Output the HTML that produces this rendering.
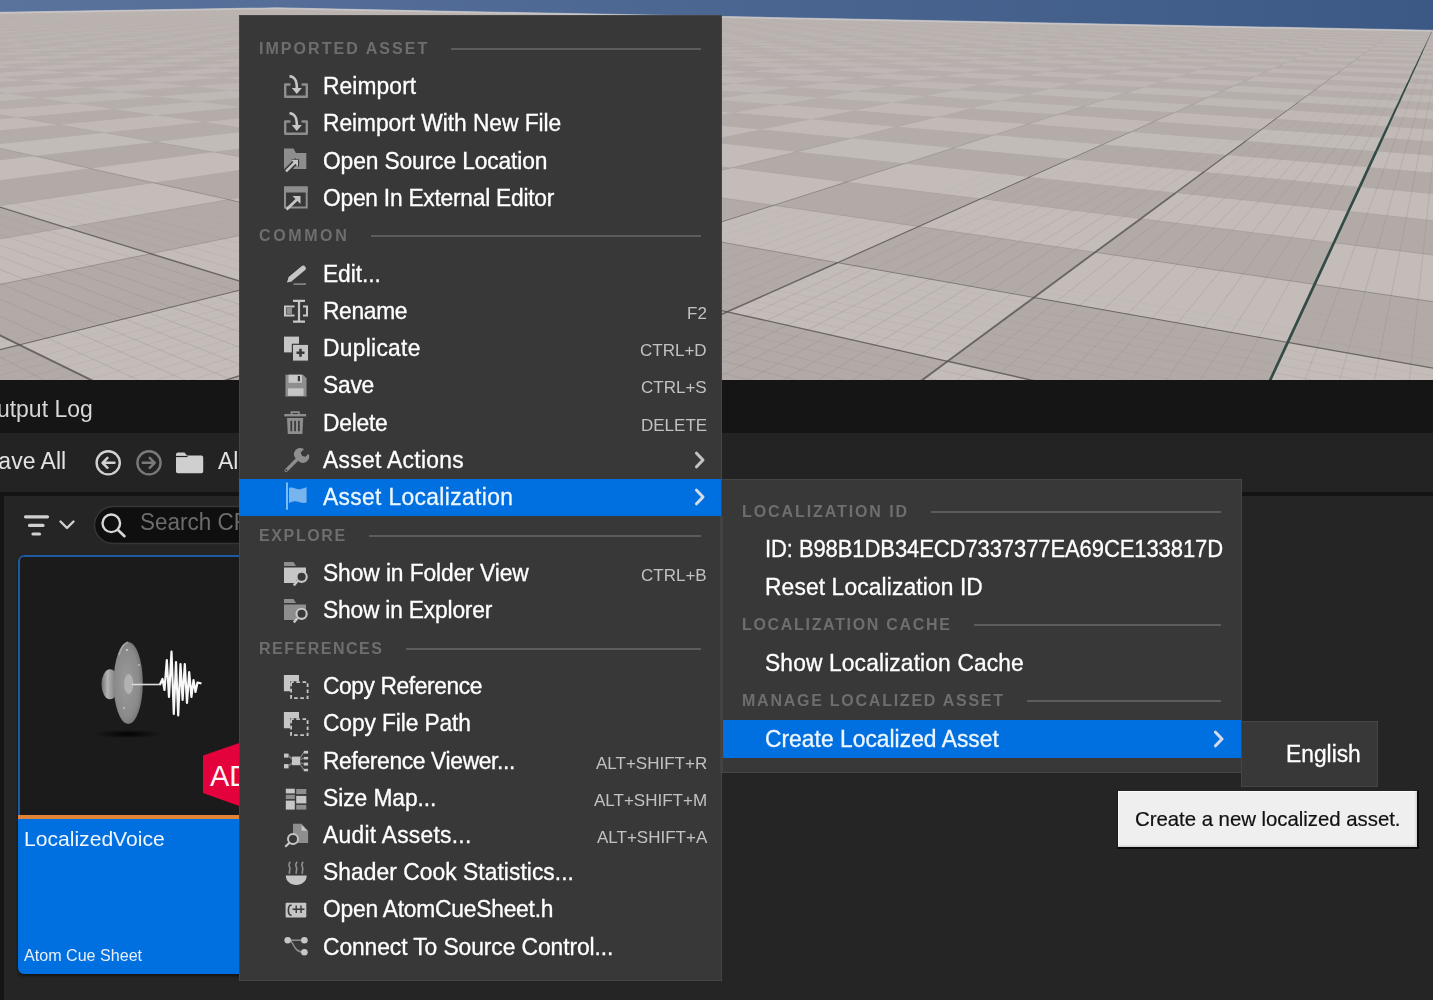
<!DOCTYPE html>
<html><head><meta charset="utf-8">
<style>
*{margin:0;padding:0;box-sizing:border-box}
html,body{width:1433px;height:1000px;overflow:hidden;background:#242424;font-family:"Liberation Sans",sans-serif}
.a{position:absolute}
.t{position:absolute;white-space:nowrap;line-height:1;will-change:transform}
.it{-webkit-text-stroke:0.3px currentColor}
.a svg{display:block}
</style></head><body>
<svg width="1433" height="380" viewBox="0 0 1433 380" style="position:absolute;left:0;top:0;filter:blur(0.45px)"><defs><linearGradient id="sky" x1="0" y1="0" x2="1" y2="0"><stop offset="0" stop-color="#5a739d"/><stop offset="1" stop-color="#3c5985"/></linearGradient><clipPath id="fl"><polygon points="0.0,12.3 276.7,7.8 1433.0,30.3 1433,380 0,380"/></clipPath><linearGradient id="fog" x1="0" y1="0" x2="0" y2="1"><stop offset="0" stop-color="#bab3b0" stop-opacity="0.9"/><stop offset="0.06" stop-color="#bab3b0" stop-opacity="0.3"/><stop offset="0.15" stop-color="#bab3b0" stop-opacity="0"/></linearGradient></defs><rect width="1433" height="380" fill="url(#sky)"/><g clip-path="url(#fl)"><rect width="1433" height="380" fill="#bab3b0"/><g fill="#c3bcb9" fill-opacity="0.3"><polygon points="-12.0,15.5 -4.3,15.8 -26.5,16.2 -34.1,15.9"/><polygon points="17.3,15.4 25.3,15.7 3.7,16.1 -4.3,15.8"/><polygon points="3.7,16.1 11.8,16.5 -10.7,16.9 -18.7,16.6"/><polygon points="33.6,16.0 42.0,16.4 20.1,16.8 11.8,16.5"/><polygon points="-10.7,16.9 -2.5,17.2 -25.9,17.7 -33.9,17.3"/><polygon points="63.3,15.9 72.0,16.2 50.6,16.7 42.0,16.4"/><polygon points="20.1,16.8 28.6,17.1 5.8,17.6 -2.5,17.2"/><polygon points="92.7,15.8 101.7,16.1 80.9,16.6 72.0,16.2"/><polygon points="50.6,16.7 59.4,17.0 37.3,17.4 28.6,17.1"/><polygon points="5.8,17.6 14.4,17.9 -9.2,18.4 -17.7,18.0"/><polygon points="121.9,15.7 131.3,16.0 111.0,16.5 101.7,16.1"/><polygon points="80.9,16.6 90.1,16.9 68.5,17.3 59.4,17.0"/><polygon points="37.3,17.4 46.2,17.8 23.2,18.3 14.4,17.9"/><polygon points="-9.2,18.4 -0.6,18.7 -25.2,19.2 -33.6,18.9"/><polygon points="150.9,15.6 160.5,15.9 140.8,16.3 131.3,16.0"/><polygon points="111.0,16.5 120.4,16.8 99.4,17.2 90.1,16.9"/><polygon points="68.5,17.3 77.7,17.7 55.3,18.1 46.2,17.8"/><polygon points="23.2,18.3 32.2,18.6 8.2,19.1 -0.6,18.7"/><polygon points="179.7,15.5 189.6,15.8 170.4,16.2 160.5,15.9"/><polygon points="140.8,16.3 150.5,16.7 130.1,17.1 120.4,16.8"/><polygon points="99.4,17.2 109.0,17.6 87.2,18.0 77.7,17.7"/><polygon points="55.3,18.1 64.7,18.5 41.4,19.0 32.2,18.6"/><polygon points="8.2,19.1 17.3,19.5 -7.6,20.0 -16.5,19.6"/><polygon points="208.3,15.4 218.4,15.7 199.7,16.1 189.6,15.8"/><polygon points="170.4,16.2 180.4,16.6 160.5,17.0 150.5,16.7"/><polygon points="130.1,17.1 140.0,17.4 118.8,17.9 109.0,17.6"/><polygon points="87.2,18.0 96.9,18.4 74.2,18.9 64.7,18.5"/><polygon points="41.4,19.0 50.8,19.4 26.6,19.9 17.3,19.5"/><polygon points="-7.6,20.0 1.6,20.4 -24.4,21.0 -33.4,20.6"/><polygon points="199.7,16.1 210.0,16.5 190.7,16.9 180.4,16.6"/><polygon points="160.5,17.0 170.7,17.3 150.1,17.8 140.0,17.4"/><polygon points="118.8,17.9 128.8,18.2 106.8,18.7 96.9,18.4"/><polygon points="74.2,18.9 84.0,19.2 60.5,19.8 50.8,19.4"/><polygon points="26.6,19.9 36.2,20.3 10.9,20.9 1.6,20.4"/><polygon points="228.8,16.0 239.5,16.3 220.6,16.8 210.0,16.5"/><polygon points="190.7,16.9 201.2,17.2 181.2,17.7 170.7,17.3"/><polygon points="150.1,17.8 160.5,18.1 139.1,18.6 128.8,18.2"/><polygon points="106.8,18.7 117.0,19.1 94.1,19.6 84.0,19.2"/><polygon points="60.5,19.8 70.4,20.2 45.9,20.7 36.2,20.3"/><polygon points="10.9,20.9 20.6,21.3 -5.8,21.9 -15.2,21.4"/><polygon points="257.7,15.9 268.6,16.2 250.3,16.7 239.5,16.3"/><polygon points="220.6,16.8 231.4,17.1 212.0,17.5 201.2,17.2"/><polygon points="181.2,17.7 191.9,18.0 171.1,18.5 160.5,18.1"/><polygon points="139.1,18.6 149.6,19.0 127.4,19.5 117.0,19.1"/><polygon points="94.1,19.6 104.4,20.0 80.6,20.6 70.4,20.2"/><polygon points="45.9,20.7 56.0,21.1 30.5,21.7 20.6,21.3"/><polygon points="-5.8,21.9 4.0,22.3 -23.5,23.0 -33.1,22.5"/><polygon points="286.4,15.8 297.6,16.1 279.8,16.6 268.6,16.2"/><polygon points="250.3,16.7 261.4,17.0 242.5,17.4 231.4,17.1"/><polygon points="212.0,17.5 223.0,17.9 202.8,18.4 191.9,18.0"/><polygon points="171.1,18.5 182.0,18.9 160.4,19.4 149.6,19.0"/><polygon points="127.4,19.5 138.1,19.9 115.0,20.4 104.4,20.0"/><polygon points="80.6,20.6 91.1,21.0 66.3,21.6 56.0,21.1"/><polygon points="30.5,21.7 40.6,22.2 13.9,22.8 4.0,22.3"/><polygon points="314.8,15.7 326.3,16.0 309.0,16.5 297.6,16.1"/><polygon points="279.8,16.6 291.2,16.9 272.8,17.3 261.4,17.0"/><polygon points="242.5,17.4 253.9,17.8 234.3,18.2 223.0,17.9"/><polygon points="202.8,18.4 214.0,18.7 193.1,19.2 182.0,18.9"/><polygon points="160.4,19.4 171.5,19.8 149.1,20.3 138.1,19.9"/><polygon points="115.0,20.4 125.9,20.9 101.9,21.4 91.1,21.0"/><polygon points="66.3,21.6 76.9,22.0 51.1,22.6 40.6,22.2"/><polygon points="13.9,22.8 24.2,23.3 -3.7,24.0 -13.8,23.5"/><polygon points="343.0,15.6 354.8,15.9 338.0,16.3 326.3,16.0"/><polygon points="309.0,16.5 320.7,16.8 302.9,17.2 291.2,16.9"/><polygon points="272.8,17.3 284.5,17.7 265.5,18.1 253.9,17.8"/><polygon points="234.3,18.2 245.8,18.6 225.5,19.1 214.0,18.7"/><polygon points="193.1,19.2 204.6,19.6 182.8,20.2 171.5,19.8"/><polygon points="149.1,20.3 160.4,20.7 137.0,21.3 125.9,20.9"/><polygon points="101.9,21.4 112.9,21.9 87.8,22.5 76.9,22.0"/><polygon points="51.1,22.6 61.8,23.1 34.8,23.8 24.2,23.3"/><polygon points="-3.7,24.0 6.7,24.5 -22.6,25.2 -32.7,24.7"/><polygon points="371.0,15.5 383.0,15.8 366.8,16.2 354.8,15.9"/><polygon points="338.0,16.3 350.0,16.7 332.7,17.1 320.7,16.8"/><polygon points="302.9,17.2 314.8,17.5 296.4,18.0 284.5,17.7"/><polygon points="265.5,18.1 277.4,18.5 257.7,19.0 245.8,18.6"/><polygon points="225.5,19.1 237.3,19.5 216.3,20.0 204.6,19.6"/><polygon points="182.8,20.2 194.5,20.6 171.9,21.1 160.4,20.7"/><polygon points="137.0,21.3 148.5,21.7 124.2,22.3 112.9,21.9"/><polygon points="87.8,22.5 99.0,23.0 72.9,23.6 61.8,23.1"/><polygon points="34.8,23.8 45.7,24.3 17.3,25.0 6.7,24.5"/><polygon points="398.8,15.4 411.1,15.7 395.3,16.1 383.0,15.8"/><polygon points="366.8,16.2 379.0,16.6 362.3,17.0 350.0,16.7"/><polygon points="332.7,17.1 345.0,17.4 327.1,17.9 314.8,17.5"/><polygon points="296.4,18.0 308.6,18.4 289.6,18.9 277.4,18.5"/><polygon points="257.7,19.0 269.8,19.4 249.4,19.9 237.3,19.5"/><polygon points="216.3,20.0 228.3,20.4 206.5,21.0 194.5,20.6"/><polygon points="171.9,21.1 183.8,21.6 160.3,22.2 148.5,21.7"/><polygon points="124.2,22.3 135.9,22.8 110.6,23.5 99.0,23.0"/><polygon points="72.9,23.6 84.2,24.1 56.8,24.8 45.7,24.3"/><polygon points="17.3,25.0 28.3,25.6 -1.3,26.3 -12.1,25.8"/><polygon points="395.3,16.1 407.9,16.4 391.6,16.9 379.0,16.6"/><polygon points="362.3,17.0 374.8,17.3 357.5,17.8 345.0,17.4"/><polygon points="327.1,17.9 339.6,18.2 321.2,18.7 308.6,18.4"/><polygon points="289.6,18.9 302.1,19.2 282.3,19.7 269.8,19.4"/><polygon points="249.4,19.9 261.9,20.3 240.7,20.8 228.3,20.4"/><polygon points="206.5,21.0 218.8,21.4 196.0,22.0 183.8,21.6"/><polygon points="160.3,22.2 172.4,22.6 147.9,23.3 135.9,22.8"/><polygon points="110.6,23.5 122.4,24.0 95.9,24.7 84.2,24.1"/><polygon points="56.8,24.8 68.4,25.4 39.7,26.1 28.3,25.6"/><polygon points="-1.3,26.3 9.8,26.9 -21.5,27.7 -32.3,27.1"/><polygon points="423.6,16.0 436.4,16.3 420.7,16.8 407.9,16.4"/><polygon points="391.6,16.9 404.4,17.2 387.7,17.7 374.8,17.3"/><polygon points="357.5,17.8 370.4,18.1 352.5,18.6 339.6,18.2"/><polygon points="321.2,18.7 334.0,19.1 314.9,19.6 302.1,19.2"/><polygon points="282.3,19.7 295.1,20.1 274.6,20.7 261.9,20.3"/><polygon points="240.7,20.8 253.4,21.3 231.4,21.9 218.8,21.4"/><polygon points="196.0,22.0 208.5,22.5 184.8,23.1 172.4,22.6"/><polygon points="147.9,23.3 160.2,23.8 134.6,24.5 122.4,24.0"/><polygon points="95.9,24.7 108.0,25.2 80.3,25.9 68.4,25.4"/><polygon points="39.7,26.1 51.4,26.7 21.2,27.5 9.8,26.9"/><polygon points="451.7,15.9 464.8,16.2 449.5,16.7 436.4,16.3"/><polygon points="420.7,16.8 433.8,17.1 417.6,17.5 404.4,17.2"/><polygon points="387.7,17.7 400.8,18.0 383.5,18.5 370.4,18.1"/><polygon points="352.5,18.6 365.6,19.0 347.1,19.5 334.0,19.1"/><polygon points="314.9,19.6 328.0,20.0 308.2,20.6 295.1,20.1"/><polygon points="274.6,20.7 287.7,21.1 266.4,21.7 253.4,21.3"/><polygon points="231.4,21.9 244.3,22.3 221.4,23.0 208.5,22.5"/><polygon points="184.8,23.1 197.6,23.6 172.9,24.3 160.2,23.8"/><polygon points="134.6,24.5 147.2,25.0 120.4,25.7 108.0,25.2"/><polygon points="80.3,25.9 92.5,26.5 63.4,27.3 51.4,26.7"/><polygon points="21.2,27.5 33.1,28.2 1.3,29.0 -10.2,28.4"/><polygon points="479.6,15.8 492.9,16.1 478.2,16.6 464.8,16.2"/><polygon points="449.5,16.7 463.0,17.0 447.3,17.4 433.8,17.1"/><polygon points="417.6,17.5 431.1,17.9 414.3,18.4 400.8,18.0"/><polygon points="383.5,18.5 397.0,18.8 379.1,19.4 365.6,19.0"/><polygon points="347.1,19.5 360.6,19.9 341.5,20.4 328.0,20.0"/><polygon points="308.2,20.6 321.7,21.0 301.1,21.6 287.7,21.1"/><polygon points="266.4,21.7 279.8,22.2 257.7,22.8 244.3,22.3"/><polygon points="221.4,23.0 234.7,23.4 210.8,24.1 197.6,23.6"/><polygon points="172.9,24.3 186.0,24.8 160.2,25.6 147.2,25.0"/><polygon points="120.4,25.7 133.2,26.3 105.2,27.1 92.5,26.5"/><polygon points="63.4,27.3 75.9,27.9 45.3,28.8 33.1,28.2"/><polygon points="1.3,29.0 13.3,29.7 -20.2,30.7 -31.8,29.9"/><polygon points="507.2,15.7 520.8,16.0 506.6,16.4 492.9,16.1"/><polygon points="478.2,16.6 491.9,16.9 476.7,17.3 463.0,17.0"/><polygon points="447.3,17.4 461.0,17.8 444.8,18.2 431.1,17.9"/><polygon points="414.3,18.4 428.1,18.7 410.9,19.2 397.0,18.8"/><polygon points="379.1,19.4 393.0,19.7 374.5,20.3 360.6,19.9"/><polygon points="341.5,20.4 355.3,20.8 335.5,21.4 321.7,21.0"/><polygon points="301.1,21.6 314.9,22.0 293.6,22.6 279.8,22.2"/><polygon points="257.7,22.8 271.4,23.3 248.3,23.9 234.7,23.4"/><polygon points="210.8,24.1 224.4,24.6 199.5,25.4 186.0,24.8"/><polygon points="160.2,25.6 173.5,26.1 146.4,26.9 133.2,26.3"/><polygon points="105.2,27.1 118.2,27.7 88.7,28.6 75.9,27.9"/><polygon points="45.3,28.8 57.9,29.5 25.7,30.4 13.3,29.7"/><polygon points="534.7,15.6 548.5,15.9 534.8,16.3 520.8,16.0"/><polygon points="506.6,16.4 520.5,16.8 505.9,17.2 491.9,16.9"/><polygon points="476.7,17.3 490.7,17.7 475.1,18.1 461.0,17.8"/><polygon points="444.8,18.2 459.0,18.6 442.3,19.1 428.1,18.7"/><polygon points="410.9,19.2 425.0,19.6 407.2,20.1 393.0,19.7"/><polygon points="374.5,20.3 388.7,20.7 369.5,21.3 355.3,20.8"/><polygon points="335.5,21.4 349.7,21.9 329.1,22.5 314.9,22.0"/><polygon points="293.6,22.6 307.7,23.1 285.5,23.8 271.4,23.3"/><polygon points="248.3,23.9 262.4,24.5 238.4,25.2 224.4,24.6"/><polygon points="199.5,25.4 213.3,25.9 187.3,26.7 173.5,26.1"/><polygon points="146.4,26.9 160.1,27.5 131.7,28.4 118.2,27.7"/><polygon points="88.7,28.6 102.0,29.2 71.0,30.2 57.9,29.5"/><polygon points="25.7,30.4 38.5,31.1 4.4,32.2 -8.1,31.4"/><polygon points="561.9,15.5 576.0,15.8 562.7,16.2 548.5,15.9"/><polygon points="534.8,16.3 549.0,16.7 534.8,17.1 520.5,16.8"/><polygon points="505.9,17.2 520.2,17.5 505.1,18.0 490.7,17.7"/><polygon points="475.1,18.1 489.6,18.5 473.5,19.0 459.0,18.6"/><polygon points="442.3,19.1 456.8,19.5 439.6,20.0 425.0,19.6"/><polygon points="407.2,20.1 421.8,20.6 403.3,21.1 388.7,20.7"/><polygon points="369.5,21.3 384.1,21.7 364.3,22.3 349.7,21.9"/><polygon points="329.1,22.5 343.7,22.9 322.3,23.6 307.7,23.1"/><polygon points="285.5,23.8 300.0,24.3 276.9,25.0 262.4,24.5"/><polygon points="238.4,25.2 252.8,25.7 227.7,26.5 213.3,25.9"/><polygon points="187.3,26.7 201.5,27.3 174.1,28.1 160.1,27.5"/><polygon points="131.7,28.4 145.6,29.0 115.7,29.9 102.0,29.2"/><polygon points="71.0,30.2 84.5,30.9 51.8,31.9 38.5,31.1"/><polygon points="4.4,32.2 17.4,32.9 -18.7,34.1 -31.3,33.2"/><polygon points="589.0,15.4 603.3,15.7 590.4,16.1 576.0,15.8"/><polygon points="562.7,16.2 577.2,16.5 563.5,17.0 549.0,16.7"/><polygon points="534.8,17.1 549.4,17.4 534.9,17.9 520.2,17.5"/><polygon points="505.1,18.0 519.9,18.4 504.4,18.8 489.6,18.5"/><polygon points="473.5,19.0 488.3,19.3 471.7,19.9 456.8,19.5"/><polygon points="439.6,20.0 454.5,20.4 436.7,21.0 421.8,20.6"/><polygon points="403.3,21.1 418.3,21.6 399.1,22.2 384.1,21.7"/><polygon points="364.3,22.3 379.3,22.8 358.7,23.4 343.7,22.9"/><polygon points="322.3,23.6 337.2,24.1 314.9,24.8 300.0,24.3"/><polygon points="276.9,25.0 291.8,25.5 267.6,26.3 252.8,25.7"/><polygon points="227.7,26.5 242.4,27.1 216.1,27.9 201.5,27.3"/><polygon points="174.1,28.1 188.7,28.8 160.0,29.7 145.6,29.0"/><polygon points="115.7,29.9 130.0,30.6 98.5,31.6 84.5,30.9"/><polygon points="51.8,31.9 65.5,32.7 30.8,33.8 17.4,32.9"/><polygon points="590.4,16.1 605.2,16.4 592.0,16.9 577.2,16.5"/><polygon points="563.5,17.0 578.4,17.3 564.4,17.8 549.4,17.4"/><polygon points="534.9,17.9 549.9,18.2 535.0,18.7 519.9,18.4"/><polygon points="504.4,18.8 519.5,19.2 503.5,19.7 488.3,19.3"/><polygon points="471.7,19.9 487.0,20.3 469.8,20.8 454.5,20.4"/><polygon points="436.7,21.0 452.1,21.4 433.6,22.0 418.3,21.6"/><polygon points="399.1,22.2 414.5,22.6 394.7,23.3 379.3,22.8"/><polygon points="358.7,23.4 374.1,23.9 352.6,24.6 337.2,24.1"/><polygon points="314.9,24.8 330.3,25.4 307.1,26.1 291.8,25.5"/><polygon points="267.6,26.3 282.9,26.9 257.6,27.7 242.4,27.1"/><polygon points="216.1,27.9 231.3,28.6 203.7,29.5 188.7,28.8"/><polygon points="160.0,29.7 174.9,30.4 144.7,31.4 130.0,30.6"/><polygon points="98.5,31.6 113.0,32.4 79.7,33.5 65.5,32.7"/><polygon points="618.0,16.0 633.0,16.3 620.3,16.8 605.2,16.4"/><polygon points="592.0,16.9 607.2,17.2 593.7,17.6 578.4,17.3"/><polygon points="564.4,17.8 579.7,18.1 565.3,18.6 549.9,18.2"/><polygon points="535.0,18.7 550.5,19.1 535.1,19.6 519.5,19.2"/><polygon points="503.5,19.7 519.1,20.1 502.6,20.7 487.0,20.3"/><polygon points="469.8,20.8 485.5,21.3 467.8,21.9 452.1,21.4"/><polygon points="433.6,22.0 449.5,22.5 430.4,23.1 414.5,22.6"/><polygon points="394.7,23.3 410.6,23.8 390.0,24.5 374.1,23.9"/><polygon points="352.6,24.6 368.5,25.2 346.2,25.9 330.3,25.4"/><polygon points="307.1,26.1 322.9,26.7 298.7,27.5 282.9,26.9"/><polygon points="257.6,27.7 273.4,28.3 246.9,29.2 231.3,28.6"/><polygon points="203.7,29.5 219.2,30.2 190.3,31.1 174.9,30.4"/><polygon points="144.7,31.4 159.9,32.1 128.0,33.2 113.0,32.4"/><polygon points="645.3,15.9 660.5,16.2 648.3,16.7 633.0,16.3"/><polygon points="620.3,16.8 635.7,17.1 622.7,17.5 607.2,17.2"/><polygon points="593.7,17.6 609.3,18.0 595.5,18.5 579.7,18.1"/><polygon points="565.3,18.6 581.1,19.0 566.3,19.5 550.5,19.1"/><polygon points="535.1,19.6 551.0,20.0 535.2,20.5 519.1,20.1"/><polygon points="502.6,20.7 518.7,21.1 501.7,21.7 485.5,21.3"/><polygon points="467.8,21.9 484.0,22.3 465.7,22.9 449.5,22.5"/><polygon points="430.4,23.1 446.7,23.6 426.9,24.3 410.6,23.8"/><polygon points="390.0,24.5 406.3,25.0 384.9,25.7 368.5,25.2"/><polygon points="346.2,25.9 362.6,26.5 339.3,27.3 322.9,26.7"/><polygon points="298.7,27.5 315.0,28.1 289.6,29.0 273.4,28.3"/><polygon points="246.9,29.2 263.1,29.9 235.3,30.9 219.2,30.2"/><polygon points="190.3,31.1 206.2,31.9 175.7,32.9 159.9,32.1"/><polygon points="128.0,33.2 143.6,34.0 109.9,35.2 94.5,34.3"/><polygon points="672.4,15.8 687.8,16.1 676.1,16.5 660.5,16.2"/><polygon points="648.3,16.7 664.0,17.0 651.5,17.4 635.7,17.1"/><polygon points="622.7,17.5 638.6,17.9 625.3,18.4 609.3,18.0"/><polygon points="595.5,18.5 611.5,18.8 597.3,19.3 581.1,19.0"/><polygon points="566.3,19.5 582.6,19.9 567.4,20.4 551.0,20.0"/><polygon points="535.2,20.5 551.6,21.0 535.2,21.6 518.7,21.1"/><polygon points="501.7,21.7 518.3,22.2 500.7,22.8 484.0,22.3"/><polygon points="465.7,22.9 482.4,23.4 463.4,24.1 446.7,23.6"/><polygon points="426.9,24.3 443.7,24.8 423.2,25.5 406.3,25.0"/><polygon points="384.9,25.7 401.7,26.3 379.4,27.1 362.6,26.5"/><polygon points="339.3,27.3 356.1,27.9 331.8,28.8 315.0,28.1"/><polygon points="289.6,29.0 306.4,29.7 279.8,30.6 263.1,29.9"/><polygon points="235.3,30.9 251.9,31.6 222.7,32.7 206.2,31.9"/><polygon points="175.7,32.9 192.0,33.7 159.8,34.9 143.6,34.0"/><polygon points="699.2,15.7 715.0,16.0 703.7,16.4 687.8,16.1"/><polygon points="676.1,16.5 692.1,16.9 680.1,17.3 664.0,17.0"/><polygon points="651.5,17.4 667.7,17.8 654.9,18.2 638.6,17.9"/><polygon points="625.3,18.4 641.7,18.7 628.0,19.2 611.5,18.8"/><polygon points="597.3,19.3 613.9,19.7 599.3,20.3 582.6,19.9"/><polygon points="567.4,20.4 584.2,20.8 568.5,21.4 551.6,21.0"/><polygon points="535.2,21.6 552.2,22.0 535.3,22.6 518.3,22.2"/><polygon points="500.7,22.8 517.8,23.3 499.6,23.9 482.4,23.4"/><polygon points="463.4,24.1 480.7,24.6 461.0,25.3 443.7,24.8"/><polygon points="423.2,25.5 440.5,26.1 419.1,26.9 401.7,26.3"/><polygon points="379.4,27.1 396.8,27.7 373.6,28.6 356.1,27.9"/><polygon points="331.8,28.8 349.2,29.4 323.8,30.4 306.4,29.7"/><polygon points="279.8,30.6 297.1,31.4 269.2,32.4 251.9,31.6"/><polygon points="222.7,32.7 239.8,33.5 209.0,34.6 192.0,33.7"/><polygon points="725.9,15.6 741.9,15.9 731.1,16.3 715.0,16.0"/><polygon points="703.7,16.4 719.9,16.8 708.4,17.2 692.1,16.9"/><polygon points="680.1,17.3 696.5,17.6 684.2,18.1 667.7,17.8"/><polygon points="654.9,18.2 671.6,18.6 658.5,19.1 641.7,18.7"/><polygon points="628.0,19.2 644.9,19.6 630.9,20.1 613.9,19.7"/><polygon points="599.3,20.3 616.4,20.7 601.4,21.3 584.2,20.8"/><polygon points="568.5,21.4 585.8,21.8 569.7,22.5 552.2,22.0"/><polygon points="535.3,22.6 552.9,23.1 535.4,23.8 517.8,23.3"/><polygon points="499.6,23.9 517.3,24.4 498.5,25.2 480.7,24.6"/><polygon points="461.0,25.3 478.9,25.9 458.4,26.7 440.5,26.1"/><polygon points="419.1,26.9 437.1,27.5 414.8,28.3 396.8,27.7"/><polygon points="373.6,28.6 391.6,29.2 367.2,30.1 349.2,29.4"/><polygon points="323.8,30.4 341.8,31.1 315.1,32.1 297.1,31.4"/><polygon points="269.2,32.4 287.0,33.2 257.6,34.3 239.8,33.5"/><polygon points="752.4,15.5 768.6,15.8 758.2,16.2 741.9,15.9"/><polygon points="731.1,16.3 747.5,16.6 736.5,17.1 719.9,16.8"/><polygon points="708.4,17.2 725.1,17.5 713.3,18.0 696.5,17.6"/><polygon points="684.2,18.1 701.2,18.5 688.7,19.0 671.6,18.6"/><polygon points="658.5,19.1 675.7,19.5 662.3,20.0 644.9,19.6"/><polygon points="630.9,20.1 648.4,20.5 634.0,21.1 616.4,20.7"/><polygon points="601.4,21.3 619.1,21.7 603.6,22.3 585.8,21.8"/><polygon points="569.7,22.5 587.6,22.9 570.9,23.6 552.9,23.1"/><polygon points="535.4,23.8 553.6,24.3 535.6,25.0 517.3,24.4"/><polygon points="498.5,25.2 516.8,25.7 497.3,26.5 478.9,25.9"/><polygon points="458.4,26.7 476.9,27.3 455.6,28.1 437.1,27.5"/><polygon points="414.8,28.3 433.4,29.0 410.2,29.9 391.6,29.2"/><polygon points="367.2,30.1 385.8,30.9 360.4,31.9 341.8,31.1"/><polygon points="315.1,32.1 333.6,32.9 305.6,34.0 287.0,33.2"/><polygon points="758.2,16.2 774.9,16.5 764.3,17.0 747.5,16.6"/><polygon points="736.5,17.1 753.4,17.4 742.2,17.9 725.1,17.5"/><polygon points="713.3,18.0 730.6,18.3 718.6,18.8 701.2,18.5"/><polygon points="688.7,19.0 706.2,19.3 693.4,19.9 675.7,19.5"/><polygon points="662.3,20.0 680.1,20.4 666.3,21.0 648.4,20.5"/><polygon points="634.0,21.1 652.1,21.5 637.3,22.1 619.1,21.7"/><polygon points="603.6,22.3 621.9,22.8 606.0,23.4 587.6,22.9"/><polygon points="570.9,23.6 589.5,24.1 572.3,24.8 553.6,24.3"/><polygon points="535.6,25.0 554.3,25.5 535.7,26.3 516.8,25.7"/><polygon points="497.3,26.5 516.2,27.1 495.9,27.9 476.9,27.3"/><polygon points="455.6,28.1 474.7,28.8 452.6,29.7 433.4,29.0"/><polygon points="410.2,29.9 429.4,30.6 405.1,31.6 385.8,30.9"/><polygon points="360.4,31.9 379.6,32.6 352.9,33.7 333.6,32.9"/><polygon points="785.1,16.1 802.1,16.4 792.0,16.9 774.9,16.5"/><polygon points="764.3,17.0 781.6,17.3 770.8,17.8 753.4,17.4"/><polygon points="742.2,17.9 759.7,18.2 748.3,18.7 730.6,18.3"/><polygon points="718.6,18.8 736.4,19.2 724.2,19.7 706.2,19.3"/><polygon points="693.4,19.9 711.5,20.3 698.3,20.8 680.1,20.4"/><polygon points="666.3,21.0 684.7,21.4 670.6,22.0 652.1,21.5"/><polygon points="637.3,22.1 656.0,22.6 640.8,23.3 621.9,22.8"/><polygon points="606.0,23.4 625.0,23.9 608.6,24.6 589.5,24.1"/><polygon points="572.3,24.8 591.5,25.3 573.7,26.1 554.3,25.5"/><polygon points="535.7,26.3 555.2,26.9 535.8,27.7 516.2,27.1"/><polygon points="495.9,27.9 515.6,28.5 494.5,29.4 474.7,28.8"/><polygon points="452.6,29.7 472.4,30.4 449.3,31.3 429.4,30.6"/><polygon points="405.1,31.6 425.1,32.4 399.6,33.4 379.6,32.6"/><polygon points="811.9,16.0 829.0,16.3 819.4,16.8 802.1,16.4"/><polygon points="792.0,16.9 809.5,17.2 799.2,17.6 781.6,17.3"/><polygon points="770.8,17.8 788.6,18.1 777.7,18.6 759.7,18.2"/><polygon points="748.3,18.7 766.4,19.1 754.7,19.6 736.4,19.2"/><polygon points="724.2,19.7 742.6,20.1 730.1,20.7 711.5,20.3"/><polygon points="698.3,20.8 717.1,21.2 703.6,21.8 684.7,21.4"/><polygon points="670.6,22.0 689.7,22.5 675.2,23.1 656.0,22.6"/><polygon points="640.8,23.3 660.2,23.7 644.5,24.4 625.0,23.9"/><polygon points="608.6,24.6 628.2,25.1 611.3,25.9 591.5,25.3"/><polygon points="573.7,26.1 593.7,26.7 575.2,27.5 555.2,26.9"/><polygon points="535.8,27.7 556.0,28.3 536.0,29.2 515.6,28.5"/><polygon points="494.5,29.4 515.0,30.1 493.0,31.1 472.4,30.4"/><polygon points="449.3,31.3 469.9,32.1 445.8,33.2 425.1,32.4"/><polygon points="819.4,16.8 837.1,17.1 827.3,17.5 809.5,17.2"/><polygon points="799.2,17.6 817.3,18.0 806.8,18.5 788.6,18.1"/><polygon points="777.7,18.6 796.1,19.0 784.9,19.5 766.4,19.1"/><polygon points="754.7,19.6 773.4,20.0 761.5,20.5 742.6,20.1"/><polygon points="730.1,20.7 749.1,21.1 736.3,21.7 717.1,21.2"/><polygon points="703.6,21.8 723.1,22.3 709.3,22.9 689.7,22.5"/><polygon points="675.2,23.1 695.0,23.6 680.1,24.3 660.2,23.7"/><polygon points="644.5,24.4 664.6,25.0 648.5,25.7 628.2,25.1"/><polygon points="611.3,25.9 631.7,26.5 614.2,27.3 593.7,26.7"/><polygon points="575.2,27.5 596.0,28.1 576.9,29.0 556.0,28.3"/><polygon points="536.0,29.2 557.0,29.9 536.1,30.8 515.0,30.1"/><polygon points="493.0,31.1 514.2,31.8 491.3,32.9 469.9,32.1"/><polygon points="445.8,33.2 467.2,34.0 441.9,35.1 420.4,34.3"/><polygon points="846.6,16.6 864.6,17.0 855.3,17.4 837.1,17.1"/><polygon points="827.3,17.5 845.7,17.9 835.8,18.3 817.3,18.0"/><polygon points="806.8,18.5 825.5,18.8 814.9,19.3 796.1,19.0"/><polygon points="784.9,19.5 804.0,19.9 792.6,20.4 773.4,20.0"/><polygon points="761.5,20.5 780.9,21.0 768.7,21.5 749.1,21.1"/><polygon points="736.3,21.7 756.1,22.1 743.0,22.8 723.1,22.3"/><polygon points="709.3,22.9 729.4,23.4 715.3,24.1 695.0,23.6"/><polygon points="680.1,24.3 700.6,24.8 685.3,25.5 664.6,25.0"/><polygon points="648.5,25.7 669.4,26.3 652.8,27.1 631.7,26.5"/><polygon points="614.2,27.3 635.5,27.9 617.4,28.7 596.0,28.1"/><polygon points="576.9,29.0 598.5,29.6 578.7,30.6 557.0,29.9"/><polygon points="536.1,30.8 558.0,31.6 536.3,32.6 514.2,31.8"/><polygon points="491.3,32.9 513.5,33.7 489.5,34.8 467.2,34.0"/><polygon points="855.3,17.4 873.8,17.8 864.4,18.2 845.7,17.9"/><polygon points="835.8,18.3 854.7,18.7 844.6,19.2 825.5,18.8"/><polygon points="814.9,19.3 834.3,19.7 823.5,20.3 804.0,19.9"/><polygon points="792.6,20.4 812.4,20.8 800.8,21.4 780.9,21.0"/><polygon points="768.7,21.5 788.9,22.0 776.4,22.6 756.1,22.1"/><polygon points="743.0,22.8 763.6,23.2 750.2,23.9 729.4,23.4"/><polygon points="715.3,24.1 736.2,24.6 721.8,25.3 700.6,24.8"/><polygon points="685.3,25.5 706.7,26.1 691.0,26.9 669.4,26.3"/><polygon points="652.8,27.1 674.6,27.7 657.4,28.5 635.5,27.9"/><polygon points="617.4,28.7 639.5,29.4 620.8,30.3 598.5,29.6"/><polygon points="578.7,30.6 601.2,31.3 580.7,32.3 558.0,31.6"/><polygon points="536.3,32.6 559.1,33.4 536.5,34.5 513.5,33.7"/><polygon points="882.9,17.3 901.8,17.6 892.9,18.1 873.8,17.8"/><polygon points="864.4,18.2 883.6,18.6 874.1,19.1 854.7,18.7"/><polygon points="844.6,19.2 864.3,19.6 854.1,20.1 834.3,19.7"/><polygon points="823.5,20.3 843.5,20.7 832.6,21.2 812.4,20.8"/><polygon points="800.8,21.4 821.3,21.8 809.5,22.4 788.9,22.0"/><polygon points="776.4,22.6 797.3,23.1 784.7,23.7 763.6,23.2"/><polygon points="750.2,23.9 771.5,24.4 757.8,25.1 736.2,24.6"/><polygon points="721.8,25.3 743.5,25.9 728.7,26.7 706.7,26.1"/><polygon points="691.0,26.9 713.2,27.5 697.0,28.3 674.6,27.7"/><polygon points="657.4,28.5 680.1,29.2 662.4,30.1 639.5,29.4"/><polygon points="620.8,30.3 643.9,31.1 624.5,32.1 601.2,31.3"/><polygon points="580.7,32.3 604.2,33.1 582.8,34.3 559.1,33.4"/><polygon points="892.9,18.1 912.3,18.5 903.3,19.0 883.6,18.6"/><polygon points="874.1,19.1 894.0,19.5 884.4,20.0 864.3,19.6"/><polygon points="854.1,20.1 874.4,20.5 864.1,21.1 843.5,20.7"/><polygon points="832.6,21.2 853.4,21.7 842.3,22.3 821.3,21.8"/><polygon points="809.5,22.4 830.8,22.9 818.8,23.6 797.3,23.1"/><polygon points="784.7,23.7 806.4,24.2 793.5,25.0 771.5,24.4"/><polygon points="757.8,25.1 780.0,25.7 766.0,26.5 743.5,25.9"/><polygon points="728.7,26.7 751.4,27.3 736.1,28.1 713.2,27.5"/><polygon points="697.0,28.3 720.2,29.0 703.5,29.9 680.1,29.2"/><polygon points="662.4,30.1 686.1,30.8 667.8,31.8 643.9,31.1"/><polygon points="624.5,32.1 648.7,32.9 628.6,34.0 604.2,33.1"/><polygon points="921.0,18.0 940.8,18.3 932.3,18.8 912.3,18.5"/><polygon points="903.3,19.0 923.5,19.3 914.4,19.9 894.0,19.5"/><polygon points="884.4,20.0 905.0,20.4 895.3,21.0 874.4,20.5"/><polygon points="864.1,21.1 885.2,21.5 874.8,22.1 853.4,21.7"/><polygon points="842.3,22.3 863.9,22.8 852.7,23.4 830.8,22.9"/><polygon points="818.8,23.6 841.0,24.1 828.8,24.8 806.4,24.2"/><polygon points="793.5,25.0 816.1,25.5 802.9,26.3 780.0,25.7"/><polygon points="766.0,26.5 789.2,27.0 774.8,27.9 751.4,27.3"/><polygon points="736.1,28.1 759.8,28.7 744.2,29.6 720.2,29.0"/><polygon points="703.5,29.9 727.8,30.6 710.6,31.6 686.1,30.8"/><polygon points="667.8,31.8 692.6,32.6 673.7,33.7 648.7,32.9"/><polygon points="932.3,18.8 952.7,19.2 944.2,19.7 923.5,19.3"/><polygon points="914.4,19.9 935.4,20.3 926.2,20.8 905.0,20.4"/><polygon points="895.3,21.0 916.8,21.4 906.9,22.0 885.2,21.5"/><polygon points="874.8,22.1 896.7,22.6 886.1,23.2 863.9,22.8"/><polygon points="852.7,23.4 875.2,23.9 863.7,24.6 841.0,24.1"/><polygon points="828.8,24.8 851.8,25.3 839.4,26.1 816.1,25.5"/><polygon points="802.9,26.3 826.5,26.8 813.1,27.7 789.2,27.0"/><polygon points="774.8,27.9 799.0,28.5 784.3,29.4 759.8,28.7"/><polygon points="744.2,29.6 769.0,30.3 752.9,31.3 727.8,30.6"/><polygon points="710.6,31.6 736.0,32.3 718.3,33.4 692.6,32.6"/><polygon points="961.0,18.7 981.7,19.1 973.7,19.6 952.7,19.2"/><polygon points="944.2,19.7 965.4,20.1 956.9,20.7 935.4,20.3"/><polygon points="926.2,20.8 948.0,21.2 938.8,21.8 916.8,21.4"/><polygon points="906.9,22.0 929.2,22.4 919.3,23.1 896.7,22.6"/><polygon points="886.1,23.2 909.0,23.7 898.3,24.4 875.2,23.9"/><polygon points="863.7,24.6 887.2,25.1 875.6,25.9 851.8,25.3"/><polygon points="839.4,26.1 863.5,26.6 850.9,27.4 826.5,26.8"/><polygon points="813.1,27.7 837.8,28.3 824.0,29.2 799.0,28.5"/><polygon points="784.3,29.4 809.6,30.1 794.6,31.1 769.0,30.3"/><polygon points="752.9,31.3 778.8,32.1 762.3,33.1 736.0,32.3"/><polygon points="973.7,19.6 995.2,20.0 987.2,20.5 965.4,20.1"/><polygon points="956.9,20.7 978.9,21.1 970.3,21.7 948.0,21.2"/><polygon points="938.8,21.8 961.4,22.3 952.1,22.9 929.2,22.4"/><polygon points="919.3,23.1 942.5,23.6 932.5,24.2 909.0,23.7"/><polygon points="898.3,24.4 922.1,24.9 911.3,25.7 887.2,25.1"/><polygon points="875.6,25.9 900.1,26.4 888.3,27.2 863.5,26.6"/><polygon points="850.9,27.4 876.0,28.1 863.2,28.9 837.8,28.3"/><polygon points="824.0,29.2 849.9,29.9 835.8,30.8 809.6,30.1"/><polygon points="794.6,31.1 821.2,31.8 805.8,32.8 778.8,32.1"/><polygon points="762.3,33.1 789.6,33.9 772.6,35.1 744.9,34.2"/><polygon points="1003.0,19.5 1024.8,19.8 1017.3,20.4 995.2,20.0"/><polygon points="987.2,20.5 1009.6,20.9 1001.6,21.5 978.9,21.1"/><polygon points="970.3,21.7 993.3,22.1 984.7,22.7 961.4,22.3"/><polygon points="952.1,22.9 975.7,23.4 966.4,24.1 942.5,23.6"/><polygon points="932.5,24.2 956.8,24.8 946.7,25.5 922.1,24.9"/><polygon points="911.3,25.7 936.2,26.2 925.3,27.0 900.1,26.4"/><polygon points="888.3,27.2 913.9,27.9 902.0,28.7 876.0,28.1"/><polygon points="863.2,28.9 889.6,29.6 876.6,30.6 849.9,29.9"/><polygon points="835.8,30.8 863.0,31.5 848.7,32.6 821.2,31.8"/><polygon points="805.8,32.8 833.7,33.7 817.9,34.8 789.6,33.9"/><polygon points="1017.3,20.4 1039.9,20.8 1032.5,21.4 1009.6,20.9"/><polygon points="1001.6,21.5 1024.8,22.0 1016.8,22.6 993.3,22.1"/><polygon points="984.7,22.7 1008.6,23.2 1000.0,23.9 975.7,23.4"/><polygon points="966.4,24.1 991.0,24.6 981.7,25.3 956.8,24.8"/><polygon points="946.7,25.5 972.0,26.1 961.9,26.8 936.2,26.2"/><polygon points="925.3,27.0 951.4,27.6 940.4,28.5 913.9,27.9"/><polygon points="902.0,28.7 928.9,29.4 916.8,30.3 889.6,29.6"/><polygon points="876.6,30.6 904.2,31.3 891.0,32.3 863.0,31.5"/><polygon points="848.7,32.6 877.2,33.4 862.6,34.5 833.7,33.7"/><polygon points="1047.1,20.2 1070.0,20.7 1063.2,21.2 1039.9,20.8"/><polygon points="1032.5,21.4 1056.1,21.8 1048.7,22.4 1024.8,22.0"/><polygon points="1016.8,22.6 1041.1,23.1 1033.2,23.7 1008.6,23.2"/><polygon points="1000.0,23.9 1024.9,24.4 1016.3,25.1 991.0,24.6"/><polygon points="981.7,25.3 1007.4,25.9 998.1,26.6 972.0,26.1"/><polygon points="961.9,26.8 988.4,27.4 978.3,28.3 951.4,27.6"/><polygon points="940.4,28.5 967.7,29.2 956.6,30.1 928.9,29.4"/><polygon points="916.8,30.3 945.0,31.0 932.9,32.0 904.2,31.3"/><polygon points="891.0,32.3 920.1,33.1 906.8,34.2 877.2,33.4"/><polygon points="1063.2,21.2 1087.1,21.7 1080.3,22.3 1056.1,21.8"/><polygon points="1048.7,22.4 1073.3,22.9 1066.0,23.6 1041.1,23.1"/><polygon points="1033.2,23.7 1058.5,24.2 1050.6,24.9 1024.9,24.4"/><polygon points="1016.3,25.1 1042.4,25.7 1033.9,26.4 1007.4,25.9"/><polygon points="998.1,26.6 1025.0,27.2 1015.7,28.1 988.4,27.4"/><polygon points="978.3,28.3 1006.0,28.9 995.9,29.8 967.7,29.2"/><polygon points="956.6,30.1 985.3,30.8 974.2,31.8 945.0,31.0"/><polygon points="932.9,32.0 962.6,32.8 950.3,33.9 920.1,33.1"/><polygon points="1093.6,21.1 1117.7,21.5 1111.6,22.1 1087.1,21.7"/><polygon points="1080.3,22.3 1105.2,22.7 1098.6,23.4 1073.3,22.9"/><polygon points="1066.0,23.6 1091.7,24.1 1084.5,24.8 1058.5,24.2"/><polygon points="1050.6,24.9 1077.1,25.5 1069.3,26.2 1042.4,25.7"/><polygon points="1033.9,26.4 1061.2,27.0 1052.8,27.8 1025.0,27.2"/><polygon points="1015.7,28.1 1044.0,28.7 1034.8,29.6 1006.0,28.9"/><polygon points="995.9,29.8 1025.1,30.5 1015.0,31.5 985.3,30.8"/><polygon points="974.2,31.8 1004.4,32.6 993.3,33.6 962.6,32.8"/><polygon points="1111.6,22.1 1136.8,22.6 1130.8,23.2 1105.2,22.7"/><polygon points="1098.6,23.4 1124.6,23.9 1118.1,24.6 1091.7,24.1"/><polygon points="1084.5,24.8 1111.4,25.3 1104.4,26.0 1077.1,25.5"/><polygon points="1069.3,26.2 1097.0,26.8 1089.4,27.6 1061.2,27.0"/><polygon points="1052.8,27.8 1081.5,28.5 1073.1,29.4 1044.0,28.7"/><polygon points="1034.8,29.6 1064.4,30.3 1055.3,31.3 1025.1,30.5"/><polygon points="1015.0,31.5 1045.8,32.3 1035.8,33.4 1004.4,32.6"/><polygon points="1142.6,22.0 1168.1,22.4 1162.7,23.1 1136.8,22.6"/><polygon points="1130.8,23.2 1157.1,23.7 1151.3,24.4 1124.6,23.9"/><polygon points="1118.1,24.6 1145.3,25.1 1139.0,25.8 1111.4,25.3"/><polygon points="1104.4,26.0 1132.5,26.6 1125.6,27.4 1097.0,26.8"/><polygon points="1089.4,27.6 1118.5,28.3 1111.1,29.1 1081.5,28.5"/><polygon points="1073.1,29.4 1103.3,30.1 1095.2,31.0 1064.4,30.3"/><polygon points="1055.3,31.3 1086.6,32.0 1077.7,33.1 1045.8,32.3"/><polygon points="1035.8,33.4 1068.3,34.2 1058.4,35.4 1025.2,34.5"/><polygon points="1162.7,23.1 1189.4,23.5 1184.2,24.2 1157.1,23.7"/><polygon points="1151.3,24.4 1178.9,24.9 1173.3,25.7 1145.3,25.1"/><polygon points="1139.0,25.8 1167.5,26.4 1161.5,27.2 1132.5,26.6"/><polygon points="1125.6,27.4 1155.2,28.0 1148.6,28.9 1118.5,28.3"/><polygon points="1111.1,29.1 1141.7,29.8 1134.5,30.8 1103.3,30.1"/><polygon points="1095.2,31.0 1127.0,31.8 1119.1,32.8 1086.6,32.0"/><polygon points="1077.7,33.1 1110.7,33.9 1102.0,35.1 1068.3,34.2"/><polygon points="1184.2,24.2 1212.1,24.7 1207.2,25.5 1178.9,24.9"/><polygon points="1173.3,25.7 1202.2,26.2 1196.9,27.0 1167.5,26.4"/><polygon points="1161.5,27.2 1191.4,27.8 1185.7,28.7 1155.2,28.0"/><polygon points="1148.6,28.9 1179.7,29.6 1173.4,30.5 1141.7,29.8"/><polygon points="1134.5,30.8 1166.8,31.5 1159.9,32.5 1127.0,31.8"/><polygon points="1119.1,32.8 1152.7,33.6 1145.1,34.8 1110.7,33.9"/><polygon points="1216.8,24.0 1245.0,24.6 1240.8,25.3 1212.1,24.7"/><polygon points="1207.2,25.5 1236.5,26.0 1232.0,26.8 1202.2,26.2"/><polygon points="1196.9,27.0 1227.3,27.6 1222.3,28.5 1191.4,27.8"/><polygon points="1185.7,28.7 1217.2,29.4 1211.8,30.3 1179.7,29.6"/><polygon points="1173.4,30.5 1206.2,31.3 1200.3,32.3 1166.8,31.5"/><polygon points="1159.9,32.5 1194.1,33.3 1187.5,34.5 1152.7,33.6"/><polygon points="1240.8,25.3 1270.4,25.8 1266.6,26.6 1236.5,26.0"/><polygon points="1232.0,26.8 1262.7,27.4 1258.6,28.3 1227.3,27.6"/><polygon points="1222.3,28.5 1254.3,29.1 1249.8,30.0 1217.2,29.4"/><polygon points="1211.8,30.3 1245.0,31.0 1240.1,32.0 1206.2,31.3"/><polygon points="1200.3,32.3 1234.9,33.1 1229.5,34.2 1194.1,33.3"/><polygon points="1274.1,25.1 1304.0,25.6 1300.9,26.4 1270.4,25.8"/><polygon points="1266.6,26.6 1297.7,27.2 1294.4,28.0 1262.7,27.4"/><polygon points="1258.6,28.3 1290.9,28.9 1287.3,29.8 1254.3,29.1"/><polygon points="1249.8,30.0 1283.4,30.8 1279.5,31.7 1245.0,31.0"/><polygon points="1240.1,32.0 1275.3,32.8 1270.9,33.9 1234.9,33.1"/><polygon points="1300.9,26.4 1332.4,27.0 1329.8,27.8 1297.7,27.2"/><polygon points="1294.4,28.0 1327.1,28.7 1324.3,29.6 1290.9,28.9"/><polygon points="1287.3,29.8 1321.4,30.5 1318.3,31.5 1283.4,30.8"/><polygon points="1279.5,31.7 1315.1,32.5 1311.7,33.6 1275.3,32.8"/><polygon points="1334.9,26.2 1366.7,26.8 1364.9,27.6 1332.4,27.0"/><polygon points="1329.8,27.8 1363.0,28.5 1361.0,29.3 1327.1,28.7"/><polygon points="1324.3,29.6 1358.9,30.3 1356.7,31.2 1321.4,30.5"/><polygon points="1318.3,31.5 1354.4,32.3 1352.0,33.3 1315.1,32.5"/><polygon points="1364.9,27.6 1398.4,28.2 1397.2,29.1 1363.0,28.5"/><polygon points="1361.0,29.3 1395.9,30.0 1394.6,31.0 1358.9,30.3"/><polygon points="1356.7,31.2 1393.3,32.0 1391.9,33.0 1354.4,32.3"/><polygon points="1352.0,33.3 1390.4,34.1 1388.8,35.3 1349.5,34.4"/><polygon points="1399.5,27.4 1433.4,28.0 1433.0,28.9 1398.4,28.2"/><polygon points="1397.2,29.1 1432.6,29.8 1432.1,30.7 1395.9,30.0"/><polygon points="1394.6,31.0 1431.7,31.7 1431.2,32.8 1393.3,32.0"/><polygon points="1391.9,33.0 1430.7,33.9 1430.1,35.0 1390.4,34.1"/><polygon points="1433.0,28.9 1468.7,29.6 1469.1,30.5 1432.6,29.8"/><polygon points="1432.1,30.7 1469.6,31.5 1470.0,32.5 1431.7,31.7"/><polygon points="1431.2,32.8 1470.5,33.6 1470.9,34.7 1430.7,33.9"/></g><g fill="#c3bcb9" fill-opacity="0.4"><polygon points="30.8,33.8 44.8,34.6 8.0,35.8 -5.6,34.9"/><polygon points="79.7,33.5 94.5,34.3 59.3,35.5 44.8,34.6"/><polygon points="8.0,35.8 22.2,36.7 -16.9,38.0 -30.7,37.1"/><polygon points="59.3,35.5 74.4,36.4 36.9,37.7 22.2,36.7"/><polygon points="-16.9,38.0 -2.6,39.1 -44.4,40.5 -58.3,39.4"/><polygon points="109.9,35.2 125.8,36.1 90.0,37.4 74.4,36.4"/><polygon points="36.9,37.7 52.3,38.7 12.3,40.1 -2.6,39.1"/><polygon points="159.8,34.9 176.6,35.8 142.4,37.0 125.8,36.1"/><polygon points="90.0,37.4 106.3,38.4 68.2,39.8 52.3,38.7"/><polygon points="12.3,40.1 27.9,41.2 -14.8,42.8 -29.9,41.6"/><polygon points="209.0,34.6 226.6,35.5 194.0,36.7 176.6,35.8"/><polygon points="142.4,37.0 159.6,38.0 123.3,39.4 106.3,38.4"/><polygon points="68.2,39.8 84.9,40.9 44.2,42.4 27.9,41.2"/><polygon points="-14.8,42.8 1.0,44.0 -45.0,45.8 -60.2,44.5"/><polygon points="257.6,34.3 276.0,35.2 245.0,36.4 226.6,35.5"/><polygon points="194.0,36.7 212.2,37.7 177.6,39.0 159.6,38.0"/><polygon points="123.3,39.4 141.0,40.5 102.3,42.0 84.9,40.9"/><polygon points="44.2,42.4 61.2,43.6 17.5,45.3 1.0,44.0"/><polygon points="305.6,34.0 324.8,34.9 295.2,36.1 276.0,35.2"/><polygon points="245.0,36.4 264.0,37.3 231.1,38.7 212.2,37.7"/><polygon points="177.6,39.0 196.3,40.1 159.5,41.6 141.0,40.5"/><polygon points="102.3,42.0 120.4,43.2 79.0,44.9 61.2,43.6"/><polygon points="17.5,45.3 34.8,46.7 -12.3,48.6 -29.0,47.2"/><polygon points="352.9,33.7 372.9,34.6 344.8,35.8 324.8,34.9"/><polygon points="295.2,36.1 315.1,37.0 283.9,38.3 264.0,37.3"/><polygon points="231.1,38.7 250.8,39.7 215.9,41.2 196.3,40.1"/><polygon points="159.5,41.6 178.8,42.8 139.4,44.4 120.4,43.2"/><polygon points="79.0,44.9 97.6,46.2 53.0,48.1 34.8,46.7"/><polygon points="-12.3,48.6 5.3,50.1 -45.7,52.3 -62.6,50.6"/><polygon points="399.6,33.4 420.4,34.3 393.7,35.4 372.9,34.6"/><polygon points="344.8,35.8 365.5,36.7 335.8,38.0 315.1,37.0"/><polygon points="283.9,38.3 304.5,39.4 271.4,40.8 250.8,39.7"/><polygon points="215.9,41.2 236.2,42.4 199.0,44.0 178.8,42.8"/><polygon points="139.4,44.4 159.3,45.7 117.1,47.6 97.6,46.2"/><polygon points="53.0,48.1 72.0,49.6 23.8,51.7 5.3,50.1"/><polygon points="393.7,35.4 415.2,36.4 387.1,37.6 365.5,36.7"/><polygon points="335.8,38.0 357.4,39.0 326.0,40.4 304.5,39.4"/><polygon points="271.4,40.8 292.8,42.0 257.5,43.6 236.2,42.4"/><polygon points="199.0,44.0 220.1,45.3 180.2,47.1 159.3,45.7"/><polygon points="117.1,47.6 137.6,49.1 92.1,51.1 72.0,49.6"/><polygon points="23.8,51.7 43.3,53.4 -9.2,55.8 -27.9,54.0"/><polygon points="441.9,35.1 464.2,36.0 437.7,37.3 415.2,36.4"/><polygon points="387.1,37.6 409.6,38.7 379.9,40.1 357.4,39.0"/><polygon points="326.0,40.4 348.5,41.6 315.2,43.2 292.8,42.0"/><polygon points="257.5,43.6 279.8,44.8 242.2,46.6 220.1,45.3"/><polygon points="180.2,47.1 202.0,48.5 159.1,50.6 137.6,49.1"/><polygon points="92.1,51.1 113.2,52.8 63.8,55.1 43.3,53.4"/><polygon points="-9.2,55.8 10.7,57.7 -46.7,60.4 -65.6,58.3"/><polygon points="489.5,34.8 512.6,35.7 487.5,37.0 464.2,36.0"/><polygon points="437.7,37.3 461.0,38.3 433.0,39.7 409.6,38.7"/><polygon points="379.9,40.1 403.4,41.2 372.0,42.7 348.5,41.6"/><polygon points="315.2,43.2 338.6,44.4 303.2,46.2 279.8,44.8"/><polygon points="242.2,46.6 265.4,48.0 225.0,50.1 202.0,48.5"/><polygon points="159.1,50.6 181.8,52.2 135.4,54.5 113.2,52.8"/><polygon points="63.8,55.1 85.5,57.0 31.7,59.7 10.7,57.7"/><polygon points="536.5,34.5 560.3,35.4 536.7,36.7 512.6,35.7"/><polygon points="487.5,37.0 511.7,38.0 485.3,39.3 461.0,38.3"/><polygon points="433.0,39.7 457.4,40.8 427.9,42.3 403.4,41.2"/><polygon points="372.0,42.7 396.5,44.0 363.2,45.7 338.6,44.4"/><polygon points="303.2,46.2 327.6,47.5 289.7,49.5 265.4,48.0"/><polygon points="225.0,50.1 249.2,51.6 205.7,53.9 181.8,52.2"/><polygon points="135.4,54.5 158.9,56.3 108.5,59.0 85.5,57.0"/><polygon points="31.7,59.7 54.0,61.8 -5.2,64.9 -26.5,62.6"/><polygon points="582.8,34.3 607.4,35.1 585.1,36.3 560.3,35.4"/><polygon points="536.7,36.7 561.7,37.6 536.9,39.0 511.7,38.0"/><polygon points="485.3,39.3 510.7,40.4 482.9,41.9 457.4,40.8"/><polygon points="427.9,42.3 453.5,43.5 422.2,45.2 396.5,44.0"/><polygon points="363.2,45.7 388.9,47.1 353.3,49.0 327.6,47.5"/><polygon points="289.7,49.5 315.3,51.1 274.6,53.3 249.2,51.6"/><polygon points="205.7,53.9 230.8,55.7 183.7,58.3 158.9,56.3"/><polygon points="108.5,59.0 132.8,61.1 77.6,64.1 54.0,61.8"/><polygon points="628.6,34.0 653.9,34.8 633.0,36.0 607.4,35.1"/><polygon points="585.1,36.3 610.9,37.3 587.7,38.6 561.7,37.6"/><polygon points="536.9,39.0 563.1,40.0 537.1,41.5 510.7,40.4"/><polygon points="482.9,41.9 509.5,43.1 480.2,44.8 453.5,43.5"/><polygon points="422.2,45.2 449.1,46.6 415.8,48.5 388.9,47.1"/><polygon points="353.3,49.0 380.3,50.5 342.3,52.7 315.3,51.1"/><polygon points="274.6,53.3 301.4,55.1 257.5,57.6 230.8,55.7"/><polygon points="183.7,58.3 210.0,60.3 158.6,63.3 132.8,61.1"/><polygon points="77.6,64.1 102.8,66.5 41.9,70.0 17.6,67.4"/><polygon points="673.7,33.7 699.7,34.5 680.1,35.7 653.9,34.8"/><polygon points="633.0,36.0 659.5,37.0 637.8,38.3 610.9,37.3"/><polygon points="587.7,38.6 614.8,39.7 590.5,41.1 563.1,40.0"/><polygon points="537.1,41.5 564.7,42.7 537.4,44.4 509.5,43.1"/><polygon points="480.2,44.8 508.3,46.1 477.3,48.0 449.1,46.6"/><polygon points="415.8,48.5 444.1,50.0 408.7,52.1 380.3,50.5"/><polygon points="342.3,52.7 370.7,54.5 329.8,56.9 301.4,55.1"/><polygon points="257.5,57.6 285.6,59.6 237.9,62.5 210.0,60.3"/><polygon points="158.6,63.3 186.1,65.6 129.6,69.1 102.8,66.5"/><polygon points="718.3,33.4 744.9,34.2 726.7,35.4 699.7,34.5"/><polygon points="680.1,35.7 707.4,36.6 687.2,37.9 659.5,37.0"/><polygon points="637.8,38.3 665.7,39.3 643.1,40.8 614.8,39.7"/><polygon points="590.5,41.1 619.1,42.3 593.6,43.9 564.7,42.7"/><polygon points="537.4,44.4 566.5,45.7 537.7,47.5 508.3,46.1"/><polygon points="477.3,48.0 506.9,49.5 473.9,51.6 444.1,50.0"/><polygon points="408.7,52.1 438.6,53.8 400.6,56.3 370.7,54.5"/><polygon points="329.8,56.9 359.7,58.9 315.5,61.7 285.6,59.6"/><polygon points="237.9,62.5 267.5,64.8 215.3,68.1 186.1,65.6"/><polygon points="726.7,35.4 754.7,36.3 735.8,37.6 707.4,36.6"/><polygon points="687.2,37.9 715.9,38.9 694.9,40.4 665.7,39.3"/><polygon points="643.1,40.8 672.6,41.9 648.9,43.5 619.1,42.3"/><polygon points="593.6,43.9 623.8,45.2 597.0,47.0 566.5,45.7"/><polygon points="537.7,47.5 568.5,49.0 538.0,51.0 506.9,49.5"/><polygon points="473.9,51.6 505.3,53.3 470.2,55.6 438.6,53.8"/><polygon points="400.6,56.3 432.3,58.2 391.5,61.0 359.7,58.9"/><polygon points="315.5,61.7 347.2,64.0 299.0,67.3 267.5,64.8"/><polygon points="772.6,35.1 801.3,36.0 783.8,37.3 754.7,36.3"/><polygon points="735.8,37.6 765.4,38.6 745.9,40.0 715.9,38.9"/><polygon points="694.9,40.4 725.3,41.5 703.4,43.1 672.6,41.9"/><polygon points="648.9,43.5 680.2,44.8 655.4,46.5 623.8,45.2"/><polygon points="597.0,47.0 629.1,48.5 600.9,50.5 568.5,49.0"/><polygon points="538.0,51.0 570.7,52.7 538.4,55.0 505.3,53.3"/><polygon points="470.2,55.6 503.5,57.5 465.9,60.2 432.3,58.2"/><polygon points="391.5,61.0 425.1,63.2 380.9,66.4 347.2,64.0"/><polygon points="817.9,34.8 847.3,35.7 831.2,36.9 801.3,36.0"/><polygon points="783.8,37.3 814.2,38.2 796.2,39.6 765.4,38.6"/><polygon points="745.9,40.0 777.2,41.1 757.0,42.7 725.3,41.5"/><polygon points="703.4,43.1 735.6,44.3 712.9,46.1 680.2,44.8"/><polygon points="655.4,46.5 688.6,48.0 662.7,50.0 629.1,48.5"/><polygon points="600.9,50.5 635.0,52.1 605.3,54.4 570.7,52.7"/><polygon points="538.4,55.0 573.3,56.9 538.8,59.5 503.5,57.5"/><polygon points="465.9,60.2 501.5,62.4 461.0,65.5 425.1,63.2"/><polygon points="862.6,34.5 892.7,35.4 877.9,36.6 847.3,35.7"/><polygon points="831.2,36.9 862.3,37.9 845.8,39.3 814.2,38.2"/><polygon points="796.2,39.6 828.3,40.7 809.8,42.3 777.2,41.1"/><polygon points="757.0,42.7 790.2,43.9 769.4,45.6 735.6,44.3"/><polygon points="712.9,46.1 747.2,47.5 723.5,49.4 688.6,48.0"/><polygon points="662.7,50.0 698.1,51.5 670.9,53.8 635.0,52.1"/><polygon points="605.3,54.4 641.7,56.2 610.2,58.8 573.3,56.9"/><polygon points="538.8,59.5 576.2,61.7 539.3,64.7 501.5,62.4"/><polygon points="906.8,34.2 937.5,35.1 923.9,36.3 892.7,35.4"/><polygon points="877.9,36.6 909.7,37.6 894.6,38.9 862.3,37.9"/><polygon points="845.8,39.3 878.7,40.3 861.8,41.9 828.3,40.7"/><polygon points="809.8,42.3 843.9,43.5 824.9,45.2 790.2,43.9"/><polygon points="769.4,45.6 804.7,47.0 783.1,48.9 747.2,47.5"/><polygon points="723.5,49.4 760.1,51.0 735.4,53.2 698.1,51.5"/><polygon points="670.9,53.8 708.8,55.6 680.2,58.1 641.7,56.2"/><polygon points="610.2,58.8 649.3,60.9 615.9,63.9 576.2,61.7"/><polygon points="950.3,33.9 981.6,34.8 969.4,36.0 937.5,35.1"/><polygon points="923.9,36.3 956.4,37.2 942.7,38.6 909.7,37.6"/><polygon points="894.6,38.9 928.3,40.0 913.0,41.5 878.7,40.3"/><polygon points="861.8,41.9 896.8,43.0 879.6,44.7 843.9,43.5"/><polygon points="824.9,45.2 861.3,46.5 841.8,48.4 804.7,47.0"/><polygon points="783.1,48.9 820.9,50.4 798.6,52.6 760.1,51.0"/><polygon points="735.4,53.2 774.6,54.9 748.8,57.5 708.8,55.6"/><polygon points="680.2,58.1 721.0,60.2 690.8,63.1 649.3,60.9"/><polygon points="615.9,63.9 658.1,66.3 622.4,69.8 579.5,67.2"/><polygon points="993.3,33.6 1025.2,34.5 1014.2,35.7 981.6,34.8"/><polygon points="969.4,36.0 1002.5,36.9 990.2,38.2 956.4,37.2"/><polygon points="942.7,38.6 977.2,39.6 963.5,41.1 928.3,40.0"/><polygon points="913.0,41.5 948.9,42.6 933.4,44.3 896.8,43.0"/><polygon points="879.6,44.7 917.0,46.0 899.5,47.9 861.3,46.5"/><polygon points="841.8,48.4 880.7,49.9 860.7,52.0 820.9,50.4"/><polygon points="798.6,52.6 839.2,54.3 816.1,56.8 774.6,54.9"/><polygon points="748.8,57.5 791.2,59.5 764.2,62.3 721.0,60.2"/><polygon points="690.8,63.1 735.0,65.5 703.1,68.9 658.1,66.3"/><polygon points="1014.2,35.7 1048.0,36.6 1037.0,37.9 1002.5,36.9"/><polygon points="990.2,38.2 1025.4,39.2 1013.1,40.7 977.2,39.6"/><polygon points="963.5,41.1 1000.2,42.2 986.4,43.8 948.9,42.6"/><polygon points="933.4,44.3 971.7,45.6 956.1,47.4 917.0,46.0"/><polygon points="899.5,47.9 939.5,49.4 921.7,51.5 880.7,49.9"/><polygon points="860.7,52.0 902.6,53.7 882.1,56.2 839.2,54.3"/><polygon points="816.1,56.8 860.0,58.8 836.1,61.6 791.2,59.5"/><polygon points="764.2,62.3 810.2,64.6 782.0,68.0 735.0,65.5"/><polygon points="1058.4,35.4 1092.8,36.3 1083.1,37.5 1048.0,36.6"/><polygon points="1037.0,37.9 1072.9,38.9 1062.1,40.3 1025.4,39.2"/><polygon points="1013.1,40.7 1050.6,41.8 1038.5,43.4 1000.2,42.2"/><polygon points="986.4,43.8 1025.6,45.1 1011.9,46.9 971.7,45.6"/><polygon points="956.1,47.4 997.2,48.9 981.6,50.9 939.5,49.4"/><polygon points="921.7,51.5 964.8,53.1 946.8,55.5 902.6,53.7"/><polygon points="882.1,56.2 927.4,58.1 906.4,60.8 860.0,58.8"/><polygon points="836.1,61.6 883.7,63.8 859.1,67.1 810.2,64.6"/><polygon points="1102.0,35.1 1137.1,36.0 1128.6,37.2 1092.8,36.3"/><polygon points="1083.1,37.5 1119.7,38.5 1110.3,39.9 1072.9,38.9"/><polygon points="1062.1,40.3 1100.4,41.4 1089.8,43.0 1050.6,41.8"/><polygon points="1038.5,43.4 1078.6,44.7 1066.7,46.5 1025.6,45.1"/><polygon points="1011.9,46.9 1054.0,48.4 1040.4,50.4 997.2,48.9"/><polygon points="981.6,50.9 1025.9,52.6 1010.2,54.9 964.8,53.1"/><polygon points="946.8,55.5 993.4,57.4 975.3,60.1 927.4,58.1"/><polygon points="906.4,60.8 955.7,63.0 934.4,66.2 883.7,63.8"/><polygon points="1145.1,34.8 1180.7,35.6 1173.5,36.9 1137.1,36.0"/><polygon points="1128.6,37.2 1165.9,38.2 1157.8,39.6 1119.7,38.5"/><polygon points="1110.3,39.9 1149.3,41.0 1140.3,42.6 1100.4,41.4"/><polygon points="1089.8,43.0 1130.8,44.2 1120.6,46.0 1078.6,44.7"/><polygon points="1066.7,46.5 1109.8,47.9 1098.2,49.9 1054.0,48.4"/><polygon points="1040.4,50.4 1085.8,52.0 1072.5,54.3 1025.9,52.6"/><polygon points="1010.2,54.9 1058.2,56.7 1042.8,59.4 993.4,57.4"/><polygon points="975.3,60.1 1026.2,62.3 1008.1,65.4 955.7,63.0"/><polygon points="1187.5,34.5 1223.8,35.3 1217.7,36.6 1180.7,35.6"/><polygon points="1173.5,36.9 1211.4,37.9 1204.7,39.2 1165.9,38.2"/><polygon points="1157.8,39.6 1197.6,40.7 1190.1,42.2 1149.3,41.0"/><polygon points="1140.3,42.6 1182.1,43.8 1173.6,45.5 1130.8,44.2"/><polygon points="1120.6,46.0 1164.6,47.4 1155.0,49.3 1109.8,47.9"/><polygon points="1098.2,49.9 1144.7,51.4 1133.6,53.7 1085.8,52.0"/><polygon points="1072.5,54.3 1121.8,56.1 1109.0,58.7 1058.2,56.7"/><polygon points="1042.8,59.4 1095.2,61.5 1080.2,64.5 1026.2,62.3"/><polygon points="1229.5,34.2 1266.2,35.0 1261.4,36.2 1223.8,35.3"/><polygon points="1217.7,36.6 1256.2,37.5 1250.8,38.9 1211.4,37.9"/><polygon points="1204.7,39.2 1245.1,40.3 1239.0,41.8 1197.6,40.7"/><polygon points="1190.1,42.2 1232.6,43.4 1225.8,45.1 1182.1,43.8"/><polygon points="1173.6,45.5 1218.5,46.9 1210.8,48.8 1164.6,47.4"/><polygon points="1155.0,49.3 1202.5,50.9 1193.6,53.1 1144.7,51.4"/><polygon points="1133.6,53.7 1184.1,55.5 1173.8,58.0 1121.8,56.1"/><polygon points="1109.0,58.7 1162.7,60.8 1150.7,63.7 1095.2,61.5"/><polygon points="1080.2,64.5 1137.7,67.0 1123.4,70.5 1063.9,67.9"/><polygon points="1270.9,33.9 1308.2,34.7 1304.4,35.9 1266.2,35.0"/><polygon points="1261.4,36.2 1300.5,37.2 1296.3,38.5 1256.2,37.5"/><polygon points="1250.8,38.9 1291.9,39.9 1287.3,41.4 1245.1,40.3"/><polygon points="1239.0,41.8 1282.3,43.0 1277.1,44.6 1232.6,43.4"/><polygon points="1225.8,45.1 1271.5,46.4 1265.6,48.3 1218.5,46.9"/><polygon points="1210.8,48.8 1259.3,50.3 1252.5,52.5 1202.5,50.9"/><polygon points="1193.6,53.1 1245.2,54.8 1237.4,57.3 1184.1,55.5"/><polygon points="1173.8,58.0 1228.9,60.0 1219.7,63.0 1162.7,60.8"/><polygon points="1150.7,63.7 1209.8,66.1 1199.0,69.6 1137.7,67.0"/><polygon points="1311.7,33.6 1349.5,34.4 1346.9,35.6 1308.2,34.7"/><polygon points="1304.4,35.9 1344.1,36.9 1341.2,38.2 1300.5,37.2"/><polygon points="1296.3,38.5 1338.1,39.5 1334.8,41.0 1291.9,39.9"/><polygon points="1287.3,41.4 1331.3,42.6 1327.6,44.2 1282.3,43.0"/><polygon points="1277.1,44.6 1323.7,46.0 1319.5,47.8 1271.5,46.4"/><polygon points="1265.6,48.3 1315.1,49.8 1310.3,51.9 1259.3,50.3"/><polygon points="1252.5,52.5 1305.2,54.2 1299.7,56.7 1245.2,54.8"/><polygon points="1237.4,57.3 1293.7,59.3 1287.3,62.2 1228.9,60.0"/><polygon points="1219.7,63.0 1280.3,65.3 1272.8,68.7 1209.8,66.1"/><polygon points="1346.9,35.6 1387.1,36.5 1385.4,37.8 1344.1,36.9"/><polygon points="1341.2,38.2 1383.5,39.2 1381.6,40.6 1338.1,39.5"/><polygon points="1334.8,41.0 1379.5,42.2 1377.3,43.8 1331.3,42.6"/><polygon points="1327.6,44.2 1375.0,45.5 1372.5,47.3 1323.7,46.0"/><polygon points="1319.5,47.8 1369.9,49.3 1367.1,51.4 1315.1,49.8"/><polygon points="1310.3,51.9 1364.0,53.6 1360.8,56.0 1305.2,54.2"/><polygon points="1299.7,56.7 1357.3,58.6 1353.5,61.4 1293.7,59.3"/><polygon points="1287.3,62.2 1349.3,64.5 1344.9,67.8 1280.3,65.3"/><polygon points="1388.8,35.3 1429.6,36.2 1429.0,37.5 1387.1,36.5"/><polygon points="1385.4,37.8 1428.4,38.8 1427.7,40.3 1383.5,39.2"/><polygon points="1381.6,40.6 1427.0,41.8 1426.3,43.4 1379.5,42.2"/><polygon points="1377.3,43.8 1425.5,45.0 1424.7,46.8 1375.0,45.5"/><polygon points="1372.5,47.3 1423.8,48.8 1422.8,50.8 1369.9,49.3"/><polygon points="1367.1,51.4 1421.8,53.0 1420.7,55.4 1364.0,53.6"/><polygon points="1360.8,56.0 1419.5,57.9 1418.2,60.7 1357.3,58.6"/><polygon points="1353.5,61.4 1416.9,63.7 1415.4,66.9 1349.3,64.5"/><polygon points="1430.1,35.0 1471.5,35.9 1472.0,37.2 1429.6,36.2"/><polygon points="1429.0,37.5 1472.5,38.5 1473.1,39.9 1428.4,38.8"/><polygon points="1427.7,40.3 1473.8,41.4 1474.4,42.9 1427.0,41.8"/><polygon points="1426.3,43.4 1475.2,44.6 1475.9,46.4 1425.5,45.0"/><polygon points="1424.7,46.8 1476.7,48.3 1477.6,50.3 1423.8,48.8"/><polygon points="1422.8,50.8 1478.5,52.4 1479.5,54.8 1421.8,53.0"/><polygon points="1420.7,55.4 1480.6,57.3 1481.7,60.0 1419.5,57.9"/><polygon points="1418.2,60.7 1482.9,62.9 1484.3,66.0 1416.9,63.7"/></g><g fill="#c3bcb9" fill-opacity="0.5"><polygon points="-5.2,64.9 17.6,67.4 -47.9,70.9 -69.5,68.2"/><polygon points="41.9,70.0 67.9,72.8 0.1,76.9 -24.7,73.8"/><polygon points="129.6,69.1 158.3,71.8 95.7,75.8 67.9,72.8"/><polygon points="0.1,76.9 26.8,80.2 -49.5,85.1 -74.6,81.4"/><polygon points="215.3,68.1 246.5,70.8 188.9,74.7 158.3,71.8"/><polygon points="95.7,75.8 125.6,79.0 55.6,83.8 26.8,80.2"/><polygon points="299.0,67.3 332.7,69.9 279.9,73.7 246.5,70.8"/><polygon points="188.9,74.7 221.9,77.9 157.8,82.5 125.6,79.0"/><polygon points="55.6,83.8 86.7,87.7 7.4,93.4 -22.2,89.1"/><polygon points="380.9,66.4 416.9,69.0 368.6,72.7 332.7,69.9"/><polygon points="279.9,73.7 315.7,76.8 257.3,81.3 221.9,77.9"/><polygon points="157.8,82.5 192.6,86.3 120.5,91.9 86.7,87.7"/><polygon points="461.0,65.5 499.1,68.0 455.3,71.7 416.9,69.0"/><polygon points="368.6,72.7 407.2,75.7 354.2,80.1 315.7,76.8"/><polygon points="257.3,81.3 295.6,84.9 230.3,90.4 192.6,86.3"/><polygon points="539.3,64.7 579.5,67.2 539.8,70.7 499.1,68.0"/><polygon points="455.3,71.7 496.4,74.6 448.5,78.9 407.2,75.7"/><polygon points="354.2,80.1 395.7,83.6 337.0,88.9 295.6,84.9"/><polygon points="539.8,70.7 583.4,73.6 540.5,77.8 496.4,74.6"/><polygon points="448.5,78.9 493.1,82.4 440.6,87.5 395.7,83.6"/><polygon points="622.4,69.8 668.3,72.6 630.1,76.7 583.4,73.6"/><polygon points="540.5,77.8 588.0,81.1 541.3,86.1 493.1,82.4"/><polygon points="703.1,68.9 751.2,71.6 717.5,75.6 668.3,72.6"/><polygon points="630.1,76.7 680.3,79.9 639.2,84.8 588.0,81.1"/><polygon points="782.0,68.0 832.1,70.6 802.7,74.5 751.2,71.6"/><polygon points="717.5,75.6 770.2,78.8 734.4,83.5 680.3,79.9"/><polygon points="639.2,84.8 694.6,88.7 650.1,94.6 593.4,90.2"/><polygon points="859.1,67.1 911.2,69.7 885.8,73.5 832.1,70.6"/><polygon points="802.7,74.5 857.9,77.6 827.1,82.2 770.2,78.8"/><polygon points="734.4,83.5 792.9,87.3 754.8,93.0 694.6,88.7"/><polygon points="934.4,66.2 988.4,68.8 966.9,72.5 911.2,69.7"/><polygon points="885.8,73.5 943.3,76.5 917.3,81.0 857.9,77.6"/><polygon points="827.1,82.2 888.5,86.0 856.4,91.5 792.9,87.3"/><polygon points="1008.1,65.4 1063.9,67.9 1046.1,71.5 988.4,68.8"/><polygon points="966.9,72.5 1026.6,75.4 1005.1,79.8 943.3,76.5"/><polygon points="917.3,81.0 981.4,84.6 955.0,90.0 888.5,86.0"/><polygon points="1046.1,71.5 1107.9,74.4 1090.7,78.7 1026.6,75.4"/><polygon points="1005.1,79.8 1071.8,83.4 1050.7,88.6 981.4,84.6"/><polygon points="1123.4,70.5 1187.1,73.4 1174.1,77.5 1107.9,74.4"/><polygon points="1090.7,78.7 1159.7,82.1 1143.8,87.2 1071.8,83.4"/><polygon points="1199.0,69.6 1264.5,72.4 1255.4,76.4 1187.1,73.4"/><polygon points="1174.1,77.5 1245.4,80.9 1234.3,85.8 1159.7,82.1"/><polygon points="1272.8,68.7 1340.0,71.4 1334.6,75.3 1264.5,72.4"/><polygon points="1255.4,76.4 1328.7,79.7 1322.2,84.5 1245.4,80.9"/><polygon points="1344.9,67.8 1413.7,70.4 1411.9,74.3 1340.0,71.4"/><polygon points="1334.6,75.3 1410.0,78.5 1407.8,83.2 1328.7,79.7"/><polygon points="1322.2,84.5 1405.4,88.4 1402.7,94.2 1315.0,89.9"/><polygon points="1415.4,66.9 1485.8,69.5 1487.4,73.3 1413.7,70.4"/><polygon points="1411.9,74.3 1489.1,77.4 1491.1,82.0 1410.0,78.5"/><polygon points="1407.8,83.2 1493.2,87.0 1495.6,92.7 1405.4,88.4"/></g><g fill="#c3bcb9" fill-opacity="0.6"><polygon points="7.4,93.4 39.6,98.1 -51.7,105.2 -81.8,99.8"/><polygon points="120.5,91.9 157.2,96.4 74.9,103.3 39.6,98.1"/><polygon points="230.3,90.4 271.3,94.8 197.4,101.4 157.2,96.4"/><polygon points="337.0,88.9 381.9,93.2 316.0,99.6 271.3,94.8"/><polygon points="197.4,101.4 241.5,106.9 156.5,115.2 113.7,108.9"/><polygon points="440.6,87.5 489.2,91.7 430.9,97.9 381.9,93.2"/><polygon points="316.0,99.6 365.0,104.9 290.1,112.9 241.5,106.9"/><polygon points="541.3,86.1 593.4,90.2 542.2,96.2 489.2,91.7"/><polygon points="430.9,97.9 484.5,103.0 418.9,110.8 365.0,104.9"/><polygon points="542.2,96.2 600.1,101.2 543.4,108.7 484.5,103.0"/><polygon points="650.1,94.6 712.0,99.4 663.6,106.7 600.1,101.2"/><polygon points="754.8,93.0 820.4,97.7 779.7,104.7 712.0,99.4"/><polygon points="856.4,91.5 925.4,96.0 892.1,102.8 820.4,97.7"/><polygon points="955.0,90.0 1027.2,94.4 1000.8,101.0 925.4,96.0"/><polygon points="1050.7,88.6 1126.0,92.9 1106.1,99.2 1027.2,94.4"/><polygon points="1000.8,101.0 1083.5,106.4 1057.8,114.6 970.9,108.4"/><polygon points="1143.8,87.2 1221.9,91.3 1208.0,97.5 1126.0,92.9"/><polygon points="1106.1,99.2 1192.4,104.5 1174.6,112.4 1083.5,106.4"/><polygon points="1234.3,85.8 1315.0,89.9 1306.9,95.8 1221.9,91.3"/><polygon points="1208.0,97.5 1297.7,102.6 1287.4,110.3 1192.4,104.5"/><polygon points="1306.9,95.8 1399.7,100.8 1396.2,108.2 1297.7,102.6"/><polygon points="1402.7,94.2 1498.3,99.0 1501.4,106.2 1399.7,100.8"/></g><g fill="#c3bcb9" fill-opacity="0.7"><polygon points="74.9,103.3 113.7,108.9 17.9,117.5 -18.7,111.0"/><polygon points="156.5,115.2 204.0,122.1 104.1,132.8 58.6,124.7"/><polygon points="290.1,112.9 343.9,119.6 257.0,129.9 204.0,122.1"/><polygon points="418.9,110.8 478.6,117.2 403.8,127.1 343.9,119.6"/><polygon points="543.4,108.7 608.4,114.9 544.8,124.4 478.6,117.2"/><polygon points="663.6,106.7 733.5,112.7 680.5,121.8 608.4,114.9"/><polygon points="779.7,104.7 854.3,110.5 811.0,119.3 733.5,112.7"/><polygon points="892.1,102.8 970.9,108.4 936.7,116.9 854.3,110.5"/><polygon points="1057.8,114.6 1154.2,121.5 1130.6,132.0 1028.2,124.1"/><polygon points="1174.6,112.4 1275.5,119.0 1261.8,129.2 1154.2,121.5"/><polygon points="1287.4,110.3 1392.3,116.6 1387.8,126.4 1275.5,119.0"/><polygon points="1396.2,108.2 1504.9,114.4 1508.9,123.7 1392.3,116.6"/></g><g fill="#c3bcb9" fill-opacity="0.8"><polygon points="17.9,117.5 58.6,124.7 -55.2,135.8 -92.5,127.4"/><polygon points="403.8,127.1 471.0,135.4 384.0,148.4 316.6,138.6"/><polygon points="544.8,124.4 618.9,132.4 546.7,144.8 471.0,135.4"/><polygon points="680.5,121.8 760.9,129.5 702.3,141.4 618.9,132.4"/><polygon points="811.0,119.3 897.2,126.7 851.2,138.2 760.9,129.5"/><polygon points="936.7,116.9 1028.2,124.1 993.9,135.0 897.2,126.7"/><polygon points="1387.8,126.4 1513.5,134.7 1519.0,147.5 1382.5,137.8"/></g><g fill="#c3bcb9" fill-opacity="0.9"><polygon points="104.1,132.8 155.4,141.9 34.9,156.1 -13.1,145.3"/><polygon points="257.0,129.9 316.6,138.6 213.5,152.1 155.4,141.9"/><polygon points="851.2,138.2 953.4,148.0 905.1,163.4 796.9,151.7"/><polygon points="993.9,135.0 1102.9,144.4 1069.9,159.1 953.4,148.0"/><polygon points="1130.6,132.0 1245.8,141.0 1226.8,155.0 1102.9,144.4"/><polygon points="1261.8,129.2 1382.5,137.8 1376.3,151.2 1245.8,141.0"/></g><g fill="#c3bcb9"><polygon points="34.9,156.1 89.9,168.4 -61.2,188.4 -110.4,173.2"/><polygon points="213.5,152.1 280.0,163.9 153.7,182.8 89.9,168.4"/><polygon points="-61.2,188.4 -3.2,206.2 -203.2,236.1 -250.0,213.2"/><polygon points="384.0,148.4 460.8,159.6 356.9,177.5 280.0,163.9"/><polygon points="153.7,182.8 228.6,199.6 66.3,227.6 -3.2,206.2"/><polygon points="546.7,144.8 632.9,155.6 549.3,172.6 460.8,159.6"/><polygon points="356.9,177.5 446.7,193.4 317.7,219.7 228.6,199.6"/><polygon points="66.3,227.6 150.8,253.7 -73.8,299.4 -145.8,264.1"/><polygon points="702.3,141.4 796.9,151.7 731.8,167.8 632.9,155.6"/><polygon points="549.3,172.6 652.3,187.6 553.0,212.3 446.7,193.4"/><polygon points="317.7,219.7 425.6,243.9 256.1,286.1 150.8,253.7"/><polygon points="-73.8,299.4 19.4,344.9 -334.1,432.7 -392.1,364.1"/><polygon points="731.8,167.8 846.4,182.1 773.6,205.3 652.3,187.6"/><polygon points="553.0,212.3 680.9,234.9 558.8,273.9 425.6,243.9"/><polygon points="256.1,286.1 390.7,327.5 144.6,406.1 19.4,344.9"/><polygon points="905.1,163.4 1030.0,176.9 980.8,198.8 846.4,182.1"/><polygon points="773.6,205.3 918.6,226.5 837.5,262.7 680.9,234.9"/><polygon points="558.8,273.9 727.3,311.8 568.9,382.4 390.7,327.5"/><polygon points="1069.9,159.1 1203.9,171.9 1175.9,192.7 1030.0,176.9"/><polygon points="980.8,198.8 1140.7,218.7 1095.1,252.3 918.6,226.5"/><polygon points="837.5,262.7 1034.0,297.5 947.6,361.3 727.3,311.8"/><polygon points="568.9,382.4 816.0,458.6 591.4,624.5 321.7,492.6"/><polygon points="1226.8,155.0 1368.8,167.3 1359.8,186.9 1203.9,171.9"/><polygon points="1175.9,192.7 1348.4,211.3 1333.9,242.7 1140.7,218.7"/><polygon points="1095.1,252.3 1314.6,284.4 1287.7,342.4 1034.0,297.5"/><polygon points="947.6,361.3 1247.6,428.8 1181.6,571.2 816.0,458.6"/><polygon points="1376.3,151.2 1525.5,162.8 1533.4,181.4 1368.8,167.3"/><polygon points="1359.8,186.9 1543.3,204.4 1555.7,233.8 1348.4,211.3"/><polygon points="1333.9,242.7 1572.2,272.3 1594.7,325.3 1314.6,284.4"/><polygon points="1287.7,342.4 1627.7,402.6 1680.3,526.1 1247.6,428.8"/></g><g fill="#b2aaa7" fill-opacity="0.3"><polygon points="-4.3,15.8 3.7,16.1 -18.7,16.6 -26.5,16.2"/><polygon points="25.3,15.7 33.6,16.0 11.8,16.5 3.7,16.1"/><polygon points="54.7,15.6 63.3,15.9 42.0,16.4 33.6,16.0"/><polygon points="11.8,16.5 20.1,16.8 -2.5,17.2 -10.7,16.9"/><polygon points="83.9,15.5 92.7,15.8 72.0,16.2 63.3,15.9"/><polygon points="42.0,16.4 50.6,16.7 28.6,17.1 20.1,16.8"/><polygon points="-2.5,17.2 5.8,17.6 -17.7,18.0 -25.9,17.7"/><polygon points="112.8,15.4 121.9,15.7 101.7,16.1 92.7,15.8"/><polygon points="72.0,16.2 80.9,16.6 59.4,17.0 50.6,16.7"/><polygon points="28.6,17.1 37.3,17.4 14.4,17.9 5.8,17.6"/><polygon points="101.7,16.1 111.0,16.5 90.1,16.9 80.9,16.6"/><polygon points="59.4,17.0 68.5,17.3 46.2,17.8 37.3,17.4"/><polygon points="14.4,17.9 23.2,18.3 -0.6,18.7 -9.2,18.4"/><polygon points="131.3,16.0 140.8,16.3 120.4,16.8 111.0,16.5"/><polygon points="90.1,16.9 99.4,17.2 77.7,17.7 68.5,17.3"/><polygon points="46.2,17.8 55.3,18.1 32.2,18.6 23.2,18.3"/><polygon points="-0.6,18.7 8.2,19.1 -16.5,19.6 -25.2,19.2"/><polygon points="160.5,15.9 170.4,16.2 150.5,16.7 140.8,16.3"/><polygon points="120.4,16.8 130.1,17.1 109.0,17.6 99.4,17.2"/><polygon points="77.7,17.7 87.2,18.0 64.7,18.5 55.3,18.1"/><polygon points="32.2,18.6 41.4,19.0 17.3,19.5 8.2,19.1"/><polygon points="189.6,15.8 199.7,16.1 180.4,16.6 170.4,16.2"/><polygon points="150.5,16.7 160.5,17.0 140.0,17.4 130.1,17.1"/><polygon points="109.0,17.6 118.8,17.9 96.9,18.4 87.2,18.0"/><polygon points="64.7,18.5 74.2,18.9 50.8,19.4 41.4,19.0"/><polygon points="17.3,19.5 26.6,19.9 1.6,20.4 -7.6,20.0"/><polygon points="218.4,15.7 228.8,16.0 210.0,16.5 199.7,16.1"/><polygon points="180.4,16.6 190.7,16.9 170.7,17.3 160.5,17.0"/><polygon points="140.0,17.4 150.1,17.8 128.8,18.2 118.8,17.9"/><polygon points="96.9,18.4 106.8,18.7 84.0,19.2 74.2,18.9"/><polygon points="50.8,19.4 60.5,19.8 36.2,20.3 26.6,19.9"/><polygon points="1.6,20.4 10.9,20.9 -15.2,21.4 -24.4,21.0"/><polygon points="247.0,15.6 257.7,15.9 239.5,16.3 228.8,16.0"/><polygon points="210.0,16.5 220.6,16.8 201.2,17.2 190.7,16.9"/><polygon points="170.7,17.3 181.2,17.7 160.5,18.1 150.1,17.8"/><polygon points="128.8,18.2 139.1,18.6 117.0,19.1 106.8,18.7"/><polygon points="84.0,19.2 94.1,19.6 70.4,20.2 60.5,19.8"/><polygon points="36.2,20.3 45.9,20.7 20.6,21.3 10.9,20.9"/><polygon points="275.4,15.5 286.4,15.8 268.6,16.2 257.7,15.9"/><polygon points="239.5,16.3 250.3,16.7 231.4,17.1 220.6,16.8"/><polygon points="201.2,17.2 212.0,17.5 191.9,18.0 181.2,17.7"/><polygon points="160.5,18.1 171.1,18.5 149.6,19.0 139.1,18.6"/><polygon points="117.0,19.1 127.4,19.5 104.4,20.0 94.1,19.6"/><polygon points="70.4,20.2 80.6,20.6 56.0,21.1 45.9,20.7"/><polygon points="20.6,21.3 30.5,21.7 4.0,22.3 -5.8,21.9"/><polygon points="303.6,15.4 314.8,15.7 297.6,16.1 286.4,15.8"/><polygon points="268.6,16.2 279.8,16.6 261.4,17.0 250.3,16.7"/><polygon points="231.4,17.1 242.5,17.4 223.0,17.9 212.0,17.5"/><polygon points="191.9,18.0 202.8,18.4 182.0,18.9 171.1,18.5"/><polygon points="149.6,19.0 160.4,19.4 138.1,19.9 127.4,19.5"/><polygon points="104.4,20.0 115.0,20.4 91.1,21.0 80.6,20.6"/><polygon points="56.0,21.1 66.3,21.6 40.6,22.2 30.5,21.7"/><polygon points="4.0,22.3 13.9,22.8 -13.8,23.5 -23.5,23.0"/><polygon points="297.6,16.1 309.0,16.5 291.2,16.9 279.8,16.6"/><polygon points="261.4,17.0 272.8,17.3 253.9,17.8 242.5,17.4"/><polygon points="223.0,17.9 234.3,18.2 214.0,18.7 202.8,18.4"/><polygon points="182.0,18.9 193.1,19.2 171.5,19.8 160.4,19.4"/><polygon points="138.1,19.9 149.1,20.3 125.9,20.9 115.0,20.4"/><polygon points="91.1,21.0 101.9,21.4 76.9,22.0 66.3,21.6"/><polygon points="40.6,22.2 51.1,22.6 24.2,23.3 13.9,22.8"/><polygon points="-13.8,23.5 -3.7,24.0 -32.7,24.7 -42.6,24.1"/><polygon points="326.3,16.0 338.0,16.3 320.7,16.8 309.0,16.5"/><polygon points="291.2,16.9 302.9,17.2 284.5,17.7 272.8,17.3"/><polygon points="253.9,17.8 265.5,18.1 245.8,18.6 234.3,18.2"/><polygon points="214.0,18.7 225.5,19.1 204.6,19.6 193.1,19.2"/><polygon points="171.5,19.8 182.8,20.2 160.4,20.7 149.1,20.3"/><polygon points="125.9,20.9 137.0,21.3 112.9,21.9 101.9,21.4"/><polygon points="76.9,22.0 87.8,22.5 61.8,23.1 51.1,22.6"/><polygon points="24.2,23.3 34.8,23.8 6.7,24.5 -3.7,24.0"/><polygon points="354.8,15.9 366.8,16.2 350.0,16.7 338.0,16.3"/><polygon points="320.7,16.8 332.7,17.1 314.8,17.5 302.9,17.2"/><polygon points="284.5,17.7 296.4,18.0 277.4,18.5 265.5,18.1"/><polygon points="245.8,18.6 257.7,19.0 237.3,19.5 225.5,19.1"/><polygon points="204.6,19.6 216.3,20.0 194.5,20.6 182.8,20.2"/><polygon points="160.4,20.7 171.9,21.1 148.5,21.7 137.0,21.3"/><polygon points="112.9,21.9 124.2,22.3 99.0,23.0 87.8,22.5"/><polygon points="61.8,23.1 72.9,23.6 45.7,24.3 34.8,23.8"/><polygon points="6.7,24.5 17.3,25.0 -12.1,25.8 -22.6,25.2"/><polygon points="383.0,15.8 395.3,16.1 379.0,16.6 366.8,16.2"/><polygon points="350.0,16.7 362.3,17.0 345.0,17.4 332.7,17.1"/><polygon points="314.8,17.5 327.1,17.9 308.6,18.4 296.4,18.0"/><polygon points="277.4,18.5 289.6,18.9 269.8,19.4 257.7,19.0"/><polygon points="237.3,19.5 249.4,19.9 228.3,20.4 216.3,20.0"/><polygon points="194.5,20.6 206.5,21.0 183.8,21.6 171.9,21.1"/><polygon points="148.5,21.7 160.3,22.2 135.9,22.8 124.2,22.3"/><polygon points="99.0,23.0 110.6,23.5 84.2,24.1 72.9,23.6"/><polygon points="45.7,24.3 56.8,24.8 28.3,25.6 17.3,25.0"/><polygon points="-12.1,25.8 -1.3,26.3 -32.3,27.1 -42.8,26.5"/><polygon points="411.1,15.7 423.6,16.0 407.9,16.4 395.3,16.1"/><polygon points="379.0,16.6 391.6,16.9 374.8,17.3 362.3,17.0"/><polygon points="345.0,17.4 357.5,17.8 339.6,18.2 327.1,17.9"/><polygon points="308.6,18.4 321.2,18.7 302.1,19.2 289.6,18.9"/><polygon points="269.8,19.4 282.3,19.7 261.9,20.3 249.4,19.9"/><polygon points="228.3,20.4 240.7,20.8 218.8,21.4 206.5,21.0"/><polygon points="183.8,21.6 196.0,22.0 172.4,22.6 160.3,22.2"/><polygon points="135.9,22.8 147.9,23.3 122.4,24.0 110.6,23.5"/><polygon points="84.2,24.1 95.9,24.7 68.4,25.4 56.8,24.8"/><polygon points="28.3,25.6 39.7,26.1 9.8,26.9 -1.3,26.3"/><polygon points="438.9,15.6 451.7,15.9 436.4,16.3 423.6,16.0"/><polygon points="407.9,16.4 420.7,16.8 404.4,17.2 391.6,16.9"/><polygon points="374.8,17.3 387.7,17.7 370.4,18.1 357.5,17.8"/><polygon points="339.6,18.2 352.5,18.6 334.0,19.1 321.2,18.7"/><polygon points="302.1,19.2 314.9,19.6 295.1,20.1 282.3,19.7"/><polygon points="261.9,20.3 274.6,20.7 253.4,21.3 240.7,20.8"/><polygon points="218.8,21.4 231.4,21.9 208.5,22.5 196.0,22.0"/><polygon points="172.4,22.6 184.8,23.1 160.2,23.8 147.9,23.3"/><polygon points="122.4,24.0 134.6,24.5 108.0,25.2 95.9,24.7"/><polygon points="68.4,25.4 80.3,25.9 51.4,26.7 39.7,26.1"/><polygon points="9.8,26.9 21.2,27.5 -10.2,28.4 -21.5,27.7"/><polygon points="466.5,15.5 479.6,15.8 464.8,16.2 451.7,15.9"/><polygon points="436.4,16.3 449.5,16.7 433.8,17.1 420.7,16.8"/><polygon points="404.4,17.2 417.6,17.5 400.8,18.0 387.7,17.7"/><polygon points="370.4,18.1 383.5,18.5 365.6,19.0 352.5,18.6"/><polygon points="334.0,19.1 347.1,19.5 328.0,20.0 314.9,19.6"/><polygon points="295.1,20.1 308.2,20.6 287.7,21.1 274.6,20.7"/><polygon points="253.4,21.3 266.4,21.7 244.3,22.3 231.4,21.9"/><polygon points="208.5,22.5 221.4,23.0 197.6,23.6 184.8,23.1"/><polygon points="160.2,23.8 172.9,24.3 147.2,25.0 134.6,24.5"/><polygon points="108.0,25.2 120.4,25.7 92.5,26.5 80.3,25.9"/><polygon points="51.4,26.7 63.4,27.3 33.1,28.2 21.2,27.5"/><polygon points="-10.2,28.4 1.3,29.0 -31.8,29.9 -43.1,29.3"/><polygon points="493.9,15.4 507.2,15.7 492.9,16.1 479.6,15.8"/><polygon points="464.8,16.2 478.2,16.6 463.0,17.0 449.5,16.7"/><polygon points="433.8,17.1 447.3,17.4 431.1,17.9 417.6,17.5"/><polygon points="400.8,18.0 414.3,18.4 397.0,18.8 383.5,18.5"/><polygon points="365.6,19.0 379.1,19.4 360.6,19.9 347.1,19.5"/><polygon points="328.0,20.0 341.5,20.4 321.7,21.0 308.2,20.6"/><polygon points="287.7,21.1 301.1,21.6 279.8,22.2 266.4,21.7"/><polygon points="244.3,22.3 257.7,22.8 234.7,23.4 221.4,23.0"/><polygon points="197.6,23.6 210.8,24.1 186.0,24.8 172.9,24.3"/><polygon points="147.2,25.0 160.2,25.6 133.2,26.3 120.4,25.7"/><polygon points="92.5,26.5 105.2,27.1 75.9,27.9 63.4,27.3"/><polygon points="33.1,28.2 45.3,28.8 13.3,29.7 1.3,29.0"/><polygon points="492.9,16.1 506.6,16.4 491.9,16.9 478.2,16.6"/><polygon points="463.0,17.0 476.7,17.3 461.0,17.8 447.3,17.4"/><polygon points="431.1,17.9 444.8,18.2 428.1,18.7 414.3,18.4"/><polygon points="397.0,18.8 410.9,19.2 393.0,19.7 379.1,19.4"/><polygon points="360.6,19.9 374.5,20.3 355.3,20.8 341.5,20.4"/><polygon points="321.7,21.0 335.5,21.4 314.9,22.0 301.1,21.6"/><polygon points="279.8,22.2 293.6,22.6 271.4,23.3 257.7,22.8"/><polygon points="234.7,23.4 248.3,23.9 224.4,24.6 210.8,24.1"/><polygon points="186.0,24.8 199.5,25.4 173.5,26.1 160.2,25.6"/><polygon points="133.2,26.3 146.4,26.9 118.2,27.7 105.2,27.1"/><polygon points="75.9,27.9 88.7,28.6 57.9,29.5 45.3,28.8"/><polygon points="13.3,29.7 25.7,30.4 -8.1,31.4 -20.2,30.7"/><polygon points="520.8,16.0 534.8,16.3 520.5,16.8 506.6,16.4"/><polygon points="491.9,16.9 505.9,17.2 490.7,17.7 476.7,17.3"/><polygon points="461.0,17.8 475.1,18.1 459.0,18.6 444.8,18.2"/><polygon points="428.1,18.7 442.3,19.1 425.0,19.6 410.9,19.2"/><polygon points="393.0,19.7 407.2,20.1 388.7,20.7 374.5,20.3"/><polygon points="355.3,20.8 369.5,21.3 349.7,21.9 335.5,21.4"/><polygon points="314.9,22.0 329.1,22.5 307.7,23.1 293.6,22.6"/><polygon points="271.4,23.3 285.5,23.8 262.4,24.5 248.3,23.9"/><polygon points="224.4,24.6 238.4,25.2 213.3,25.9 199.5,25.4"/><polygon points="173.5,26.1 187.3,26.7 160.1,27.5 146.4,26.9"/><polygon points="118.2,27.7 131.7,28.4 102.0,29.2 88.7,28.6"/><polygon points="57.9,29.5 71.0,30.2 38.5,31.1 25.7,30.4"/><polygon points="-8.1,31.4 4.4,32.2 -31.3,33.2 -43.5,32.4"/><polygon points="548.5,15.9 562.7,16.2 549.0,16.7 534.8,16.3"/><polygon points="520.5,16.8 534.8,17.1 520.2,17.5 505.9,17.2"/><polygon points="490.7,17.7 505.1,18.0 489.6,18.5 475.1,18.1"/><polygon points="459.0,18.6 473.5,19.0 456.8,19.5 442.3,19.1"/><polygon points="425.0,19.6 439.6,20.0 421.8,20.6 407.2,20.1"/><polygon points="388.7,20.7 403.3,21.1 384.1,21.7 369.5,21.3"/><polygon points="349.7,21.9 364.3,22.3 343.7,22.9 329.1,22.5"/><polygon points="307.7,23.1 322.3,23.6 300.0,24.3 285.5,23.8"/><polygon points="262.4,24.5 276.9,25.0 252.8,25.7 238.4,25.2"/><polygon points="213.3,25.9 227.7,26.5 201.5,27.3 187.3,26.7"/><polygon points="160.1,27.5 174.1,28.1 145.6,29.0 131.7,28.4"/><polygon points="102.0,29.2 115.7,29.9 84.5,30.9 71.0,30.2"/><polygon points="38.5,31.1 51.8,31.9 17.4,32.9 4.4,32.2"/><polygon points="576.0,15.8 590.4,16.1 577.2,16.5 562.7,16.2"/><polygon points="549.0,16.7 563.5,17.0 549.4,17.4 534.8,17.1"/><polygon points="520.2,17.5 534.9,17.9 519.9,18.4 505.1,18.0"/><polygon points="489.6,18.5 504.4,18.8 488.3,19.3 473.5,19.0"/><polygon points="456.8,19.5 471.7,19.9 454.5,20.4 439.6,20.0"/><polygon points="421.8,20.6 436.7,21.0 418.3,21.6 403.3,21.1"/><polygon points="384.1,21.7 399.1,22.2 379.3,22.8 364.3,22.3"/><polygon points="343.7,22.9 358.7,23.4 337.2,24.1 322.3,23.6"/><polygon points="300.0,24.3 314.9,24.8 291.8,25.5 276.9,25.0"/><polygon points="252.8,25.7 267.6,26.3 242.4,27.1 227.7,26.5"/><polygon points="201.5,27.3 216.1,27.9 188.7,28.8 174.1,28.1"/><polygon points="145.6,29.0 160.0,29.7 130.0,30.6 115.7,29.9"/><polygon points="84.5,30.9 98.5,31.6 65.5,32.7 51.8,31.9"/><polygon points="17.4,32.9 30.8,33.8 -5.6,34.9 -18.7,34.1"/><polygon points="603.3,15.7 618.0,16.0 605.2,16.4 590.4,16.1"/><polygon points="577.2,16.5 592.0,16.9 578.4,17.3 563.5,17.0"/><polygon points="549.4,17.4 564.4,17.8 549.9,18.2 534.9,17.9"/><polygon points="519.9,18.4 535.0,18.7 519.5,19.2 504.4,18.8"/><polygon points="488.3,19.3 503.5,19.7 487.0,20.3 471.7,19.9"/><polygon points="454.5,20.4 469.8,20.8 452.1,21.4 436.7,21.0"/><polygon points="418.3,21.6 433.6,22.0 414.5,22.6 399.1,22.2"/><polygon points="379.3,22.8 394.7,23.3 374.1,23.9 358.7,23.4"/><polygon points="337.2,24.1 352.6,24.6 330.3,25.4 314.9,24.8"/><polygon points="291.8,25.5 307.1,26.1 282.9,26.9 267.6,26.3"/><polygon points="242.4,27.1 257.6,27.7 231.3,28.6 216.1,27.9"/><polygon points="188.7,28.8 203.7,29.5 174.9,30.4 160.0,29.7"/><polygon points="130.0,30.6 144.7,31.4 113.0,32.4 98.5,31.6"/><polygon points="65.5,32.7 79.7,33.5 44.8,34.6 30.8,33.8"/><polygon points="630.4,15.6 645.3,15.9 633.0,16.3 618.0,16.0"/><polygon points="605.2,16.4 620.3,16.8 607.2,17.2 592.0,16.9"/><polygon points="578.4,17.3 593.7,17.6 579.7,18.1 564.4,17.8"/><polygon points="549.9,18.2 565.3,18.6 550.5,19.1 535.0,18.7"/><polygon points="519.5,19.2 535.1,19.6 519.1,20.1 503.5,19.7"/><polygon points="487.0,20.3 502.6,20.7 485.5,21.3 469.8,20.8"/><polygon points="452.1,21.4 467.8,21.9 449.5,22.5 433.6,22.0"/><polygon points="414.5,22.6 430.4,23.1 410.6,23.8 394.7,23.3"/><polygon points="374.1,23.9 390.0,24.5 368.5,25.2 352.6,24.6"/><polygon points="330.3,25.4 346.2,25.9 322.9,26.7 307.1,26.1"/><polygon points="282.9,26.9 298.7,27.5 273.4,28.3 257.6,27.7"/><polygon points="231.3,28.6 246.9,29.2 219.2,30.2 203.7,29.5"/><polygon points="174.9,30.4 190.3,31.1 159.9,32.1 144.7,31.4"/><polygon points="113.0,32.4 128.0,33.2 94.5,34.3 79.7,33.5"/><polygon points="657.2,15.5 672.4,15.8 660.5,16.2 645.3,15.9"/><polygon points="633.0,16.3 648.3,16.7 635.7,17.1 620.3,16.8"/><polygon points="607.2,17.2 622.7,17.5 609.3,18.0 593.7,17.6"/><polygon points="579.7,18.1 595.5,18.5 581.1,19.0 565.3,18.6"/><polygon points="550.5,19.1 566.3,19.5 551.0,20.0 535.1,19.6"/><polygon points="519.1,20.1 535.2,20.5 518.7,21.1 502.6,20.7"/><polygon points="485.5,21.3 501.7,21.7 484.0,22.3 467.8,21.9"/><polygon points="449.5,22.5 465.7,22.9 446.7,23.6 430.4,23.1"/><polygon points="410.6,23.8 426.9,24.3 406.3,25.0 390.0,24.5"/><polygon points="368.5,25.2 384.9,25.7 362.6,26.5 346.2,25.9"/><polygon points="322.9,26.7 339.3,27.3 315.0,28.1 298.7,27.5"/><polygon points="273.4,28.3 289.6,29.0 263.1,29.9 246.9,29.2"/><polygon points="219.2,30.2 235.3,30.9 206.2,31.9 190.3,31.1"/><polygon points="159.9,32.1 175.7,32.9 143.6,34.0 128.0,33.2"/><polygon points="660.5,16.2 676.1,16.5 664.0,17.0 648.3,16.7"/><polygon points="635.7,17.1 651.5,17.4 638.6,17.9 622.7,17.5"/><polygon points="609.3,18.0 625.3,18.4 611.5,18.8 595.5,18.5"/><polygon points="581.1,19.0 597.3,19.3 582.6,19.9 566.3,19.5"/><polygon points="551.0,20.0 567.4,20.4 551.6,21.0 535.2,20.5"/><polygon points="518.7,21.1 535.2,21.6 518.3,22.2 501.7,21.7"/><polygon points="484.0,22.3 500.7,22.8 482.4,23.4 465.7,22.9"/><polygon points="446.7,23.6 463.4,24.1 443.7,24.8 426.9,24.3"/><polygon points="406.3,25.0 423.2,25.5 401.7,26.3 384.9,25.7"/><polygon points="362.6,26.5 379.4,27.1 356.1,27.9 339.3,27.3"/><polygon points="315.0,28.1 331.8,28.8 306.4,29.7 289.6,29.0"/><polygon points="263.1,29.9 279.8,30.6 251.9,31.6 235.3,30.9"/><polygon points="206.2,31.9 222.7,32.7 192.0,33.7 175.7,32.9"/><polygon points="687.8,16.1 703.7,16.4 692.1,16.9 676.1,16.5"/><polygon points="664.0,17.0 680.1,17.3 667.7,17.8 651.5,17.4"/><polygon points="638.6,17.9 654.9,18.2 641.7,18.7 625.3,18.4"/><polygon points="611.5,18.8 628.0,19.2 613.9,19.7 597.3,19.3"/><polygon points="582.6,19.9 599.3,20.3 584.2,20.8 567.4,20.4"/><polygon points="551.6,21.0 568.5,21.4 552.2,22.0 535.2,21.6"/><polygon points="518.3,22.2 535.3,22.6 517.8,23.3 500.7,22.8"/><polygon points="482.4,23.4 499.6,23.9 480.7,24.6 463.4,24.1"/><polygon points="443.7,24.8 461.0,25.3 440.5,26.1 423.2,25.5"/><polygon points="401.7,26.3 419.1,26.9 396.8,27.7 379.4,27.1"/><polygon points="356.1,27.9 373.6,28.6 349.2,29.4 331.8,28.8"/><polygon points="306.4,29.7 323.8,30.4 297.1,31.4 279.8,30.6"/><polygon points="251.9,31.6 269.2,32.4 239.8,33.5 222.7,32.7"/><polygon points="715.0,16.0 731.1,16.3 719.9,16.8 703.7,16.4"/><polygon points="692.1,16.9 708.4,17.2 696.5,17.6 680.1,17.3"/><polygon points="667.7,17.8 684.2,18.1 671.6,18.6 654.9,18.2"/><polygon points="641.7,18.7 658.5,19.1 644.9,19.6 628.0,19.2"/><polygon points="613.9,19.7 630.9,20.1 616.4,20.7 599.3,20.3"/><polygon points="584.2,20.8 601.4,21.3 585.8,21.8 568.5,21.4"/><polygon points="552.2,22.0 569.7,22.5 552.9,23.1 535.3,22.6"/><polygon points="517.8,23.3 535.4,23.8 517.3,24.4 499.6,23.9"/><polygon points="480.7,24.6 498.5,25.2 478.9,25.9 461.0,25.3"/><polygon points="440.5,26.1 458.4,26.7 437.1,27.5 419.1,26.9"/><polygon points="396.8,27.7 414.8,28.3 391.6,29.2 373.6,28.6"/><polygon points="349.2,29.4 367.2,30.1 341.8,31.1 323.8,30.4"/><polygon points="297.1,31.4 315.1,32.1 287.0,33.2 269.2,32.4"/><polygon points="741.9,15.9 758.2,16.2 747.5,16.6 731.1,16.3"/><polygon points="719.9,16.8 736.5,17.1 725.1,17.5 708.4,17.2"/><polygon points="696.5,17.6 713.3,18.0 701.2,18.5 684.2,18.1"/><polygon points="671.6,18.6 688.7,19.0 675.7,19.5 658.5,19.1"/><polygon points="644.9,19.6 662.3,20.0 648.4,20.5 630.9,20.1"/><polygon points="616.4,20.7 634.0,21.1 619.1,21.7 601.4,21.3"/><polygon points="585.8,21.8 603.6,22.3 587.6,22.9 569.7,22.5"/><polygon points="552.9,23.1 570.9,23.6 553.6,24.3 535.4,23.8"/><polygon points="517.3,24.4 535.6,25.0 516.8,25.7 498.5,25.2"/><polygon points="478.9,25.9 497.3,26.5 476.9,27.3 458.4,26.7"/><polygon points="437.1,27.5 455.6,28.1 433.4,29.0 414.8,28.3"/><polygon points="391.6,29.2 410.2,29.9 385.8,30.9 367.2,30.1"/><polygon points="341.8,31.1 360.4,31.9 333.6,32.9 315.1,32.1"/><polygon points="287.0,33.2 305.6,34.0 276.0,35.2 257.6,34.3"/><polygon points="768.6,15.8 785.1,16.1 774.9,16.5 758.2,16.2"/><polygon points="747.5,16.6 764.3,17.0 753.4,17.4 736.5,17.1"/><polygon points="725.1,17.5 742.2,17.9 730.6,18.3 713.3,18.0"/><polygon points="701.2,18.5 718.6,18.8 706.2,19.3 688.7,19.0"/><polygon points="675.7,19.5 693.4,19.9 680.1,20.4 662.3,20.0"/><polygon points="648.4,20.5 666.3,21.0 652.1,21.5 634.0,21.1"/><polygon points="619.1,21.7 637.3,22.1 621.9,22.8 603.6,22.3"/><polygon points="587.6,22.9 606.0,23.4 589.5,24.1 570.9,23.6"/><polygon points="553.6,24.3 572.3,24.8 554.3,25.5 535.6,25.0"/><polygon points="516.8,25.7 535.7,26.3 516.2,27.1 497.3,26.5"/><polygon points="476.9,27.3 495.9,27.9 474.7,28.8 455.6,28.1"/><polygon points="433.4,29.0 452.6,29.7 429.4,30.6 410.2,29.9"/><polygon points="385.8,30.9 405.1,31.6 379.6,32.6 360.4,31.9"/><polygon points="333.6,32.9 352.9,33.7 324.8,34.9 305.6,34.0"/><polygon points="795.1,15.7 811.9,16.0 802.1,16.4 785.1,16.1"/><polygon points="774.9,16.5 792.0,16.9 781.6,17.3 764.3,17.0"/><polygon points="753.4,17.4 770.8,17.8 759.7,18.2 742.2,17.9"/><polygon points="730.6,18.3 748.3,18.7 736.4,19.2 718.6,18.8"/><polygon points="706.2,19.3 724.2,19.7 711.5,20.3 693.4,19.9"/><polygon points="680.1,20.4 698.3,20.8 684.7,21.4 666.3,21.0"/><polygon points="652.1,21.5 670.6,22.0 656.0,22.6 637.3,22.1"/><polygon points="621.9,22.8 640.8,23.3 625.0,23.9 606.0,23.4"/><polygon points="589.5,24.1 608.6,24.6 591.5,25.3 572.3,24.8"/><polygon points="554.3,25.5 573.7,26.1 555.2,26.9 535.7,26.3"/><polygon points="516.2,27.1 535.8,27.7 515.6,28.5 495.9,27.9"/><polygon points="474.7,28.8 494.5,29.4 472.4,30.4 452.6,29.7"/><polygon points="429.4,30.6 449.3,31.3 425.1,32.4 405.1,31.6"/><polygon points="379.6,32.6 399.6,33.4 372.9,34.6 352.9,33.7"/><polygon points="802.1,16.4 819.4,16.8 809.5,17.2 792.0,16.9"/><polygon points="781.6,17.3 799.2,17.6 788.6,18.1 770.8,17.8"/><polygon points="759.7,18.2 777.7,18.6 766.4,19.1 748.3,18.7"/><polygon points="736.4,19.2 754.7,19.6 742.6,20.1 724.2,19.7"/><polygon points="711.5,20.3 730.1,20.7 717.1,21.2 698.3,20.8"/><polygon points="684.7,21.4 703.6,21.8 689.7,22.5 670.6,22.0"/><polygon points="656.0,22.6 675.2,23.1 660.2,23.7 640.8,23.3"/><polygon points="625.0,23.9 644.5,24.4 628.2,25.1 608.6,24.6"/><polygon points="591.5,25.3 611.3,25.9 593.7,26.7 573.7,26.1"/><polygon points="555.2,26.9 575.2,27.5 556.0,28.3 535.8,27.7"/><polygon points="515.6,28.5 536.0,29.2 515.0,30.1 494.5,29.4"/><polygon points="472.4,30.4 493.0,31.1 469.9,32.1 449.3,31.3"/><polygon points="425.1,32.4 445.8,33.2 420.4,34.3 399.6,33.4"/><polygon points="829.0,16.3 846.6,16.6 837.1,17.1 819.4,16.8"/><polygon points="809.5,17.2 827.3,17.5 817.3,18.0 799.2,17.6"/><polygon points="788.6,18.1 806.8,18.5 796.1,19.0 777.7,18.6"/><polygon points="766.4,19.1 784.9,19.5 773.4,20.0 754.7,19.6"/><polygon points="742.6,20.1 761.5,20.5 749.1,21.1 730.1,20.7"/><polygon points="717.1,21.2 736.3,21.7 723.1,22.3 703.6,21.8"/><polygon points="689.7,22.5 709.3,22.9 695.0,23.6 675.2,23.1"/><polygon points="660.2,23.7 680.1,24.3 664.6,25.0 644.5,24.4"/><polygon points="628.2,25.1 648.5,25.7 631.7,26.5 611.3,25.9"/><polygon points="593.7,26.7 614.2,27.3 596.0,28.1 575.2,27.5"/><polygon points="556.0,28.3 576.9,29.0 557.0,29.9 536.0,29.2"/><polygon points="515.0,30.1 536.1,30.8 514.2,31.8 493.0,31.1"/><polygon points="469.9,32.1 491.3,32.9 467.2,34.0 445.8,33.2"/><polygon points="837.1,17.1 855.3,17.4 845.7,17.9 827.3,17.5"/><polygon points="817.3,18.0 835.8,18.3 825.5,18.8 806.8,18.5"/><polygon points="796.1,19.0 814.9,19.3 804.0,19.9 784.9,19.5"/><polygon points="773.4,20.0 792.6,20.4 780.9,21.0 761.5,20.5"/><polygon points="749.1,21.1 768.7,21.5 756.1,22.1 736.3,21.7"/><polygon points="723.1,22.3 743.0,22.8 729.4,23.4 709.3,22.9"/><polygon points="695.0,23.6 715.3,24.1 700.6,24.8 680.1,24.3"/><polygon points="664.6,25.0 685.3,25.5 669.4,26.3 648.5,25.7"/><polygon points="631.7,26.5 652.8,27.1 635.5,27.9 614.2,27.3"/><polygon points="596.0,28.1 617.4,28.7 598.5,29.6 576.9,29.0"/><polygon points="557.0,29.9 578.7,30.6 558.0,31.6 536.1,30.8"/><polygon points="514.2,31.8 536.3,32.6 513.5,33.7 491.3,32.9"/><polygon points="864.6,17.0 882.9,17.3 873.8,17.8 855.3,17.4"/><polygon points="845.7,17.9 864.4,18.2 854.7,18.7 835.8,18.3"/><polygon points="825.5,18.8 844.6,19.2 834.3,19.7 814.9,19.3"/><polygon points="804.0,19.9 823.5,20.3 812.4,20.8 792.6,20.4"/><polygon points="780.9,21.0 800.8,21.4 788.9,22.0 768.7,21.5"/><polygon points="756.1,22.1 776.4,22.6 763.6,23.2 743.0,22.8"/><polygon points="729.4,23.4 750.2,23.9 736.2,24.6 715.3,24.1"/><polygon points="700.6,24.8 721.8,25.3 706.7,26.1 685.3,25.5"/><polygon points="669.4,26.3 691.0,26.9 674.6,27.7 652.8,27.1"/><polygon points="635.5,27.9 657.4,28.5 639.5,29.4 617.4,28.7"/><polygon points="598.5,29.6 620.8,30.3 601.2,31.3 578.7,30.6"/><polygon points="558.0,31.6 580.7,32.3 559.1,33.4 536.3,32.6"/><polygon points="873.8,17.8 892.9,18.1 883.6,18.6 864.4,18.2"/><polygon points="854.7,18.7 874.1,19.1 864.3,19.6 844.6,19.2"/><polygon points="834.3,19.7 854.1,20.1 843.5,20.7 823.5,20.3"/><polygon points="812.4,20.8 832.6,21.2 821.3,21.8 800.8,21.4"/><polygon points="788.9,22.0 809.5,22.4 797.3,23.1 776.4,22.6"/><polygon points="763.6,23.2 784.7,23.7 771.5,24.4 750.2,23.9"/><polygon points="736.2,24.6 757.8,25.1 743.5,25.9 721.8,25.3"/><polygon points="706.7,26.1 728.7,26.7 713.2,27.5 691.0,26.9"/><polygon points="674.6,27.7 697.0,28.3 680.1,29.2 657.4,28.5"/><polygon points="639.5,29.4 662.4,30.1 643.9,31.1 620.8,30.3"/><polygon points="601.2,31.3 624.5,32.1 604.2,33.1 580.7,32.3"/><polygon points="901.8,17.6 921.0,18.0 912.3,18.5 892.9,18.1"/><polygon points="883.6,18.6 903.3,19.0 894.0,19.5 874.1,19.1"/><polygon points="864.3,19.6 884.4,20.0 874.4,20.5 854.1,20.1"/><polygon points="843.5,20.7 864.1,21.1 853.4,21.7 832.6,21.2"/><polygon points="821.3,21.8 842.3,22.3 830.8,22.9 809.5,22.4"/><polygon points="797.3,23.1 818.8,23.6 806.4,24.2 784.7,23.7"/><polygon points="771.5,24.4 793.5,25.0 780.0,25.7 757.8,25.1"/><polygon points="743.5,25.9 766.0,26.5 751.4,27.3 728.7,26.7"/><polygon points="713.2,27.5 736.1,28.1 720.2,29.0 697.0,28.3"/><polygon points="680.1,29.2 703.5,29.9 686.1,30.8 662.4,30.1"/><polygon points="643.9,31.1 667.8,31.8 648.7,32.9 624.5,32.1"/><polygon points="604.2,33.1 628.6,34.0 607.4,35.1 582.8,34.3"/><polygon points="912.3,18.5 932.3,18.8 923.5,19.3 903.3,19.0"/><polygon points="894.0,19.5 914.4,19.9 905.0,20.4 884.4,20.0"/><polygon points="874.4,20.5 895.3,21.0 885.2,21.5 864.1,21.1"/><polygon points="853.4,21.7 874.8,22.1 863.9,22.8 842.3,22.3"/><polygon points="830.8,22.9 852.7,23.4 841.0,24.1 818.8,23.6"/><polygon points="806.4,24.2 828.8,24.8 816.1,25.5 793.5,25.0"/><polygon points="780.0,25.7 802.9,26.3 789.2,27.0 766.0,26.5"/><polygon points="751.4,27.3 774.8,27.9 759.8,28.7 736.1,28.1"/><polygon points="720.2,29.0 744.2,29.6 727.8,30.6 703.5,29.9"/><polygon points="686.1,30.8 710.6,31.6 692.6,32.6 667.8,31.8"/><polygon points="648.7,32.9 673.7,33.7 653.9,34.8 628.6,34.0"/><polygon points="940.8,18.3 961.0,18.7 952.7,19.2 932.3,18.8"/><polygon points="923.5,19.3 944.2,19.7 935.4,20.3 914.4,19.9"/><polygon points="905.0,20.4 926.2,20.8 916.8,21.4 895.3,21.0"/><polygon points="885.2,21.5 906.9,22.0 896.7,22.6 874.8,22.1"/><polygon points="863.9,22.8 886.1,23.2 875.2,23.9 852.7,23.4"/><polygon points="841.0,24.1 863.7,24.6 851.8,25.3 828.8,24.8"/><polygon points="816.1,25.5 839.4,26.1 826.5,26.8 802.9,26.3"/><polygon points="789.2,27.0 813.1,27.7 799.0,28.5 774.8,27.9"/><polygon points="759.8,28.7 784.3,29.4 769.0,30.3 744.2,29.6"/><polygon points="727.8,30.6 752.9,31.3 736.0,32.3 710.6,31.6"/><polygon points="692.6,32.6 718.3,33.4 699.7,34.5 673.7,33.7"/><polygon points="952.7,19.2 973.7,19.6 965.4,20.1 944.2,19.7"/><polygon points="935.4,20.3 956.9,20.7 948.0,21.2 926.2,20.8"/><polygon points="916.8,21.4 938.8,21.8 929.2,22.4 906.9,22.0"/><polygon points="896.7,22.6 919.3,23.1 909.0,23.7 886.1,23.2"/><polygon points="875.2,23.9 898.3,24.4 887.2,25.1 863.7,24.6"/><polygon points="851.8,25.3 875.6,25.9 863.5,26.6 839.4,26.1"/><polygon points="826.5,26.8 850.9,27.4 837.8,28.3 813.1,27.7"/><polygon points="799.0,28.5 824.0,29.2 809.6,30.1 784.3,29.4"/><polygon points="769.0,30.3 794.6,31.1 778.8,32.1 752.9,31.3"/><polygon points="736.0,32.3 762.3,33.1 744.9,34.2 718.3,33.4"/><polygon points="981.7,19.1 1003.0,19.5 995.2,20.0 973.7,19.6"/><polygon points="965.4,20.1 987.2,20.5 978.9,21.1 956.9,20.7"/><polygon points="948.0,21.2 970.3,21.7 961.4,22.3 938.8,21.8"/><polygon points="929.2,22.4 952.1,22.9 942.5,23.6 919.3,23.1"/><polygon points="909.0,23.7 932.5,24.2 922.1,24.9 898.3,24.4"/><polygon points="887.2,25.1 911.3,25.7 900.1,26.4 875.6,25.9"/><polygon points="863.5,26.6 888.3,27.2 876.0,28.1 850.9,27.4"/><polygon points="837.8,28.3 863.2,28.9 849.9,29.9 824.0,29.2"/><polygon points="809.6,30.1 835.8,30.8 821.2,31.8 794.6,31.1"/><polygon points="778.8,32.1 805.8,32.8 789.6,33.9 762.3,33.1"/><polygon points="995.2,20.0 1017.3,20.4 1009.6,20.9 987.2,20.5"/><polygon points="978.9,21.1 1001.6,21.5 993.3,22.1 970.3,21.7"/><polygon points="961.4,22.3 984.7,22.7 975.7,23.4 952.1,22.9"/><polygon points="942.5,23.6 966.4,24.1 956.8,24.8 932.5,24.2"/><polygon points="922.1,24.9 946.7,25.5 936.2,26.2 911.3,25.7"/><polygon points="900.1,26.4 925.3,27.0 913.9,27.9 888.3,27.2"/><polygon points="876.0,28.1 902.0,28.7 889.6,29.6 863.2,28.9"/><polygon points="849.9,29.9 876.6,30.6 863.0,31.5 835.8,30.8"/><polygon points="821.2,31.8 848.7,32.6 833.7,33.7 805.8,32.8"/><polygon points="1024.8,19.8 1047.1,20.2 1039.9,20.8 1017.3,20.4"/><polygon points="1009.6,20.9 1032.5,21.4 1024.8,22.0 1001.6,21.5"/><polygon points="993.3,22.1 1016.8,22.6 1008.6,23.2 984.7,22.7"/><polygon points="975.7,23.4 1000.0,23.9 991.0,24.6 966.4,24.1"/><polygon points="956.8,24.8 981.7,25.3 972.0,26.1 946.7,25.5"/><polygon points="936.2,26.2 961.9,26.8 951.4,27.6 925.3,27.0"/><polygon points="913.9,27.9 940.4,28.5 928.9,29.4 902.0,28.7"/><polygon points="889.6,29.6 916.8,30.3 904.2,31.3 876.6,30.6"/><polygon points="863.0,31.5 891.0,32.3 877.2,33.4 848.7,32.6"/><polygon points="1039.9,20.8 1063.2,21.2 1056.1,21.8 1032.5,21.4"/><polygon points="1024.8,22.0 1048.7,22.4 1041.1,23.1 1016.8,22.6"/><polygon points="1008.6,23.2 1033.2,23.7 1024.9,24.4 1000.0,23.9"/><polygon points="991.0,24.6 1016.3,25.1 1007.4,25.9 981.7,25.3"/><polygon points="972.0,26.1 998.1,26.6 988.4,27.4 961.9,26.8"/><polygon points="951.4,27.6 978.3,28.3 967.7,29.2 940.4,28.5"/><polygon points="928.9,29.4 956.6,30.1 945.0,31.0 916.8,30.3"/><polygon points="904.2,31.3 932.9,32.0 920.1,33.1 891.0,32.3"/><polygon points="1070.0,20.7 1093.6,21.1 1087.1,21.7 1063.2,21.2"/><polygon points="1056.1,21.8 1080.3,22.3 1073.3,22.9 1048.7,22.4"/><polygon points="1041.1,23.1 1066.0,23.6 1058.5,24.2 1033.2,23.7"/><polygon points="1024.9,24.4 1050.6,24.9 1042.4,25.7 1016.3,25.1"/><polygon points="1007.4,25.9 1033.9,26.4 1025.0,27.2 998.1,26.6"/><polygon points="988.4,27.4 1015.7,28.1 1006.0,28.9 978.3,28.3"/><polygon points="967.7,29.2 995.9,29.8 985.3,30.8 956.6,30.1"/><polygon points="945.0,31.0 974.2,31.8 962.6,32.8 932.9,32.0"/><polygon points="920.1,33.1 950.3,33.9 937.5,35.1 906.8,34.2"/><polygon points="1087.1,21.7 1111.6,22.1 1105.2,22.7 1080.3,22.3"/><polygon points="1073.3,22.9 1098.6,23.4 1091.7,24.1 1066.0,23.6"/><polygon points="1058.5,24.2 1084.5,24.8 1077.1,25.5 1050.6,24.9"/><polygon points="1042.4,25.7 1069.3,26.2 1061.2,27.0 1033.9,26.4"/><polygon points="1025.0,27.2 1052.8,27.8 1044.0,28.7 1015.7,28.1"/><polygon points="1006.0,28.9 1034.8,29.6 1025.1,30.5 995.9,29.8"/><polygon points="985.3,30.8 1015.0,31.5 1004.4,32.6 974.2,31.8"/><polygon points="962.6,32.8 993.3,33.6 981.6,34.8 950.3,33.9"/><polygon points="1117.7,21.5 1142.6,22.0 1136.8,22.6 1111.6,22.1"/><polygon points="1105.2,22.7 1130.8,23.2 1124.6,23.9 1098.6,23.4"/><polygon points="1091.7,24.1 1118.1,24.6 1111.4,25.3 1084.5,24.8"/><polygon points="1077.1,25.5 1104.4,26.0 1097.0,26.8 1069.3,26.2"/><polygon points="1061.2,27.0 1089.4,27.6 1081.5,28.5 1052.8,27.8"/><polygon points="1044.0,28.7 1073.1,29.4 1064.4,30.3 1034.8,29.6"/><polygon points="1025.1,30.5 1055.3,31.3 1045.8,32.3 1015.0,31.5"/><polygon points="1004.4,32.6 1035.8,33.4 1025.2,34.5 993.3,33.6"/><polygon points="1136.8,22.6 1162.7,23.1 1157.1,23.7 1130.8,23.2"/><polygon points="1124.6,23.9 1151.3,24.4 1145.3,25.1 1118.1,24.6"/><polygon points="1111.4,25.3 1139.0,25.8 1132.5,26.6 1104.4,26.0"/><polygon points="1097.0,26.8 1125.6,27.4 1118.5,28.3 1089.4,27.6"/><polygon points="1081.5,28.5 1111.1,29.1 1103.3,30.1 1073.1,29.4"/><polygon points="1064.4,30.3 1095.2,31.0 1086.6,32.0 1055.3,31.3"/><polygon points="1045.8,32.3 1077.7,33.1 1068.3,34.2 1035.8,33.4"/><polygon points="1168.1,22.4 1194.3,22.9 1189.4,23.5 1162.7,23.1"/><polygon points="1157.1,23.7 1184.2,24.2 1178.9,24.9 1151.3,24.4"/><polygon points="1145.3,25.1 1173.3,25.7 1167.5,26.4 1139.0,25.8"/><polygon points="1132.5,26.6 1161.5,27.2 1155.2,28.0 1125.6,27.4"/><polygon points="1118.5,28.3 1148.6,28.9 1141.7,29.8 1111.1,29.1"/><polygon points="1103.3,30.1 1134.5,30.8 1127.0,31.8 1095.2,31.0"/><polygon points="1086.6,32.0 1119.1,32.8 1110.7,33.9 1077.7,33.1"/><polygon points="1189.4,23.5 1216.8,24.0 1212.1,24.7 1184.2,24.2"/><polygon points="1178.9,24.9 1207.2,25.5 1202.2,26.2 1173.3,25.7"/><polygon points="1167.5,26.4 1196.9,27.0 1191.4,27.8 1161.5,27.2"/><polygon points="1155.2,28.0 1185.7,28.7 1179.7,29.6 1148.6,28.9"/><polygon points="1141.7,29.8 1173.4,30.5 1166.8,31.5 1134.5,30.8"/><polygon points="1127.0,31.8 1159.9,32.5 1152.7,33.6 1119.1,32.8"/><polygon points="1212.1,24.7 1240.8,25.3 1236.5,26.0 1207.2,25.5"/><polygon points="1202.2,26.2 1232.0,26.8 1227.3,27.6 1196.9,27.0"/><polygon points="1191.4,27.8 1222.3,28.5 1217.2,29.4 1185.7,28.7"/><polygon points="1179.7,29.6 1211.8,30.3 1206.2,31.3 1173.4,30.5"/><polygon points="1166.8,31.5 1200.3,32.3 1194.1,33.3 1159.9,32.5"/><polygon points="1245.0,24.6 1274.1,25.1 1270.4,25.8 1240.8,25.3"/><polygon points="1236.5,26.0 1266.6,26.6 1262.7,27.4 1232.0,26.8"/><polygon points="1227.3,27.6 1258.6,28.3 1254.3,29.1 1222.3,28.5"/><polygon points="1217.2,29.4 1249.8,30.0 1245.0,31.0 1211.8,30.3"/><polygon points="1206.2,31.3 1240.1,32.0 1234.9,33.1 1200.3,32.3"/><polygon points="1194.1,33.3 1229.5,34.2 1223.8,35.3 1187.5,34.5"/><polygon points="1270.4,25.8 1300.9,26.4 1297.7,27.2 1266.6,26.6"/><polygon points="1262.7,27.4 1294.4,28.0 1290.9,28.9 1258.6,28.3"/><polygon points="1254.3,29.1 1287.3,29.8 1283.4,30.8 1249.8,30.0"/><polygon points="1245.0,31.0 1279.5,31.7 1275.3,32.8 1240.1,32.0"/><polygon points="1234.9,33.1 1270.9,33.9 1266.2,35.0 1229.5,34.2"/><polygon points="1304.0,25.6 1334.9,26.2 1332.4,27.0 1300.9,26.4"/><polygon points="1297.7,27.2 1329.8,27.8 1327.1,28.7 1294.4,28.0"/><polygon points="1290.9,28.9 1324.3,29.6 1321.4,30.5 1287.3,29.8"/><polygon points="1283.4,30.8 1318.3,31.5 1315.1,32.5 1279.5,31.7"/><polygon points="1275.3,32.8 1311.7,33.6 1308.2,34.7 1270.9,33.9"/><polygon points="1332.4,27.0 1364.9,27.6 1363.0,28.5 1329.8,27.8"/><polygon points="1327.1,28.7 1361.0,29.3 1358.9,30.3 1324.3,29.6"/><polygon points="1321.4,30.5 1356.7,31.2 1354.4,32.3 1318.3,31.5"/><polygon points="1315.1,32.5 1352.0,33.3 1349.5,34.4 1311.7,33.6"/><polygon points="1366.7,26.8 1399.5,27.4 1398.4,28.2 1364.9,27.6"/><polygon points="1363.0,28.5 1397.2,29.1 1395.9,30.0 1361.0,29.3"/><polygon points="1358.9,30.3 1394.6,31.0 1393.3,32.0 1356.7,31.2"/><polygon points="1354.4,32.3 1391.9,33.0 1390.4,34.1 1352.0,33.3"/><polygon points="1398.4,28.2 1433.0,28.9 1432.6,29.8 1397.2,29.1"/><polygon points="1395.9,30.0 1432.1,30.7 1431.7,31.7 1394.6,31.0"/><polygon points="1393.3,32.0 1431.2,32.8 1430.7,33.9 1391.9,33.0"/><polygon points="1433.4,28.0 1468.4,28.7 1468.7,29.6 1433.0,28.9"/><polygon points="1432.6,29.8 1469.1,30.5 1469.6,31.5 1432.1,30.7"/><polygon points="1431.7,31.7 1470.0,32.5 1470.5,33.6 1431.2,32.8"/></g><g fill="#b2aaa7" fill-opacity="0.4"><polygon points="-5.6,34.9 8.0,35.8 -30.7,37.1 -43.9,36.1"/><polygon points="44.8,34.6 59.3,35.5 22.2,36.7 8.0,35.8"/><polygon points="94.5,34.3 109.9,35.2 74.4,36.4 59.3,35.5"/><polygon points="22.2,36.7 36.9,37.7 -2.6,39.1 -16.9,38.0"/><polygon points="143.6,34.0 159.8,34.9 125.8,36.1 109.9,35.2"/><polygon points="74.4,36.4 90.0,37.4 52.3,38.7 36.9,37.7"/><polygon points="-2.6,39.1 12.3,40.1 -29.9,41.6 -44.4,40.5"/><polygon points="192.0,33.7 209.0,34.6 176.6,35.8 159.8,34.9"/><polygon points="125.8,36.1 142.4,37.0 106.3,38.4 90.0,37.4"/><polygon points="52.3,38.7 68.2,39.8 27.9,41.2 12.3,40.1"/><polygon points="239.8,33.5 257.6,34.3 226.6,35.5 209.0,34.6"/><polygon points="176.6,35.8 194.0,36.7 159.6,38.0 142.4,37.0"/><polygon points="106.3,38.4 123.3,39.4 84.9,40.9 68.2,39.8"/><polygon points="27.9,41.2 44.2,42.4 1.0,44.0 -14.8,42.8"/><polygon points="226.6,35.5 245.0,36.4 212.2,37.7 194.0,36.7"/><polygon points="159.6,38.0 177.6,39.0 141.0,40.5 123.3,39.4"/><polygon points="84.9,40.9 102.3,42.0 61.2,43.6 44.2,42.4"/><polygon points="1.0,44.0 17.5,45.3 -29.0,47.2 -45.0,45.8"/><polygon points="276.0,35.2 295.2,36.1 264.0,37.3 245.0,36.4"/><polygon points="212.2,37.7 231.1,38.7 196.3,40.1 177.6,39.0"/><polygon points="141.0,40.5 159.5,41.6 120.4,43.2 102.3,42.0"/><polygon points="61.2,43.6 79.0,44.9 34.8,46.7 17.5,45.3"/><polygon points="324.8,34.9 344.8,35.8 315.1,37.0 295.2,36.1"/><polygon points="264.0,37.3 283.9,38.3 250.8,39.7 231.1,38.7"/><polygon points="196.3,40.1 215.9,41.2 178.8,42.8 159.5,41.6"/><polygon points="120.4,43.2 139.4,44.4 97.6,46.2 79.0,44.9"/><polygon points="34.8,46.7 53.0,48.1 5.3,50.1 -12.3,48.6"/><polygon points="372.9,34.6 393.7,35.4 365.5,36.7 344.8,35.8"/><polygon points="315.1,37.0 335.8,38.0 304.5,39.4 283.9,38.3"/><polygon points="250.8,39.7 271.4,40.8 236.2,42.4 215.9,41.2"/><polygon points="178.8,42.8 199.0,44.0 159.3,45.7 139.4,44.4"/><polygon points="97.6,46.2 117.1,47.6 72.0,49.6 53.0,48.1"/><polygon points="5.3,50.1 23.8,51.7 -27.9,54.0 -45.7,52.3"/><polygon points="420.4,34.3 441.9,35.1 415.2,36.4 393.7,35.4"/><polygon points="365.5,36.7 387.1,37.6 357.4,39.0 335.8,38.0"/><polygon points="304.5,39.4 326.0,40.4 292.8,42.0 271.4,40.8"/><polygon points="236.2,42.4 257.5,43.6 220.1,45.3 199.0,44.0"/><polygon points="159.3,45.7 180.2,47.1 137.6,49.1 117.1,47.6"/><polygon points="72.0,49.6 92.1,51.1 43.3,53.4 23.8,51.7"/><polygon points="467.2,34.0 489.5,34.8 464.2,36.0 441.9,35.1"/><polygon points="415.2,36.4 437.7,37.3 409.6,38.7 387.1,37.6"/><polygon points="357.4,39.0 379.9,40.1 348.5,41.6 326.0,40.4"/><polygon points="292.8,42.0 315.2,43.2 279.8,44.8 257.5,43.6"/><polygon points="220.1,45.3 242.2,46.6 202.0,48.5 180.2,47.1"/><polygon points="137.6,49.1 159.1,50.6 113.2,52.8 92.1,51.1"/><polygon points="43.3,53.4 63.8,55.1 10.7,57.7 -9.2,55.8"/><polygon points="513.5,33.7 536.5,34.5 512.6,35.7 489.5,34.8"/><polygon points="464.2,36.0 487.5,37.0 461.0,38.3 437.7,37.3"/><polygon points="409.6,38.7 433.0,39.7 403.4,41.2 379.9,40.1"/><polygon points="348.5,41.6 372.0,42.7 338.6,44.4 315.2,43.2"/><polygon points="279.8,44.8 303.2,46.2 265.4,48.0 242.2,46.6"/><polygon points="202.0,48.5 225.0,50.1 181.8,52.2 159.1,50.6"/><polygon points="113.2,52.8 135.4,54.5 85.5,57.0 63.8,55.1"/><polygon points="10.7,57.7 31.7,59.7 -26.5,62.6 -46.7,60.4"/><polygon points="559.1,33.4 582.8,34.3 560.3,35.4 536.5,34.5"/><polygon points="512.6,35.7 536.7,36.7 511.7,38.0 487.5,37.0"/><polygon points="461.0,38.3 485.3,39.3 457.4,40.8 433.0,39.7"/><polygon points="403.4,41.2 427.9,42.3 396.5,44.0 372.0,42.7"/><polygon points="338.6,44.4 363.2,45.7 327.6,47.5 303.2,46.2"/><polygon points="265.4,48.0 289.7,49.5 249.2,51.6 225.0,50.1"/><polygon points="181.8,52.2 205.7,53.9 158.9,56.3 135.4,54.5"/><polygon points="85.5,57.0 108.5,59.0 54.0,61.8 31.7,59.7"/><polygon points="560.3,35.4 585.1,36.3 561.7,37.6 536.7,36.7"/><polygon points="511.7,38.0 536.9,39.0 510.7,40.4 485.3,39.3"/><polygon points="457.4,40.8 482.9,41.9 453.5,43.5 427.9,42.3"/><polygon points="396.5,44.0 422.2,45.2 388.9,47.1 363.2,45.7"/><polygon points="327.6,47.5 353.3,49.0 315.3,51.1 289.7,49.5"/><polygon points="249.2,51.6 274.6,53.3 230.8,55.7 205.7,53.9"/><polygon points="158.9,56.3 183.7,58.3 132.8,61.1 108.5,59.0"/><polygon points="54.0,61.8 77.6,64.1 17.6,67.4 -5.2,64.9"/><polygon points="607.4,35.1 633.0,36.0 610.9,37.3 585.1,36.3"/><polygon points="561.7,37.6 587.7,38.6 563.1,40.0 536.9,39.0"/><polygon points="510.7,40.4 537.1,41.5 509.5,43.1 482.9,41.9"/><polygon points="453.5,43.5 480.2,44.8 449.1,46.6 422.2,45.2"/><polygon points="388.9,47.1 415.8,48.5 380.3,50.5 353.3,49.0"/><polygon points="315.3,51.1 342.3,52.7 301.4,55.1 274.6,53.3"/><polygon points="230.8,55.7 257.5,57.6 210.0,60.3 183.7,58.3"/><polygon points="132.8,61.1 158.6,63.3 102.8,66.5 77.6,64.1"/><polygon points="653.9,34.8 680.1,35.7 659.5,37.0 633.0,36.0"/><polygon points="610.9,37.3 637.8,38.3 614.8,39.7 587.7,38.6"/><polygon points="563.1,40.0 590.5,41.1 564.7,42.7 537.1,41.5"/><polygon points="509.5,43.1 537.4,44.4 508.3,46.1 480.2,44.8"/><polygon points="449.1,46.6 477.3,48.0 444.1,50.0 415.8,48.5"/><polygon points="380.3,50.5 408.7,52.1 370.7,54.5 342.3,52.7"/><polygon points="301.4,55.1 329.8,56.9 285.6,59.6 257.5,57.6"/><polygon points="210.0,60.3 237.9,62.5 186.1,65.6 158.6,63.3"/><polygon points="699.7,34.5 726.7,35.4 707.4,36.6 680.1,35.7"/><polygon points="659.5,37.0 687.2,37.9 665.7,39.3 637.8,38.3"/><polygon points="614.8,39.7 643.1,40.8 619.1,42.3 590.5,41.1"/><polygon points="564.7,42.7 593.6,43.9 566.5,45.7 537.4,44.4"/><polygon points="508.3,46.1 537.7,47.5 506.9,49.5 477.3,48.0"/><polygon points="444.1,50.0 473.9,51.6 438.6,53.8 408.7,52.1"/><polygon points="370.7,54.5 400.6,56.3 359.7,58.9 329.8,56.9"/><polygon points="285.6,59.6 315.5,61.7 267.5,64.8 237.9,62.5"/><polygon points="744.9,34.2 772.6,35.1 754.7,36.3 726.7,35.4"/><polygon points="707.4,36.6 735.8,37.6 715.9,38.9 687.2,37.9"/><polygon points="665.7,39.3 694.9,40.4 672.6,41.9 643.1,40.8"/><polygon points="619.1,42.3 648.9,43.5 623.8,45.2 593.6,43.9"/><polygon points="566.5,45.7 597.0,47.0 568.5,49.0 537.7,47.5"/><polygon points="506.9,49.5 538.0,51.0 505.3,53.3 473.9,51.6"/><polygon points="438.6,53.8 470.2,55.6 432.3,58.2 400.6,56.3"/><polygon points="359.7,58.9 391.5,61.0 347.2,64.0 315.5,61.7"/><polygon points="789.6,33.9 817.9,34.8 801.3,36.0 772.6,35.1"/><polygon points="754.7,36.3 783.8,37.3 765.4,38.6 735.8,37.6"/><polygon points="715.9,38.9 745.9,40.0 725.3,41.5 694.9,40.4"/><polygon points="672.6,41.9 703.4,43.1 680.2,44.8 648.9,43.5"/><polygon points="623.8,45.2 655.4,46.5 629.1,48.5 597.0,47.0"/><polygon points="568.5,49.0 600.9,50.5 570.7,52.7 538.0,51.0"/><polygon points="505.3,53.3 538.4,55.0 503.5,57.5 470.2,55.6"/><polygon points="432.3,58.2 465.9,60.2 425.1,63.2 391.5,61.0"/><polygon points="347.2,64.0 380.9,66.4 332.7,69.9 299.0,67.3"/><polygon points="833.7,33.7 862.6,34.5 847.3,35.7 817.9,34.8"/><polygon points="801.3,36.0 831.2,36.9 814.2,38.2 783.8,37.3"/><polygon points="765.4,38.6 796.2,39.6 777.2,41.1 745.9,40.0"/><polygon points="725.3,41.5 757.0,42.7 735.6,44.3 703.4,43.1"/><polygon points="680.2,44.8 712.9,46.1 688.6,48.0 655.4,46.5"/><polygon points="629.1,48.5 662.7,50.0 635.0,52.1 600.9,50.5"/><polygon points="570.7,52.7 605.3,54.4 573.3,56.9 538.4,55.0"/><polygon points="503.5,57.5 538.8,59.5 501.5,62.4 465.9,60.2"/><polygon points="425.1,63.2 461.0,65.5 416.9,69.0 380.9,66.4"/><polygon points="877.2,33.4 906.8,34.2 892.7,35.4 862.6,34.5"/><polygon points="847.3,35.7 877.9,36.6 862.3,37.9 831.2,36.9"/><polygon points="814.2,38.2 845.8,39.3 828.3,40.7 796.2,39.6"/><polygon points="777.2,41.1 809.8,42.3 790.2,43.9 757.0,42.7"/><polygon points="735.6,44.3 769.4,45.6 747.2,47.5 712.9,46.1"/><polygon points="688.6,48.0 723.5,49.4 698.1,51.5 662.7,50.0"/><polygon points="635.0,52.1 670.9,53.8 641.7,56.2 605.3,54.4"/><polygon points="573.3,56.9 610.2,58.8 576.2,61.7 538.8,59.5"/><polygon points="501.5,62.4 539.3,64.7 499.1,68.0 461.0,65.5"/><polygon points="892.7,35.4 923.9,36.3 909.7,37.6 877.9,36.6"/><polygon points="862.3,37.9 894.6,38.9 878.7,40.3 845.8,39.3"/><polygon points="828.3,40.7 861.8,41.9 843.9,43.5 809.8,42.3"/><polygon points="790.2,43.9 824.9,45.2 804.7,47.0 769.4,45.6"/><polygon points="747.2,47.5 783.1,48.9 760.1,51.0 723.5,49.4"/><polygon points="698.1,51.5 735.4,53.2 708.8,55.6 670.9,53.8"/><polygon points="641.7,56.2 680.2,58.1 649.3,60.9 610.2,58.8"/><polygon points="576.2,61.7 615.9,63.9 579.5,67.2 539.3,64.7"/><polygon points="937.5,35.1 969.4,36.0 956.4,37.2 923.9,36.3"/><polygon points="909.7,37.6 942.7,38.6 928.3,40.0 894.6,38.9"/><polygon points="878.7,40.3 913.0,41.5 896.8,43.0 861.8,41.9"/><polygon points="843.9,43.5 879.6,44.7 861.3,46.5 824.9,45.2"/><polygon points="804.7,47.0 841.8,48.4 820.9,50.4 783.1,48.9"/><polygon points="760.1,51.0 798.6,52.6 774.6,54.9 735.4,53.2"/><polygon points="708.8,55.6 748.8,57.5 721.0,60.2 680.2,58.1"/><polygon points="649.3,60.9 690.8,63.1 658.1,66.3 615.9,63.9"/><polygon points="981.6,34.8 1014.2,35.7 1002.5,36.9 969.4,36.0"/><polygon points="956.4,37.2 990.2,38.2 977.2,39.6 942.7,38.6"/><polygon points="928.3,40.0 963.5,41.1 948.9,42.6 913.0,41.5"/><polygon points="896.8,43.0 933.4,44.3 917.0,46.0 879.6,44.7"/><polygon points="861.3,46.5 899.5,47.9 880.7,49.9 841.8,48.4"/><polygon points="820.9,50.4 860.7,52.0 839.2,54.3 798.6,52.6"/><polygon points="774.6,54.9 816.1,56.8 791.2,59.5 748.8,57.5"/><polygon points="721.0,60.2 764.2,62.3 735.0,65.5 690.8,63.1"/><polygon points="1025.2,34.5 1058.4,35.4 1048.0,36.6 1014.2,35.7"/><polygon points="1002.5,36.9 1037.0,37.9 1025.4,39.2 990.2,38.2"/><polygon points="977.2,39.6 1013.1,40.7 1000.2,42.2 963.5,41.1"/><polygon points="948.9,42.6 986.4,43.8 971.7,45.6 933.4,44.3"/><polygon points="917.0,46.0 956.1,47.4 939.5,49.4 899.5,47.9"/><polygon points="880.7,49.9 921.7,51.5 902.6,53.7 860.7,52.0"/><polygon points="839.2,54.3 882.1,56.2 860.0,58.8 816.1,56.8"/><polygon points="791.2,59.5 836.1,61.6 810.2,64.6 764.2,62.3"/><polygon points="1068.3,34.2 1102.0,35.1 1092.8,36.3 1058.4,35.4"/><polygon points="1048.0,36.6 1083.1,37.5 1072.9,38.9 1037.0,37.9"/><polygon points="1025.4,39.2 1062.1,40.3 1050.6,41.8 1013.1,40.7"/><polygon points="1000.2,42.2 1038.5,43.4 1025.6,45.1 986.4,43.8"/><polygon points="971.7,45.6 1011.9,46.9 997.2,48.9 956.1,47.4"/><polygon points="939.5,49.4 981.6,50.9 964.8,53.1 921.7,51.5"/><polygon points="902.6,53.7 946.8,55.5 927.4,58.1 882.1,56.2"/><polygon points="860.0,58.8 906.4,60.8 883.7,63.8 836.1,61.6"/><polygon points="810.2,64.6 859.1,67.1 832.1,70.6 782.0,68.0"/><polygon points="1110.7,33.9 1145.1,34.8 1137.1,36.0 1102.0,35.1"/><polygon points="1092.8,36.3 1128.6,37.2 1119.7,38.5 1083.1,37.5"/><polygon points="1072.9,38.9 1110.3,39.9 1100.4,41.4 1062.1,40.3"/><polygon points="1050.6,41.8 1089.8,43.0 1078.6,44.7 1038.5,43.4"/><polygon points="1025.6,45.1 1066.7,46.5 1054.0,48.4 1011.9,46.9"/><polygon points="997.2,48.9 1040.4,50.4 1025.9,52.6 981.6,50.9"/><polygon points="964.8,53.1 1010.2,54.9 993.4,57.4 946.8,55.5"/><polygon points="927.4,58.1 975.3,60.1 955.7,63.0 906.4,60.8"/><polygon points="883.7,63.8 934.4,66.2 911.2,69.7 859.1,67.1"/><polygon points="1152.7,33.6 1187.5,34.5 1180.7,35.6 1145.1,34.8"/><polygon points="1137.1,36.0 1173.5,36.9 1165.9,38.2 1128.6,37.2"/><polygon points="1119.7,38.5 1157.8,39.6 1149.3,41.0 1110.3,39.9"/><polygon points="1100.4,41.4 1140.3,42.6 1130.8,44.2 1089.8,43.0"/><polygon points="1078.6,44.7 1120.6,46.0 1109.8,47.9 1066.7,46.5"/><polygon points="1054.0,48.4 1098.2,49.9 1085.8,52.0 1040.4,50.4"/><polygon points="1025.9,52.6 1072.5,54.3 1058.2,56.7 1010.2,54.9"/><polygon points="993.4,57.4 1042.8,59.4 1026.2,62.3 975.3,60.1"/><polygon points="955.7,63.0 1008.1,65.4 988.4,68.8 934.4,66.2"/><polygon points="1180.7,35.6 1217.7,36.6 1211.4,37.9 1173.5,36.9"/><polygon points="1165.9,38.2 1204.7,39.2 1197.6,40.7 1157.8,39.6"/><polygon points="1149.3,41.0 1190.1,42.2 1182.1,43.8 1140.3,42.6"/><polygon points="1130.8,44.2 1173.6,45.5 1164.6,47.4 1120.6,46.0"/><polygon points="1109.8,47.9 1155.0,49.3 1144.7,51.4 1098.2,49.9"/><polygon points="1085.8,52.0 1133.6,53.7 1121.8,56.1 1072.5,54.3"/><polygon points="1058.2,56.7 1109.0,58.7 1095.2,61.5 1042.8,59.4"/><polygon points="1026.2,62.3 1080.2,64.5 1063.9,67.9 1008.1,65.4"/><polygon points="1223.8,35.3 1261.4,36.2 1256.2,37.5 1217.7,36.6"/><polygon points="1211.4,37.9 1250.8,38.9 1245.1,40.3 1204.7,39.2"/><polygon points="1197.6,40.7 1239.0,41.8 1232.6,43.4 1190.1,42.2"/><polygon points="1182.1,43.8 1225.8,45.1 1218.5,46.9 1173.6,45.5"/><polygon points="1164.6,47.4 1210.8,48.8 1202.5,50.9 1155.0,49.3"/><polygon points="1144.7,51.4 1193.6,53.1 1184.1,55.5 1133.6,53.7"/><polygon points="1121.8,56.1 1173.8,58.0 1162.7,60.8 1109.0,58.7"/><polygon points="1095.2,61.5 1150.7,63.7 1137.7,67.0 1080.2,64.5"/><polygon points="1266.2,35.0 1304.4,35.9 1300.5,37.2 1261.4,36.2"/><polygon points="1256.2,37.5 1296.3,38.5 1291.9,39.9 1250.8,38.9"/><polygon points="1245.1,40.3 1287.3,41.4 1282.3,43.0 1239.0,41.8"/><polygon points="1232.6,43.4 1277.1,44.6 1271.5,46.4 1225.8,45.1"/><polygon points="1218.5,46.9 1265.6,48.3 1259.3,50.3 1210.8,48.8"/><polygon points="1202.5,50.9 1252.5,52.5 1245.2,54.8 1193.6,53.1"/><polygon points="1184.1,55.5 1237.4,57.3 1228.9,60.0 1173.8,58.0"/><polygon points="1162.7,60.8 1219.7,63.0 1209.8,66.1 1150.7,63.7"/><polygon points="1308.2,34.7 1346.9,35.6 1344.1,36.9 1304.4,35.9"/><polygon points="1300.5,37.2 1341.2,38.2 1338.1,39.5 1296.3,38.5"/><polygon points="1291.9,39.9 1334.8,41.0 1331.3,42.6 1287.3,41.4"/><polygon points="1282.3,43.0 1327.6,44.2 1323.7,46.0 1277.1,44.6"/><polygon points="1271.5,46.4 1319.5,47.8 1315.1,49.8 1265.6,48.3"/><polygon points="1259.3,50.3 1310.3,51.9 1305.2,54.2 1252.5,52.5"/><polygon points="1245.2,54.8 1299.7,56.7 1293.7,59.3 1237.4,57.3"/><polygon points="1228.9,60.0 1287.3,62.2 1280.3,65.3 1219.7,63.0"/><polygon points="1349.5,34.4 1388.8,35.3 1387.1,36.5 1346.9,35.6"/><polygon points="1344.1,36.9 1385.4,37.8 1383.5,39.2 1341.2,38.2"/><polygon points="1338.1,39.5 1381.6,40.6 1379.5,42.2 1334.8,41.0"/><polygon points="1331.3,42.6 1377.3,43.8 1375.0,45.5 1327.6,44.2"/><polygon points="1323.7,46.0 1372.5,47.3 1369.9,49.3 1319.5,47.8"/><polygon points="1315.1,49.8 1367.1,51.4 1364.0,53.6 1310.3,51.9"/><polygon points="1305.2,54.2 1360.8,56.0 1357.3,58.6 1299.7,56.7"/><polygon points="1293.7,59.3 1353.5,61.4 1349.3,64.5 1287.3,62.2"/><polygon points="1390.4,34.1 1430.1,35.0 1429.6,36.2 1388.8,35.3"/><polygon points="1387.1,36.5 1429.0,37.5 1428.4,38.8 1385.4,37.8"/><polygon points="1383.5,39.2 1427.7,40.3 1427.0,41.8 1381.6,40.6"/><polygon points="1379.5,42.2 1426.3,43.4 1425.5,45.0 1377.3,43.8"/><polygon points="1375.0,45.5 1424.7,46.8 1423.8,48.8 1372.5,47.3"/><polygon points="1369.9,49.3 1422.8,50.8 1421.8,53.0 1367.1,51.4"/><polygon points="1364.0,53.6 1420.7,55.4 1419.5,57.9 1360.8,56.0"/><polygon points="1357.3,58.6 1418.2,60.7 1416.9,63.7 1353.5,61.4"/><polygon points="1349.3,64.5 1415.4,66.9 1413.7,70.4 1344.9,67.8"/><polygon points="1430.7,33.9 1470.9,34.7 1471.5,35.9 1430.1,35.0"/><polygon points="1429.6,36.2 1472.0,37.2 1472.5,38.5 1429.0,37.5"/><polygon points="1428.4,38.8 1473.1,39.9 1473.8,41.4 1427.7,40.3"/><polygon points="1427.0,41.8 1474.4,42.9 1475.2,44.6 1426.3,43.4"/><polygon points="1425.5,45.0 1475.9,46.4 1476.7,48.3 1424.7,46.8"/><polygon points="1423.8,48.8 1477.6,50.3 1478.5,52.4 1422.8,50.8"/><polygon points="1421.8,53.0 1479.5,54.8 1480.6,57.3 1420.7,55.4"/><polygon points="1419.5,57.9 1481.7,60.0 1482.9,62.9 1418.2,60.7"/><polygon points="1416.9,63.7 1484.3,66.0 1485.8,69.5 1415.4,66.9"/></g><g fill="#b2aaa7" fill-opacity="0.5"><polygon points="17.6,67.4 41.9,70.0 -24.7,73.8 -47.9,70.9"/><polygon points="102.8,66.5 129.6,69.1 67.9,72.8 41.9,70.0"/><polygon points="-24.7,73.8 0.1,76.9 -74.6,81.4 -97.9,78.0"/><polygon points="186.1,65.6 215.3,68.1 158.3,71.8 129.6,69.1"/><polygon points="67.9,72.8 95.7,75.8 26.8,80.2 0.1,76.9"/><polygon points="267.5,64.8 299.0,67.3 246.5,70.8 215.3,68.1"/><polygon points="158.3,71.8 188.9,74.7 125.6,79.0 95.7,75.8"/><polygon points="26.8,80.2 55.6,83.8 -22.2,89.1 -49.5,85.1"/><polygon points="246.5,70.8 279.9,73.7 221.9,77.9 188.9,74.7"/><polygon points="125.6,79.0 157.8,82.5 86.7,87.7 55.6,83.8"/><polygon points="332.7,69.9 368.6,72.7 315.7,76.8 279.9,73.7"/><polygon points="221.9,77.9 257.3,81.3 192.6,86.3 157.8,82.5"/><polygon points="416.9,69.0 455.3,71.7 407.2,75.7 368.6,72.7"/><polygon points="315.7,76.8 354.2,80.1 295.6,84.9 257.3,81.3"/><polygon points="499.1,68.0 539.8,70.7 496.4,74.6 455.3,71.7"/><polygon points="407.2,75.7 448.5,78.9 395.7,83.6 354.2,80.1"/><polygon points="295.6,84.9 337.0,88.9 271.3,94.8 230.3,90.4"/><polygon points="579.5,67.2 622.4,69.8 583.4,73.6 539.8,70.7"/><polygon points="496.4,74.6 540.5,77.8 493.1,82.4 448.5,78.9"/><polygon points="395.7,83.6 440.6,87.5 381.9,93.2 337.0,88.9"/><polygon points="658.1,66.3 703.1,68.9 668.3,72.6 622.4,69.8"/><polygon points="583.4,73.6 630.1,76.7 588.0,81.1 540.5,77.8"/><polygon points="493.1,82.4 541.3,86.1 489.2,91.7 440.6,87.5"/><polygon points="735.0,65.5 782.0,68.0 751.2,71.6 703.1,68.9"/><polygon points="668.3,72.6 717.5,75.6 680.3,79.9 630.1,76.7"/><polygon points="588.0,81.1 639.2,84.8 593.4,90.2 541.3,86.1"/><polygon points="751.2,71.6 802.7,74.5 770.2,78.8 717.5,75.6"/><polygon points="680.3,79.9 734.4,83.5 694.6,88.7 639.2,84.8"/><polygon points="832.1,70.6 885.8,73.5 857.9,77.6 802.7,74.5"/><polygon points="770.2,78.8 827.1,82.2 792.9,87.3 734.4,83.5"/><polygon points="911.2,69.7 966.9,72.5 943.3,76.5 885.8,73.5"/><polygon points="857.9,77.6 917.3,81.0 888.5,86.0 827.1,82.2"/><polygon points="988.4,68.8 1046.1,71.5 1026.6,75.4 966.9,72.5"/><polygon points="943.3,76.5 1005.1,79.8 981.4,84.6 917.3,81.0"/><polygon points="1063.9,67.9 1123.4,70.5 1107.9,74.4 1046.1,71.5"/><polygon points="1026.6,75.4 1090.7,78.7 1071.8,83.4 1005.1,79.8"/><polygon points="981.4,84.6 1050.7,88.6 1027.2,94.4 955.0,90.0"/><polygon points="1137.7,67.0 1199.0,69.6 1187.1,73.4 1123.4,70.5"/><polygon points="1107.9,74.4 1174.1,77.5 1159.7,82.1 1090.7,78.7"/><polygon points="1071.8,83.4 1143.8,87.2 1126.0,92.9 1050.7,88.6"/><polygon points="1209.8,66.1 1272.8,68.7 1264.5,72.4 1199.0,69.6"/><polygon points="1187.1,73.4 1255.4,76.4 1245.4,80.9 1174.1,77.5"/><polygon points="1159.7,82.1 1234.3,85.8 1221.9,91.3 1143.8,87.2"/><polygon points="1280.3,65.3 1344.9,67.8 1340.0,71.4 1272.8,68.7"/><polygon points="1264.5,72.4 1334.6,75.3 1328.7,79.7 1255.4,76.4"/><polygon points="1245.4,80.9 1322.2,84.5 1315.0,89.9 1234.3,85.8"/><polygon points="1340.0,71.4 1411.9,74.3 1410.0,78.5 1334.6,75.3"/><polygon points="1328.7,79.7 1407.8,83.2 1405.4,88.4 1322.2,84.5"/><polygon points="1413.7,70.4 1487.4,73.3 1489.1,77.4 1411.9,74.3"/><polygon points="1410.0,78.5 1491.1,82.0 1493.2,87.0 1407.8,83.2"/></g><g fill="#b2aaa7" fill-opacity="0.6"><polygon points="-22.2,89.1 7.4,93.4 -81.8,99.8 -109.2,95.0"/><polygon points="86.7,87.7 120.5,91.9 39.6,98.1 7.4,93.4"/><polygon points="192.6,86.3 230.3,90.4 157.2,96.4 120.5,91.9"/><polygon points="39.6,98.1 74.9,103.3 -18.7,111.0 -51.7,105.2"/><polygon points="157.2,96.4 197.4,101.4 113.7,108.9 74.9,103.3"/><polygon points="271.3,94.8 316.0,99.6 241.5,106.9 197.4,101.4"/><polygon points="381.9,93.2 430.9,97.9 365.0,104.9 316.0,99.6"/><polygon points="489.2,91.7 542.2,96.2 484.5,103.0 430.9,97.9"/><polygon points="593.4,90.2 650.1,94.6 600.1,101.2 542.2,96.2"/><polygon points="694.6,88.7 754.8,93.0 712.0,99.4 650.1,94.6"/><polygon points="600.1,101.2 663.6,106.7 608.4,114.9 543.4,108.7"/><polygon points="792.9,87.3 856.4,91.5 820.4,97.7 754.8,93.0"/><polygon points="712.0,99.4 779.7,104.7 733.5,112.7 663.6,106.7"/><polygon points="888.5,86.0 955.0,90.0 925.4,96.0 856.4,91.5"/><polygon points="820.4,97.7 892.1,102.8 854.3,110.5 779.7,104.7"/><polygon points="925.4,96.0 1000.8,101.0 970.9,108.4 892.1,102.8"/><polygon points="1027.2,94.4 1106.1,99.2 1083.5,106.4 1000.8,101.0"/><polygon points="1126.0,92.9 1208.0,97.5 1192.4,104.5 1106.1,99.2"/><polygon points="1221.9,91.3 1306.9,95.8 1297.7,102.6 1208.0,97.5"/><polygon points="1315.0,89.9 1402.7,94.2 1399.7,100.8 1306.9,95.8"/><polygon points="1405.4,88.4 1495.6,92.7 1498.3,99.0 1402.7,94.2"/><polygon points="1399.7,100.8 1501.4,106.2 1504.9,114.4 1396.2,108.2"/></g><g fill="#b2aaa7" fill-opacity="0.7"><polygon points="-18.7,111.0 17.9,117.5 -92.5,127.4 -125.8,119.9"/><polygon points="113.7,108.9 156.5,115.2 58.6,124.7 17.9,117.5"/><polygon points="241.5,106.9 290.1,112.9 204.0,122.1 156.5,115.2"/><polygon points="365.0,104.9 418.9,110.8 343.9,119.6 290.1,112.9"/><polygon points="484.5,103.0 543.4,108.7 478.6,117.2 418.9,110.8"/><polygon points="608.4,114.9 680.5,121.8 618.9,132.4 544.8,124.4"/><polygon points="733.5,112.7 811.0,119.3 760.9,129.5 680.5,121.8"/><polygon points="854.3,110.5 936.7,116.9 897.2,126.7 811.0,119.3"/><polygon points="970.9,108.4 1057.8,114.6 1028.2,124.1 936.7,116.9"/><polygon points="1083.5,106.4 1174.6,112.4 1154.2,121.5 1057.8,114.6"/><polygon points="1192.4,104.5 1287.4,110.3 1275.5,119.0 1174.6,112.4"/><polygon points="1297.7,102.6 1396.2,108.2 1392.3,116.6 1287.4,110.3"/></g><g fill="#b2aaa7" fill-opacity="0.8"><polygon points="58.6,124.7 104.1,132.8 -13.1,145.3 -55.2,135.8"/><polygon points="204.0,122.1 257.0,129.9 155.4,141.9 104.1,132.8"/><polygon points="343.9,119.6 403.8,127.1 316.6,138.6 257.0,129.9"/><polygon points="478.6,117.2 544.8,124.4 471.0,135.4 403.8,127.1"/><polygon points="897.2,126.7 993.9,135.0 953.4,148.0 851.2,138.2"/><polygon points="1028.2,124.1 1130.6,132.0 1102.9,144.4 993.9,135.0"/><polygon points="1154.2,121.5 1261.8,129.2 1245.8,141.0 1130.6,132.0"/><polygon points="1275.5,119.0 1387.8,126.4 1382.5,137.8 1261.8,129.2"/><polygon points="1392.3,116.6 1508.9,123.7 1513.5,134.7 1387.8,126.4"/></g><g fill="#b2aaa7" fill-opacity="0.9"><polygon points="316.6,138.6 384.0,148.4 280.0,163.9 213.5,152.1"/><polygon points="471.0,135.4 546.7,144.8 460.8,159.6 384.0,148.4"/><polygon points="618.9,132.4 702.3,141.4 632.9,155.6 546.7,144.8"/><polygon points="760.9,129.5 851.2,138.2 796.9,151.7 702.3,141.4"/><polygon points="1382.5,137.8 1519.0,147.5 1525.5,162.8 1376.3,151.2"/></g><g fill="#b2aaa7"><polygon points="-13.1,145.3 34.9,156.1 -110.4,173.2 -152.6,160.2"/><polygon points="155.4,141.9 213.5,152.1 89.9,168.4 34.9,156.1"/><polygon points="89.9,168.4 153.7,182.8 -3.2,206.2 -61.2,188.4"/><polygon points="280.0,163.9 356.9,177.5 228.6,199.6 153.7,182.8"/><polygon points="-3.2,206.2 66.3,227.6 -145.8,264.1 -203.2,236.1"/><polygon points="460.8,159.6 549.3,172.6 446.7,193.4 356.9,177.5"/><polygon points="228.6,199.6 317.7,219.7 150.8,253.7 66.3,227.6"/><polygon points="632.9,155.6 731.8,167.8 652.3,187.6 549.3,172.6"/><polygon points="446.7,193.4 553.0,212.3 425.6,243.9 317.7,219.7"/><polygon points="150.8,253.7 256.1,286.1 19.4,344.9 -73.8,299.4"/><polygon points="796.9,151.7 905.1,163.4 846.4,182.1 731.8,167.8"/><polygon points="652.3,187.6 773.6,205.3 680.9,234.9 553.0,212.3"/><polygon points="425.6,243.9 558.8,273.9 390.7,327.5 256.1,286.1"/><polygon points="19.4,344.9 144.6,406.1 -250.2,532.1 -334.1,432.7"/><polygon points="953.4,148.0 1069.9,159.1 1030.0,176.9 905.1,163.4"/><polygon points="846.4,182.1 980.8,198.8 918.6,226.5 773.6,205.3"/><polygon points="680.9,234.9 837.5,262.7 727.3,311.8 558.8,273.9"/><polygon points="390.7,327.5 568.9,382.4 321.7,492.6 144.6,406.1"/><polygon points="1102.9,144.4 1226.8,155.0 1203.9,171.9 1069.9,159.1"/><polygon points="1030.0,176.9 1175.9,192.7 1140.7,218.7 980.8,198.8"/><polygon points="918.6,226.5 1095.1,252.3 1034.0,297.5 837.5,262.7"/><polygon points="727.3,311.8 947.6,361.3 816.0,458.6 568.9,382.4"/><polygon points="1245.8,141.0 1376.3,151.2 1368.8,167.3 1226.8,155.0"/><polygon points="1203.9,171.9 1359.8,186.9 1348.4,211.3 1175.9,192.7"/><polygon points="1140.7,218.7 1333.9,242.7 1314.6,284.4 1095.1,252.3"/><polygon points="1034.0,297.5 1287.7,342.4 1247.6,428.8 947.6,361.3"/><polygon points="1368.8,167.3 1533.4,181.4 1543.3,204.4 1359.8,186.9"/><polygon points="1348.4,211.3 1555.7,233.8 1572.2,272.3 1333.9,242.7"/><polygon points="1314.6,284.4 1594.7,325.3 1627.7,402.6 1287.7,342.4"/></g><path d="M-94.5 171.3L-44.6 186.2M-12.5 181.9L47.7 198.6M-28.3 184.0L31.2 201.1M-44.6 186.2L14.2 203.6M-61.2 188.4L-3.2 206.2M79.7 193.8L152.5 212.8M63.9 196.2L136.1 215.6M47.7 198.6L119.3 218.5M31.2 201.1L102.1 221.4M184.0 207.3L272.3 228.9M168.5 210.0L256.4 232.2M152.5 212.8L240.0 235.5M317.7 219.7L425.6 243.9M303.0 222.7L410.8 247.6M287.9 225.8L395.7 251.4M272.3 228.9L380.0 255.3M221.9 275.5L-11.3 329.9M233.0 279.0L-1.4 334.7M244.4 282.5L8.9 339.7M-57.1 307.5L-382.0 376.1M-48.4 311.7L-376.7 382.4M-39.5 316.1L-371.2 388.9M-30.4 320.6L-365.5 395.6M-21.0 325.2L-359.7 402.5M467.5 233.5L599.3 261.0M639.9 227.7L515.6 264.2M453.9 236.9L586.2 265.1M653.3 230.0L529.7 267.4M439.9 240.4L572.7 269.4M666.9 232.5L544.1 270.6M425.6 243.9L558.8 273.9M449.9 249.4L280.3 293.5M462.5 252.2L292.9 297.4M475.4 255.1L305.7 301.4M488.5 258.1L319.0 305.5M501.9 261.1L332.6 309.6M256.1 286.1L19.4 344.9M268.0 289.8L30.2 350.2M990.5 172.6L938.1 193.5M1003.5 174.0L952.1 195.2M1016.6 175.4L966.3 197.0M897.5 188.4L828.4 213.3M910.8 190.1L842.7 215.4M924.4 191.8L857.4 217.6M938.1 193.5L872.2 219.7M786.9 207.3L695.1 237.4M800.5 209.3L709.6 240.0M814.3 211.3L724.4 242.6M828.4 213.3L739.6 245.3M680.9 234.9L558.8 273.9M624.3 253.0L787.0 285.2M612.0 256.9L775.8 290.2M599.3 261.0L764.3 295.3M586.2 265.1L752.4 300.6M1277.4 109.7L1264.9 118.3M1254.5 117.6L1239.3 127.6M1264.9 118.3L1250.5 128.4M1217.3 126.0L1198.0 137.3M1228.2 126.8L1209.7 138.2M1239.3 127.6L1221.6 139.1M1250.5 128.4L1233.6 140.1M1175.0 135.5L1150.5 148.5M1186.4 136.4L1162.8 149.6M1198.0 137.3L1175.2 150.6M1209.7 138.2L1187.8 151.7M1126.3 146.4L1095.2 161.5M1138.3 147.5L1108.1 162.8M1150.5 148.5L1121.2 164.0M1162.8 149.6L1134.5 165.3M1069.9 159.1L1030.0 176.9M1082.4 160.3L1043.6 178.3M1095.2 161.5L1057.3 179.8M1108.1 162.8L1071.3 181.4M1030.0 176.9L980.8 198.8M828.1 266.9L1026.7 302.9M818.3 271.3L1019.2 308.4M808.2 275.8L1011.4 314.2M797.7 280.4L1003.3 320.2M787.0 285.2L994.9 326.4M1406.6 70.1L1404.5 74.0M1397.1 73.7L1394.5 77.9M1404.5 74.0L1402.2 78.2M1386.8 77.5L1383.4 82.1M1394.5 77.9L1391.5 82.5M1402.2 78.2L1399.6 82.8M1375.5 81.8L1371.3 86.8M1383.4 82.1L1379.7 87.2M1391.5 82.5L1388.2 87.6M1354.7 86.0L1349.2 91.6M1363.0 86.4L1357.9 92.0M1371.3 86.8L1366.7 92.4M1379.7 87.2L1375.6 92.9M1340.5 91.1L1333.8 97.3M1349.2 91.6L1343.0 97.8M1357.9 92.0L1352.2 98.3M1366.7 92.4L1361.5 98.8M1324.8 96.8L1316.7 103.7M1333.8 97.3L1326.3 104.2M1343.0 97.8L1336.0 104.8M1307.2 103.1L1297.4 110.9M1316.7 103.7L1307.5 111.5M1326.3 104.2L1317.7 112.1M1287.4 110.3L1275.5 119.0M1297.4 110.9L1286.2 119.7M1307.5 111.5L1297.0 120.4M1275.5 119.0L1261.8 129.2M1047.9 287.2L1293.9 329.0M1041.1 292.3L1290.8 335.6M1034.0 297.5L1287.7 342.4M1026.7 302.9L1284.4 349.5M1444.0 58.7L1443.7 61.5M1450.2 58.9L1450.1 61.8M1456.4 59.1L1456.6 62.0M1462.7 59.3L1463.1 62.2M1430.9 61.1L1430.0 64.1M1437.2 61.3L1436.7 64.4M1443.7 61.5L1443.3 64.6M1450.1 61.8L1450.0 64.8M1456.6 62.0L1456.8 65.1M1463.1 62.2L1463.6 65.3M1469.7 62.4L1470.5 65.5M1476.3 62.6L1477.4 65.8M1423.4 63.9L1422.2 67.1M1430.0 64.1L1429.1 67.4M1436.7 64.4L1436.0 67.7M1443.3 64.6L1443.0 67.9M1450.0 64.8L1450.0 68.2M1456.8 65.1L1457.0 68.4M1463.6 65.3L1464.2 68.7M1470.5 65.5L1471.3 69.0M1477.4 65.8L1478.5 69.2M1415.4 66.9L1413.7 70.4M1422.2 67.1L1420.9 70.7M1429.1 67.4L1428.1 71.0M1436.0 67.7L1435.3 71.2M1443.0 67.9L1442.6 71.5M1450.0 68.2L1449.9 71.8M1457.0 68.4L1457.3 72.1M1464.2 68.7L1464.7 72.4M1471.3 69.0L1472.2 72.7M1478.5 69.2L1479.8 73.0M1413.7 70.4L1411.9 74.3M1420.9 70.7L1419.4 74.6M1428.1 71.0L1426.9 74.9M1435.3 71.2L1434.5 75.2M1479.8 73.0L1481.2 77.1M1411.9 74.3L1410.0 78.5M1419.4 74.6L1417.8 78.9M1304.9 305.1L1606.3 352.5M1302.3 310.8L1609.5 360.0M1299.6 316.6L1612.8 367.8M1296.8 322.7L1616.3 375.9M1293.9 329.0L1619.9 384.4" stroke="#8a8280" stroke-opacity="0.05" stroke-width="1.00" fill="none"/><path d="M-78.2 190.6L-21.0 208.9M-95.5 192.9L-39.2 211.6M-113.3 195.2L-57.9 214.4M-131.4 197.6L-77.1 217.3M14.2 203.6L84.4 224.5M-3.2 206.2L66.3 227.6M-21.0 208.9L47.6 230.8M-39.2 211.6L28.5 234.1M136.1 215.6L223.2 238.9M119.3 218.5L205.8 242.5M102.1 221.4L188.0 246.1M84.4 224.5L169.7 249.8M66.3 227.6L150.8 253.7M256.4 232.2L363.9 259.3M240.0 235.5L347.3 263.4M223.2 238.9L330.2 267.7M205.8 242.5L312.5 272.0M188.0 246.1L294.3 276.6M-11.3 329.9L-353.6 409.7M-1.4 334.7L-347.4 417.1M8.9 339.7L-340.9 424.8M410.8 247.6L544.4 278.5M395.7 251.4L529.5 283.2M380.0 255.3L514.2 288.1M363.9 259.3L498.3 293.2M347.3 263.4L481.9 298.4M515.6 264.2L346.5 313.9M529.7 267.4L360.8 318.3M544.1 270.6L375.5 322.9M280.3 293.5L41.4 355.7M292.9 297.4L52.9 361.3M305.7 301.4L64.8 367.1M319.0 305.5L77.0 373.1M332.6 309.6L89.7 379.2M346.5 313.9L102.7 385.6M19.4 344.9L-334.1 432.7M30.2 350.2L-327.1 441.0M952.1 195.2L887.4 222.0M966.3 197.0L902.9 224.2M842.7 215.4L755.0 248.1M857.4 217.6L770.8 250.9M872.2 219.7L787.0 253.7M887.4 222.0L803.5 256.6M902.9 224.2L820.3 259.6M695.1 237.4L573.8 277.3M709.6 240.0L589.2 280.7M724.4 242.6L605.0 284.3M739.6 245.3L621.2 287.9M755.0 248.1L637.8 291.7M770.8 250.9L654.8 295.5M572.7 269.4L740.1 306.1M558.8 273.9L727.3 311.8M558.8 273.9L390.7 327.5M544.4 278.5L714.1 317.7M573.8 277.3L406.2 332.3M529.5 283.2L700.4 323.8M589.2 280.7L422.2 337.3M1221.6 139.1L1200.6 152.8M1233.6 140.1L1213.6 153.9M1175.2 150.6L1147.9 166.6M1187.8 151.7L1161.6 167.9M1200.6 152.8L1175.5 169.2M1213.6 153.9L1189.6 170.6M1121.2 164.0L1085.5 182.9M1134.5 165.3L1100.0 184.5M1147.9 166.6L1114.7 186.0M1161.6 167.9L1129.6 187.7M1043.6 178.3L995.5 200.6M1057.3 179.8L1010.5 202.5M1071.3 181.4L1025.8 204.4M1085.5 182.9L1041.3 206.3M1100.0 184.5L1057.1 208.3M980.8 198.8L918.6 226.5M995.5 200.6L934.7 228.9M1010.5 202.5L951.1 231.3M775.8 290.2L986.1 332.9M764.3 295.3L977.1 339.6M752.4 300.6L967.6 346.5M740.1 306.1L957.8 353.8M1399.6 82.8L1396.8 88.0M1388.2 87.6L1384.5 93.3M1396.8 88.0L1393.6 93.8M1375.6 92.9L1370.9 99.3M1384.5 93.3L1380.4 99.8M1393.6 93.8L1390.0 100.3M1352.2 98.3L1345.8 105.3M1361.5 98.8L1355.7 105.9M1370.9 99.3L1365.7 106.5M1380.4 99.8L1375.8 107.0M1390.0 100.3L1385.9 107.6M1336.0 104.8L1328.1 112.7M1345.8 105.3L1338.5 113.4M1355.7 105.9L1349.0 114.0M1365.7 106.5L1359.7 114.7M1317.7 112.1L1307.9 121.2M1328.1 112.7L1318.9 121.9M1338.5 113.4L1330.1 122.6M1349.0 114.0L1341.4 123.4M1286.2 119.7L1273.2 130.0M1297.0 120.4L1284.8 130.8M1307.9 121.2L1296.5 131.6M1318.9 121.9L1308.4 132.5M1261.8 129.2L1245.8 141.0M1273.2 130.0L1258.1 142.0M1284.8 130.8L1270.5 142.9M1296.5 131.6L1283.2 143.9M1245.8 141.0L1226.8 155.0M1258.1 142.0L1240.1 156.2M1019.2 308.4L1281.0 356.8M1011.4 314.2L1277.4 364.5M1003.3 320.2L1273.7 372.5M994.9 326.4L1269.8 380.9M986.1 332.9L1265.8 389.6M1442.6 71.5L1442.2 75.5M1449.9 71.8L1449.8 75.8M1457.3 72.1L1457.6 76.1M1464.7 72.4L1465.4 76.4M1472.2 72.7L1473.2 76.8M1426.9 74.9L1425.7 79.2M1434.5 75.2L1433.7 79.5M1442.2 75.5L1441.7 79.9M1449.8 75.8L1449.8 80.2M1457.6 76.1L1457.9 80.6M1465.4 76.4L1466.1 80.9M1473.2 76.8L1474.4 81.3M1481.2 77.1L1482.7 81.6M1410.0 78.5L1407.8 83.2M1417.8 78.9L1416.0 83.6M1425.7 79.2L1424.3 84.0M1433.7 79.5L1432.7 84.3M1441.7 79.9L1441.2 84.7M1449.8 80.2L1449.7 85.1M1457.9 80.6L1458.2 85.5M1466.1 80.9L1466.9 85.9M1474.4 81.3L1475.6 86.2M1482.7 81.6L1484.4 86.6M1407.8 83.2L1405.4 88.4M1416.0 83.6L1414.1 88.8M1424.3 84.0L1422.8 89.2M1432.7 84.3L1431.7 89.7M1441.2 84.7L1440.6 90.1M1449.7 85.1L1449.6 90.5M1458.2 85.5L1458.6 90.9M1466.9 85.9L1467.8 91.4M1475.6 86.2L1477.0 91.8M1484.4 86.6L1486.3 92.2M1405.4 88.4L1402.7 94.2M1414.1 88.8L1411.9 94.7M1422.8 89.2L1421.1 95.2M1431.7 89.7L1430.5 95.6M1486.3 92.2L1488.4 98.5M1402.7 94.2L1399.7 100.8M1290.8 335.6L1623.7 393.3M1287.7 342.4L1627.7 402.6M1284.4 349.5L1631.8 412.3M1281.0 356.8L1636.2 422.5" stroke="#8a8280" stroke-opacity="0.10" stroke-width="1.00" fill="none"/><path d="M-150.0 200.1L-96.7 220.2M-169.1 202.6L-116.9 223.2M-57.9 214.4L8.8 237.5M-77.1 217.3L-11.4 241.0M-96.7 220.2L-32.2 244.6M47.6 230.8L131.4 257.6M28.5 234.1L111.3 261.7M8.8 237.5L90.7 265.9M169.7 249.8L275.5 281.2M150.8 253.7L256.1 286.1M330.2 267.7L465.0 303.8M312.5 272.0L447.4 309.4M294.3 276.6L429.2 315.3M360.8 318.3L116.2 392.2M375.5 322.9L130.1 399.0M41.4 355.7L-319.9 449.6M52.9 361.3L-312.4 458.5M64.8 367.1L-304.5 467.8M77.0 373.1L-296.4 477.4M787.0 253.7L672.2 299.4M803.5 256.6L690.1 303.4M820.3 259.6L708.5 307.6M514.2 288.1L686.1 330.2M605.0 284.3L438.7 342.3M498.3 293.2L671.3 336.8M621.2 287.9L455.6 347.6M481.9 298.4L655.9 343.6M637.8 291.7L473.1 352.9M390.7 327.5L144.6 406.1M1175.5 169.2L1144.8 189.3M1189.6 170.6L1160.2 191.0M1114.7 186.0L1073.2 210.3M1129.6 187.7L1089.6 212.3M1144.8 189.3L1106.3 214.4M1025.8 204.4L967.9 233.7M1041.3 206.3L984.9 236.2M1057.1 208.3L1002.4 238.7M918.6 226.5L837.5 262.7M934.7 228.9L855.2 265.8M951.1 231.3L873.2 269.0M727.3 311.8L947.6 361.3M714.1 317.7L936.9 369.2M700.4 323.8L925.8 377.4M1375.8 107.0L1370.4 115.3M1385.9 107.6L1381.3 116.0M1359.7 114.7L1352.8 124.1M1370.4 115.3L1364.3 124.9M1381.3 116.0L1376.0 125.6M1330.1 122.6L1320.4 133.3M1341.4 123.4L1332.5 134.2M1352.8 124.1L1344.8 135.1M1308.4 132.5L1296.0 144.9M1320.4 133.3L1308.9 145.9M1270.5 142.9L1253.6 157.4M1283.2 143.9L1267.3 158.5M1296.0 144.9L1281.2 159.7M1226.8 155.0L1203.9 171.9M1240.1 156.2L1218.4 173.3M1253.6 157.4L1233.2 174.7M1203.9 171.9L1175.9 192.7M977.1 339.6L1261.5 398.7M967.6 346.5L1257.1 408.3M957.8 353.8L1252.5 418.3M1440.6 90.1L1439.9 96.1M1449.6 90.5L1449.5 96.6M1458.6 90.9L1459.1 97.1M1467.8 91.4L1468.7 97.5M1477.0 91.8L1478.5 98.0M1411.9 94.7L1409.4 101.3M1421.1 95.2L1419.2 101.8M1430.5 95.6L1429.2 102.3M1439.9 96.1L1439.2 102.9M1449.5 96.6L1449.3 103.4M1459.1 97.1L1459.5 104.0M1468.7 97.5L1469.9 104.5M1478.5 98.0L1480.3 105.1M1488.4 98.5L1490.8 105.6M1399.7 100.8L1396.2 108.2M1409.4 101.3L1406.6 108.8M1419.2 101.8L1417.1 109.4M1429.2 102.3L1427.7 110.0M1480.3 105.1L1482.3 113.1M1490.8 105.6L1493.5 113.7M1396.2 108.2L1392.3 116.6M1406.6 108.8L1403.4 117.3M1277.4 364.5L1640.7 433.3M1273.7 372.5L1645.5 444.5M1269.8 380.9L1650.6 456.3" stroke="#8a8280" stroke-opacity="0.15" stroke-width="1.00" fill="none"/><path d="M-188.6 205.1L-137.6 226.3M-208.5 207.8L-158.9 229.5M-116.9 223.2L-53.6 248.3M-11.4 241.0L69.4 270.2M-32.2 244.6L47.4 274.7M131.4 257.6L236.0 291.1M111.3 261.7L215.2 296.2M275.5 281.2L410.3 321.3M256.1 286.1L390.7 327.5M89.7 379.2L-287.9 487.4M102.7 385.6L-279.1 497.9M465.0 303.8L639.9 350.8M654.8 295.5L491.1 358.5M447.4 309.4L623.2 358.2M672.2 299.4L509.6 364.2M406.2 332.3L159.5 413.4M422.2 337.3L174.9 420.9M1160.2 191.0L1123.3 216.5M1073.2 210.3L1020.1 241.3M1089.6 212.3L1038.3 244.0M967.9 233.7L891.7 272.3M984.9 236.2L910.6 275.6M837.5 262.7L727.3 311.8M855.2 265.8L746.7 316.2M686.1 330.2L914.2 386.0M671.3 336.8L902.1 395.0M1364.3 124.9L1357.2 136.0M1376.0 125.6L1369.8 136.9M1332.5 134.2L1322.0 147.0M1344.8 135.1L1335.3 148.0M1308.9 145.9L1295.3 160.9M1322.0 147.0L1309.6 162.2M1267.3 158.5L1248.1 176.2M1281.2 159.7L1263.3 177.6M1218.4 173.3L1191.8 194.4M1233.2 174.7L1208.0 196.1M1175.9 192.7L1140.7 218.7M947.6 361.3L1247.6 428.8M936.9 369.2L1242.5 439.8M1439.2 102.9L1438.4 110.6M1449.3 103.4L1449.2 111.2M1459.5 104.0L1460.1 111.8M1469.9 104.5L1471.1 112.4M1417.1 109.4L1414.6 118.0M1427.7 110.0L1426.0 118.7M1438.4 110.6L1437.4 119.4M1449.2 111.2L1449.0 120.1M1460.1 111.8L1460.7 120.8M1471.1 112.4L1472.6 121.5M1482.3 113.1L1484.5 122.3M1493.5 113.7L1496.6 123.0M1392.3 116.6L1387.8 126.4M1403.4 117.3L1399.7 127.2M1414.6 118.0L1411.8 128.0M1265.8 389.6L1655.9 468.8M1261.5 398.7L1661.5 482.0" stroke="#8a8280" stroke-opacity="0.20" stroke-width="1.00" fill="none"/><path d="M-229.0 210.5L-180.7 232.7M-137.6 226.3L-75.7 252.1M-158.9 229.5L-98.4 256.0M-180.7 232.7L-121.7 260.0M-53.6 248.3L24.8 279.3M-75.7 252.1L1.3 284.1M-98.4 256.0L-22.9 289.0M-121.7 260.0L-47.9 294.1M90.7 265.9L193.7 301.6M69.4 270.2L171.4 307.1M47.4 274.7L148.4 312.8M24.8 279.3L124.5 318.8M1.3 284.1L99.7 324.9M-22.9 289.0L73.9 331.3M-47.9 294.1L47.2 338.0M-73.8 299.4L19.4 344.9M-100.6 304.8L-9.5 352.1M-128.3 310.5L-39.7 359.6M-157.1 316.3L-71.0 367.4M-186.9 322.4L-103.8 375.5M-217.9 328.7L-137.9 384.0M-250.1 335.2L-173.7 392.9M-283.5 342.0L-211.0 402.1M-318.2 349.1L-250.1 411.9M-354.4 356.5L-291.1 422.1M236.0 291.1L370.3 334.0M215.2 296.2L349.1 340.8M193.7 301.6L327.1 347.8M171.4 307.1L304.3 355.1M148.4 312.8L280.4 362.7M124.5 318.8L255.5 370.7M99.7 324.9L229.6 378.9M73.9 331.3L202.5 387.6M47.2 338.0L174.2 396.6M19.4 344.9L144.6 406.1M-9.5 352.1L113.5 416.0M-39.7 359.6L81.0 426.4M-71.0 367.4L46.8 437.3M-103.8 375.5L10.9 448.7M-137.9 384.0L-26.9 460.8M-173.7 392.9L-66.8 473.5M-211.0 402.1L-108.8 486.9M-250.1 411.9L-153.3 501.1M116.2 392.2L-269.9 508.8M-291.1 422.1L-200.3 516.1M130.1 399.0L-260.2 520.2M429.2 315.3L605.9 365.9M690.1 303.4L528.8 370.1M410.3 321.3L587.8 374.0M708.5 307.6L548.5 376.2M390.7 327.5L568.9 382.4M370.3 334.0L549.1 391.2M349.1 340.8L528.5 400.4M327.1 347.8L506.9 410.1M438.7 342.3L191.0 428.8M304.3 355.1L484.2 420.2M455.6 347.6L207.6 436.9M280.4 362.7L460.5 430.8M473.1 352.9L224.8 445.3M255.5 370.7L435.5 441.9M491.1 358.5L242.7 454.0M229.6 378.9L409.2 453.6M509.6 364.2L261.3 463.1M202.5 387.6L381.6 465.9M528.8 370.1L280.6 472.6M174.2 396.6L352.4 478.9M548.5 376.2L300.7 482.4M1106.3 214.4L1056.8 246.7M1123.3 216.5L1075.8 249.5M1002.4 238.7L929.9 279.0M1020.1 241.3L949.7 282.5M1038.3 244.0L970.0 286.1M1056.8 246.7L990.8 289.8M1075.8 249.5L1012.2 293.6M873.2 269.0L766.6 320.6M891.7 272.3L787.0 325.2M910.6 275.6L808.0 329.9M929.9 279.0L829.6 334.8M949.7 282.5L851.8 339.8M970.0 286.1L874.7 345.0M990.8 289.8L898.3 350.3M1012.2 293.6L922.6 355.7M727.3 311.8L568.9 382.4M746.7 316.2L589.9 388.9M766.6 320.6L611.7 395.6M787.0 325.2L634.2 402.6M808.0 329.9L657.5 409.7M655.9 343.6L889.4 404.3M829.6 334.8L681.6 417.1M639.9 350.8L876.1 414.2M851.8 339.8L706.5 424.8M623.2 358.2L862.2 424.5M874.7 345.0L732.4 432.8M605.9 365.9L847.6 435.3M898.3 350.3L759.2 441.1M587.8 374.0L832.2 446.6M922.6 355.7L787.1 449.7M568.9 382.4L816.0 458.6M568.9 382.4L321.7 492.6M549.1 391.2L799.0 471.2M589.9 388.9L343.5 503.3M528.5 400.4L781.0 484.4M611.7 395.6L366.3 514.4M506.9 410.1L762.0 498.5M634.2 402.6L390.1 526.1M484.2 420.2L741.9 513.3M657.5 409.7L414.9 538.2M460.5 430.8L720.6 529.1M681.6 417.1L440.9 550.9M435.5 441.9L698.0 545.8M706.5 424.8L468.2 564.3M409.2 453.6L673.9 563.6M732.4 432.8L496.8 578.2M381.6 465.9L648.2 582.6M759.2 441.1L526.8 592.9M352.4 478.9L620.8 602.8M787.1 449.7L558.3 608.3M1357.2 136.0L1348.8 149.0M1369.8 136.9L1362.5 150.1M1335.3 148.0L1324.1 163.4M1348.8 149.0L1338.8 164.7M1362.5 150.1L1353.7 166.0M1295.3 160.9L1278.8 179.1M1309.6 162.2L1294.5 180.6M1324.1 163.4L1310.4 182.1M1338.8 164.7L1326.6 183.7M1353.7 166.0L1343.0 185.3M1248.1 176.2L1224.5 197.9M1263.3 177.6L1241.3 199.7M1278.8 179.1L1258.4 201.6M1294.5 180.6L1275.7 203.5M1310.4 182.1L1293.4 205.4M1326.6 183.7L1311.4 207.3M1343.0 185.3L1329.7 209.3M1191.8 194.4L1158.3 220.9M1208.0 196.1L1176.3 223.1M1224.5 197.9L1194.7 225.4M1241.3 199.7L1213.4 227.7M1258.4 201.6L1232.5 230.1M1275.7 203.5L1251.9 232.5M1293.4 205.4L1271.8 235.0M1311.4 207.3L1292.1 237.5M1329.7 209.3L1312.8 240.1M1140.7 218.7L1095.1 252.3M1158.3 220.9L1114.9 255.2M1176.3 223.1L1135.1 258.1M1194.7 225.4L1155.8 261.2M1213.4 227.7L1176.9 264.3M1232.5 230.1L1198.6 267.4M1251.9 232.5L1220.7 270.6M1271.8 235.0L1243.3 273.9M1292.1 237.5L1266.5 277.3M1312.8 240.1L1290.3 280.8M1095.1 252.3L1034.0 297.5M1114.9 255.2L1056.4 301.4M1135.1 258.1L1079.5 305.5M1155.8 261.2L1103.1 309.7M1176.9 264.3L1127.3 314.0M1198.6 267.4L1152.2 318.4M1220.7 270.6L1177.8 322.9M1243.3 273.9L1204.1 327.6M1266.5 277.3L1231.2 332.4M1290.3 280.8L1259.0 337.3M1034.0 297.5L947.6 361.3M1056.4 301.4L973.4 367.1M1079.5 305.5L1000.0 373.1M1103.1 309.7L1027.5 379.3M1127.3 314.0L1055.8 385.7M1152.2 318.4L1085.1 392.3M1177.8 322.9L1115.4 399.1M1204.1 327.6L1146.8 406.1M1231.2 332.4L1179.2 413.4M1259.0 337.3L1212.8 421.0M947.6 361.3L816.0 458.6M973.4 367.1L846.1 467.8M925.8 377.4L1237.1 451.4M1000.0 373.1L877.4 477.5M914.2 386.0L1231.5 463.6M1027.5 379.3L909.9 487.5M902.1 395.0L1225.5 476.5M1055.8 385.7L943.9 497.9M889.4 404.3L1219.2 490.1M1085.1 392.3L979.3 508.8M876.1 414.2L1212.6 504.4M1115.4 399.1L1016.2 520.2M862.2 424.5L1205.5 519.6M1146.8 406.1L1054.8 532.1M847.6 435.3L1198.0 535.8M1179.2 413.4L1095.1 544.5M832.2 446.6L1190.1 552.9M1212.8 421.0L1137.4 557.5M1426.0 118.7L1424.0 128.8M1437.4 119.4L1436.3 129.6M1449.0 120.1L1448.8 130.4M1460.7 120.8L1461.5 131.2M1472.6 121.5L1474.2 132.1M1484.5 122.3L1487.2 132.9M1496.6 123.0L1500.3 133.8M1387.8 126.4L1382.5 137.8M1399.7 127.2L1395.4 138.7M1411.8 128.0L1408.5 139.6M1424.0 128.8L1421.7 140.6M1436.3 129.6L1435.0 141.5M1448.8 130.4L1448.6 142.5M1461.5 131.2L1462.3 143.5M1474.2 132.1L1476.2 144.4M1487.2 132.9L1490.3 145.4M1500.3 133.8L1504.5 146.5M1382.5 137.8L1376.3 151.2M1395.4 138.7L1390.3 152.3M1408.5 139.6L1404.5 153.4M1421.7 140.6L1418.9 154.5M1435.0 141.5L1433.5 155.6M1448.6 142.5L1448.3 156.8M1462.3 143.5L1463.3 158.0M1476.2 144.4L1478.6 159.1M1490.3 145.4L1494.0 160.4M1504.5 146.5L1509.6 161.6M1376.3 151.2L1368.8 167.3M1390.3 152.3L1384.2 168.6M1404.5 153.4L1399.8 169.9M1418.9 154.5L1415.6 171.3M1433.5 155.6L1431.7 172.7M1448.3 156.8L1448.0 174.1M1463.3 158.0L1464.6 175.5M1478.6 159.1L1481.4 176.9M1494.0 160.4L1498.5 178.4M1509.6 161.6L1515.8 179.9M1368.8 167.3L1359.8 186.9M1384.2 168.6L1376.7 188.5M1399.8 169.9L1394.0 190.2M1415.6 171.3L1411.6 191.8M1431.7 172.7L1429.4 193.5M1448.0 174.1L1447.6 195.3M1464.6 175.5L1466.1 197.1M1481.4 176.9L1484.9 198.9M1498.5 178.4L1504.0 200.7M1515.8 179.9L1523.5 202.5M1359.8 186.9L1348.4 211.3M1376.7 188.5L1367.4 213.4M1394.0 190.2L1386.8 215.5M1411.6 191.8L1406.5 217.6M1429.4 193.5L1426.6 219.8M1447.6 195.3L1447.1 222.0M1466.1 197.1L1468.0 224.3M1484.9 198.9L1489.3 226.6M1504.0 200.7L1511.0 228.9M1523.5 202.5L1533.2 231.3M1348.4 211.3L1333.9 242.7M1367.4 213.4L1355.4 245.4M1386.8 215.5L1377.5 248.1M1406.5 217.6L1400.0 250.9M1426.6 219.8L1423.0 253.8M1447.1 222.0L1446.5 256.7M1468.0 224.3L1470.5 259.7M1489.3 226.6L1495.0 262.7M1511.0 228.9L1520.2 265.8M1533.2 231.3L1545.9 269.0M1333.9 242.7L1314.6 284.4M1355.4 245.4L1339.5 288.0M1377.5 248.1L1365.0 291.7M1400.0 250.9L1391.2 295.5M1423.0 253.8L1418.0 299.5M1446.5 256.7L1445.6 303.5M1470.5 259.7L1473.8 307.6M1495.0 262.7L1502.9 311.9M1520.2 265.8L1532.7 316.2M1545.9 269.0L1563.3 320.7M1314.6 284.4L1287.7 342.4M1339.5 288.0L1317.1 347.6M1365.0 291.7L1347.5 353.0M1391.2 295.5L1378.8 358.5M1418.0 299.5L1411.1 364.2M1445.6 303.5L1444.3 370.1M1473.8 307.6L1478.7 376.2M1502.9 311.9L1514.1 382.5M1532.7 316.2L1550.7 389.0M1563.3 320.7L1588.6 395.7M1287.7 342.4L1247.6 428.8M1317.1 347.6L1283.7 436.9M1347.5 353.0L1321.1 445.3M1378.8 358.5L1360.0 454.1M1411.1 364.2L1400.4 463.2M1444.3 370.1L1442.4 472.6M1478.7 376.2L1486.1 482.5M1514.1 382.5L1531.7 492.7M1257.1 408.3L1667.4 495.9M1550.7 389.0L1579.1 503.4M1252.5 418.3L1673.7 510.5M1588.6 395.7L1628.6 514.5" stroke="#8a8280" stroke-opacity="0.25" stroke-width="1.00" fill="none"/><path d="M17.9 117.5L58.6 124.7M58.6 124.7L104.1 132.8M104.1 132.8L155.4 141.9M316.6 138.6L384.0 148.4M384.0 148.4L460.8 159.6M153.7 182.8L-3.2 206.2M-3.2 206.2L-203.2 236.1M460.8 159.6L549.3 172.6M460.8 159.6L356.9 177.5M356.9 177.5L228.6 199.6M702.3 141.4L632.9 155.6M632.9 155.6L549.3 172.6M936.7 116.9L897.2 126.7M897.2 126.7L851.2 138.2M731.8 167.8L846.4 182.1M1143.8 87.2L1126.0 92.9M1126.0 92.9L1106.1 99.2M1106.1 99.2L1083.5 106.4M846.4 182.1L980.8 198.8M1287.3 62.2L1280.3 65.3M1280.3 65.3L1272.8 68.7M1272.8 68.7L1264.5 72.4M1264.5 72.4L1255.4 76.4M1255.4 76.4L1245.4 80.9M980.8 198.8L1140.7 218.7M1383.5 39.2L1381.6 40.6M1381.6 40.6L1379.5 42.2M1379.5 42.2L1377.3 43.8M1377.3 43.8L1375.0 45.5M1375.0 45.5L1372.5 47.3M1372.5 47.3L1369.9 49.3M1369.9 49.3L1367.1 51.4M1175.9 192.7L1348.4 211.3M1433.4 28.0L1433.0 28.9M1433.0 28.9L1432.6 29.8M1348.4 211.3L1555.7 233.8" stroke="#4e4947" stroke-opacity="0.05" stroke-width="1.00" fill="none"/><path d="M155.4 141.9L213.5 152.1M213.5 152.1L280.0 163.9M280.0 163.9L356.9 177.5M228.6 199.6L66.3 227.6M66.3 227.6L-145.8 264.1M549.3 172.6L652.3 187.6M549.3 172.6L446.7 193.4M446.7 193.4L317.7 219.7M851.2 138.2L796.9 151.7M796.9 151.7L731.8 167.8M652.3 187.6L773.6 205.3M1083.5 106.4L1057.8 114.6M1057.8 114.6L1028.2 124.1M1028.2 124.1L993.9 135.0M1245.4 80.9L1234.3 85.8M1234.3 85.8L1221.9 91.3M1221.9 91.3L1208.0 97.5M1367.1 51.4L1364.0 53.6M1364.0 53.6L1360.8 56.0M1360.8 56.0L1357.3 58.6M1357.3 58.6L1353.5 61.4M1140.7 218.7L1333.9 242.7M1432.6 29.8L1432.1 30.7M1432.1 30.7L1431.7 31.7M1431.7 31.7L1431.2 32.8M1431.2 32.8L1430.7 33.9M1430.7 33.9L1430.1 35.0M1430.1 35.0L1429.6 36.2M1429.6 36.2L1429.0 37.5" stroke="#4e4947" stroke-opacity="0.10" stroke-width="1.00" fill="none"/><path d="M-13.1 145.3L34.9 156.1M356.9 177.5L446.7 193.4M731.8 167.8L652.3 187.6M993.9 135.0L953.4 148.0M773.6 205.3L918.6 226.5M1208.0 97.5L1192.4 104.5M1192.4 104.5L1174.6 112.4M918.6 226.5L1095.1 252.3M1353.5 61.4L1349.3 64.5M1349.3 64.5L1344.9 67.8M1344.9 67.8L1340.0 71.4M1429.0 37.5L1428.4 38.8M1428.4 38.8L1427.7 40.3M1427.7 40.3L1427.0 41.8M1427.0 41.8L1426.3 43.4M1333.9 242.7L1572.2 272.3" stroke="#4e4947" stroke-opacity="0.15" stroke-width="1.00" fill="none"/><path d="M34.9 156.1L89.9 168.4M446.7 193.4L553.0 212.3M317.7 219.7L150.8 253.7M652.3 187.6L553.0 212.3M953.4 148.0L905.1 163.4M1174.6 112.4L1154.2 121.5M1340.0 71.4L1334.6 75.3M1334.6 75.3L1328.7 79.7M1426.3 43.4L1425.5 45.0M1425.5 45.0L1424.7 46.8" stroke="#4e4947" stroke-opacity="0.20" stroke-width="1.00" fill="none"/><path d="M89.9 168.4L153.7 182.8M553.0 212.3L680.9 234.9M905.1 163.4L846.4 182.1M1154.2 121.5L1130.6 132.0M1328.7 79.7L1322.2 84.5M1095.1 252.3L1314.6 284.4M1424.7 46.8L1423.8 48.8M1423.8 48.8L1422.8 50.8" stroke="#4e4947" stroke-opacity="0.25" stroke-width="1.00" fill="none"/><path d="M153.7 182.8L228.6 199.6M150.8 253.7L-73.8 299.4M553.0 212.3L425.6 243.9M1322.2 84.5L1315.0 89.9M1422.8 50.8L1421.8 53.0M1421.8 53.0L1420.7 55.4" stroke="#4e4947" stroke-opacity="0.30" stroke-width="1.00" fill="none"/><path d="M846.4 182.1L773.6 205.3M680.9 234.9L837.5 262.7M1130.6 132.0L1102.9 144.4M1315.0 89.9L1306.9 95.8M1420.7 55.4L1419.5 57.9M1314.6 284.4L1594.7 325.3" stroke="#4e4947" stroke-opacity="0.35" stroke-width="1.00" fill="none"/><path d="M228.6 199.6L317.7 219.7M1306.9 95.8L1297.7 102.6M1419.5 57.9L1418.2 60.7" stroke="#4e4947" stroke-opacity="0.40" stroke-width="1.00" fill="none"/><path d="M-73.8 299.4L-392.1 364.1M425.6 243.9L256.1 286.1M1102.9 144.4L1069.9 159.1M1418.2 60.7L1416.9 63.7" stroke="#4e4947" stroke-opacity="0.45" stroke-width="1.00" fill="none"/><path d="M773.6 205.3L680.9 234.9M837.5 262.7L1034.0 297.5M1297.7 102.6L1287.4 110.3M1416.9 63.7L1415.4 66.9" stroke="#4e4947" stroke-opacity="0.50" stroke-width="1.00" fill="none"/><path d="M317.7 219.7L425.6 243.9M1415.4 66.9L1413.7 70.4" stroke="#4e4947" stroke-opacity="0.55" stroke-width="1.00" fill="none"/><path d="M1069.9 159.1L1030.0 176.9M1287.4 110.3L1275.5 119.0" stroke="#4e4947" stroke-opacity="0.60" stroke-width="1.00" fill="none"/><path d="M1413.7 70.4L1411.9 74.3" stroke="#4e4947" stroke-opacity="0.65" stroke-width="1.00" fill="none"/><path d="M-61.2 188.4L-3.2 206.2M425.6 243.9L558.8 273.9M256.1 286.1L19.4 344.9M680.9 234.9L558.8 273.9M1030.0 176.9L980.8 198.8M1275.5 119.0L1261.8 129.2M1261.8 129.2L1245.8 141.0M1034.0 297.5L1287.7 342.4M1411.9 74.3L1410.0 78.5M1410.0 78.5L1407.8 83.2" stroke="#4e4947" stroke-opacity="0.70" stroke-width="1.00" fill="none"/><path d="M-3.2 206.2L66.3 227.6M66.3 227.6L150.8 253.7M19.4 344.9L-334.1 432.7M558.8 273.9L727.3 311.8M558.8 273.9L390.7 327.5M980.8 198.8L918.6 226.5M918.6 226.5L837.5 262.7M727.3 311.8L947.6 361.3M1245.8 141.0L1226.8 155.0M1226.8 155.0L1203.9 171.9M1407.8 83.2L1405.4 88.4M1405.4 88.4L1402.7 94.2M1402.7 94.2L1399.7 100.8M1399.7 100.8L1396.2 108.2M1287.7 342.4L1627.7 402.6" stroke="#4e4947" stroke-opacity="0.70" stroke-width="1.25" fill="none"/><path d="M150.8 253.7L256.1 286.1M256.1 286.1L390.7 327.5M390.7 327.5L144.6 406.1M837.5 262.7L727.3 311.8M1203.9 171.9L1175.9 192.7M947.6 361.3L1247.6 428.8M1396.2 108.2L1392.3 116.6M1392.3 116.6L1387.8 126.4" stroke="#4e4947" stroke-opacity="0.70" stroke-width="1.50" fill="none"/><path d="M390.7 327.5L568.9 382.4M727.3 311.8L568.9 382.4M1175.9 192.7L1140.7 218.7M1387.8 126.4L1382.5 137.8M1382.5 137.8L1376.3 151.2" stroke="#4e4947" stroke-opacity="0.70" stroke-width="1.75" fill="none"/><path d="M-73.8 299.4L19.4 344.9M19.4 344.9L144.6 406.1M568.9 382.4L816.0 458.6M568.9 382.4L321.7 492.6M1140.7 218.7L1095.1 252.3M1095.1 252.3L1034.0 297.5M1034.0 297.5L947.6 361.3M947.6 361.3L816.0 458.6M1376.3 151.2L1368.8 167.3M1368.8 167.3L1359.8 186.9M1359.8 186.9L1348.4 211.3M1348.4 211.3L1333.9 242.7M1333.9 242.7L1314.6 284.4M1314.6 284.4L1287.7 342.4M1287.7 342.4L1247.6 428.8" stroke="#4e4947" stroke-opacity="0.70" stroke-width="2.00" fill="none"/><path d="M1440.4 13.0L1440.2 13.3" stroke="#2e4a44" stroke-opacity="0.09" stroke-width="1.00" fill="none"/><path d="M1440.2 13.3L1440.1 13.6" stroke="#2e4a44" stroke-opacity="0.09" stroke-width="1.00" fill="none"/><path d="M1440.1 13.6L1439.9 13.9" stroke="#2e4a44" stroke-opacity="0.10" stroke-width="1.00" fill="none"/><path d="M1439.9 13.9L1439.7 14.3" stroke="#2e4a44" stroke-opacity="0.10" stroke-width="1.00" fill="none"/><path d="M1439.7 14.3L1439.6 14.7" stroke="#2e4a44" stroke-opacity="0.10" stroke-width="1.00" fill="none"/><path d="M1439.6 14.7L1439.4 15.0" stroke="#2e4a44" stroke-opacity="0.11" stroke-width="1.00" fill="none"/><path d="M1439.4 15.0L1439.2 15.4" stroke="#2e4a44" stroke-opacity="0.11" stroke-width="1.00" fill="none"/><path d="M1439.2 15.4L1439.0 15.8" stroke="#2e4a44" stroke-opacity="0.11" stroke-width="1.00" fill="none"/><path d="M1439.0 15.8L1438.9 16.2" stroke="#2e4a44" stroke-opacity="0.12" stroke-width="1.00" fill="none"/><path d="M1438.9 16.2L1438.7 16.6" stroke="#2e4a44" stroke-opacity="0.12" stroke-width="1.00" fill="none"/><path d="M1438.7 16.6L1438.5 17.1" stroke="#2e4a44" stroke-opacity="0.13" stroke-width="1.00" fill="none"/><path d="M1438.5 17.1L1438.3 17.5" stroke="#2e4a44" stroke-opacity="0.13" stroke-width="1.00" fill="none"/><path d="M1438.3 17.5L1438.0 18.0" stroke="#2e4a44" stroke-opacity="0.14" stroke-width="1.00" fill="none"/><path d="M1438.0 18.0L1437.8 18.4" stroke="#2e4a44" stroke-opacity="0.14" stroke-width="1.00" fill="none"/><path d="M1437.8 18.4L1437.6 18.9" stroke="#2e4a44" stroke-opacity="0.15" stroke-width="1.00" fill="none"/><path d="M1437.6 18.9L1437.4 19.4" stroke="#2e4a44" stroke-opacity="0.16" stroke-width="1.00" fill="none"/><path d="M1437.4 19.4L1437.1 20.0" stroke="#2e4a44" stroke-opacity="0.16" stroke-width="1.00" fill="none"/><path d="M1437.1 20.0L1436.9 20.5" stroke="#2e4a44" stroke-opacity="0.17" stroke-width="1.00" fill="none"/><path d="M1436.9 20.5L1436.6 21.1" stroke="#2e4a44" stroke-opacity="0.18" stroke-width="1.00" fill="none"/><path d="M1436.6 21.1L1436.3 21.6" stroke="#2e4a44" stroke-opacity="0.19" stroke-width="1.00" fill="none"/><path d="M1436.3 21.6L1436.1 22.2" stroke="#2e4a44" stroke-opacity="0.20" stroke-width="1.00" fill="none"/><path d="M1436.1 22.2L1435.8 22.9" stroke="#2e4a44" stroke-opacity="0.21" stroke-width="1.00" fill="none"/><path d="M1435.8 22.9L1435.5 23.5" stroke="#2e4a44" stroke-opacity="0.22" stroke-width="1.00" fill="none"/><path d="M1435.5 23.5L1435.2 24.2" stroke="#2e4a44" stroke-opacity="0.23" stroke-width="1.00" fill="none"/><path d="M1435.2 24.2L1434.8 24.9" stroke="#2e4a44" stroke-opacity="0.24" stroke-width="1.00" fill="none"/><path d="M1434.8 24.9L1434.5 25.6" stroke="#2e4a44" stroke-opacity="0.25" stroke-width="1.00" fill="none"/><path d="M1434.5 25.6L1434.1 26.4" stroke="#2e4a44" stroke-opacity="0.26" stroke-width="1.00" fill="none"/><path d="M1434.1 26.4L1433.8 27.2" stroke="#2e4a44" stroke-opacity="0.28" stroke-width="1.00" fill="none"/><path d="M1433.8 27.2L1433.4 28.0" stroke="#2e4a44" stroke-opacity="0.29" stroke-width="1.00" fill="none"/><path d="M1433.4 28.0L1433.0 28.9" stroke="#2e4a44" stroke-opacity="0.31" stroke-width="1.00" fill="none"/><path d="M1433.0 28.9L1432.6 29.8" stroke="#2e4a44" stroke-opacity="0.33" stroke-width="1.00" fill="none"/><path d="M1432.6 29.8L1432.1 30.7" stroke="#2e4a44" stroke-opacity="0.34" stroke-width="1.00" fill="none"/><path d="M1432.1 30.7L1431.7 31.7" stroke="#2e4a44" stroke-opacity="0.36" stroke-width="1.00" fill="none"/><path d="M1431.7 31.7L1431.2 32.8" stroke="#2e4a44" stroke-opacity="0.39" stroke-width="1.00" fill="none"/><path d="M1431.2 32.8L1430.7 33.9" stroke="#2e4a44" stroke-opacity="0.41" stroke-width="1.00" fill="none"/><path d="M1430.7 33.9L1430.1 35.0" stroke="#2e4a44" stroke-opacity="0.44" stroke-width="1.00" fill="none"/><path d="M1430.1 35.0L1429.6 36.2" stroke="#2e4a44" stroke-opacity="0.47" stroke-width="1.00" fill="none"/><path d="M1429.6 36.2L1429.0 37.5" stroke="#2e4a44" stroke-opacity="0.50" stroke-width="1.00" fill="none"/><path d="M1429.0 37.5L1428.4 38.8" stroke="#2e4a44" stroke-opacity="0.53" stroke-width="1.00" fill="none"/><path d="M1428.4 38.8L1427.7 40.3" stroke="#2e4a44" stroke-opacity="0.57" stroke-width="1.00" fill="none"/><path d="M1427.7 40.3L1427.0 41.8" stroke="#2e4a44" stroke-opacity="0.61" stroke-width="1.00" fill="none"/><path d="M1427.0 41.8L1426.3 43.4" stroke="#2e4a44" stroke-opacity="0.66" stroke-width="1.00" fill="none"/><path d="M1426.3 43.4L1425.5 45.0" stroke="#2e4a44" stroke-opacity="0.71" stroke-width="1.00" fill="none"/><path d="M1425.5 45.0L1424.7 46.8" stroke="#2e4a44" stroke-opacity="0.77" stroke-width="1.00" fill="none"/><path d="M1424.7 46.8L1423.8 48.8" stroke="#2e4a44" stroke-opacity="0.83" stroke-width="1.00" fill="none"/><path d="M1423.8 48.8L1422.8 50.8" stroke="#2e4a44" stroke-opacity="0.91" stroke-width="1.00" fill="none"/><path d="M1422.8 50.8L1421.8 53.0" stroke="#2e4a44" stroke-opacity="0.95" stroke-width="1.02" fill="none"/><path d="M1421.8 53.0L1420.7 55.4" stroke="#2e4a44" stroke-opacity="0.95" stroke-width="1.05" fill="none"/><path d="M1420.7 55.4L1419.5 57.9" stroke="#2e4a44" stroke-opacity="0.95" stroke-width="1.09" fill="none"/><path d="M1419.5 57.9L1418.2 60.7" stroke="#2e4a44" stroke-opacity="0.95" stroke-width="1.13" fill="none"/><path d="M1418.2 60.7L1416.9 63.7" stroke="#2e4a44" stroke-opacity="0.95" stroke-width="1.18" fill="none"/><path d="M1416.9 63.7L1415.4 66.9" stroke="#2e4a44" stroke-opacity="0.95" stroke-width="1.23" fill="none"/><path d="M1415.4 66.9L1413.7 70.4" stroke="#2e4a44" stroke-opacity="0.95" stroke-width="1.29" fill="none"/><path d="M1413.7 70.4L1411.9 74.3" stroke="#2e4a44" stroke-opacity="0.95" stroke-width="1.34" fill="none"/><path d="M1411.9 74.3L1410.0 78.5" stroke="#2e4a44" stroke-opacity="0.95" stroke-width="1.41" fill="none"/><path d="M1410.0 78.5L1407.8 83.2" stroke="#2e4a44" stroke-opacity="0.95" stroke-width="1.48" fill="none"/><path d="M1407.8 83.2L1405.4 88.4" stroke="#2e4a44" stroke-opacity="0.95" stroke-width="1.56" fill="none"/><path d="M1405.4 88.4L1402.7 94.2" stroke="#2e4a44" stroke-opacity="0.95" stroke-width="1.65" fill="none"/><path d="M1402.7 94.2L1399.7 100.8" stroke="#2e4a44" stroke-opacity="0.95" stroke-width="1.75" fill="none"/><path d="M1399.7 100.8L1396.2 108.2" stroke="#2e4a44" stroke-opacity="0.95" stroke-width="1.86" fill="none"/><path d="M1396.2 108.2L1392.3 116.6" stroke="#2e4a44" stroke-opacity="0.95" stroke-width="1.99" fill="none"/><path d="M1392.3 116.6L1387.8 126.4" stroke="#2e4a44" stroke-opacity="0.95" stroke-width="2.14" fill="none"/><path d="M1387.8 126.4L1382.5 137.8" stroke="#2e4a44" stroke-opacity="0.95" stroke-width="2.31" fill="none"/><path d="M1382.5 137.8L1376.3 151.2" stroke="#2e4a44" stroke-opacity="0.95" stroke-width="2.51" fill="none"/><path d="M1376.3 151.2L1368.8 167.3" stroke="#2e4a44" stroke-opacity="0.95" stroke-width="2.60" fill="none"/><path d="M1368.8 167.3L1359.8 186.9" stroke="#2e4a44" stroke-opacity="0.95" stroke-width="2.60" fill="none"/><path d="M1359.8 186.9L1348.4 211.3" stroke="#2e4a44" stroke-opacity="0.95" stroke-width="2.60" fill="none"/><path d="M1348.4 211.3L1333.9 242.7" stroke="#2e4a44" stroke-opacity="0.95" stroke-width="2.60" fill="none"/><path d="M1333.9 242.7L1314.6 284.4" stroke="#2e4a44" stroke-opacity="0.95" stroke-width="2.60" fill="none"/><path d="M1314.6 284.4L1287.7 342.4" stroke="#2e4a44" stroke-opacity="0.95" stroke-width="2.60" fill="none"/><path d="M1287.7 342.4L1247.6 428.8" stroke="#2e4a44" stroke-opacity="0.95" stroke-width="2.60" fill="none"/><path d="M1247.6 428.8L1181.6 571.2" stroke="#2e4a44" stroke-opacity="0.95" stroke-width="2.60" fill="none"/><path d="M1181.6 571.2L1052.5 849.8" stroke="#2e4a44" stroke-opacity="0.95" stroke-width="2.60" fill="none"/><rect width="1433" height="380" fill="url(#fog)"/></g><path d="M0.0 12.8L276.7 8.3L1433.0 30.8" fill="none" stroke="#d8d8dc" stroke-opacity="0.5" stroke-width="2"/></svg>
<div class="a" style="left:0.0px;top:380.0px;width:1433.0px;height:53.0px;background:#151515;"></div>
<div class="t" style="left:-21.0px;top:397.94px;font-size:23.0px;color:#d6d6d6;transform:scaleY(1.050);transform-origin:0 84.6%;">Output Log</div>
<div class="a" style="left:0.0px;top:433.0px;width:1433.0px;height:59.0px;background:#232323;"></div>
<div class="t" style="left:-17.0px;top:450.34px;font-size:23.0px;color:#e2e2e2;transform:scaleY(1.050);transform-origin:0 84.6%;">Save All</div>
<svg class="a" style="left:90px;top:445px" width="120" height="36" viewBox="90 445 120 36"><circle cx="108.2" cy="462.8" r="11.6" fill="none" stroke="#d2d2d2" stroke-width="2.4"/><path d="M114.5 462.8H103M107.5 457.8L102.5 462.8L107.5 467.8" fill="none" stroke="#d2d2d2" stroke-width="2.4" stroke-linecap="round" stroke-linejoin="round"/><circle cx="149" cy="462.8" r="11.6" fill="none" stroke="#7a7a7a" stroke-width="2.4"/><path d="M142.7 462.8H154.2M149.7 457.8L154.7 462.8L149.7 467.8" fill="none" stroke="#7a7a7a" stroke-width="2.4" stroke-linecap="round" stroke-linejoin="round"/><path d="M176 454.5Q176 452.5 178 452.5H184.5L187 455.5H201.5Q203.2 455.5 203.2 457.5V471.3Q203.2 473.2 201.5 473.2H177.8Q176 473.2 176 471.3Z" fill="#cfcfcf"/><path d="M176 456.5H187.5" stroke="#232323" stroke-width="1.2"/></svg>
<div class="t" style="left:218.0px;top:450.34px;font-size:23.0px;color:#e2e2e2;transform:scaleY(1.050);transform-origin:0 84.6%;">All</div>
<div class="a" style="left:0.0px;top:492.0px;width:1433.0px;height:4.0px;background:#141414;"></div>
<div class="a" style="left:0.0px;top:496.0px;width:1433.0px;height:504.0px;background:#252525;"></div>
<div class="a" style="left:0.0px;top:496.0px;width:3.5px;height:504.0px;background:#151515;"></div>
<svg class="a" style="left:20px;top:505px" width="220" height="45" viewBox="20 505 220 45"><path d="M25.5 516.8H47.5M29.5 525.4H43M33 534H39.5" stroke="#d0d0d0" stroke-width="3.2" stroke-linecap="round"/><path d="M60.5 521.5L67 528L73.5 521.5" fill="none" stroke="#d0d0d0" stroke-width="2.4" stroke-linecap="round" stroke-linejoin="round"/><rect x="94.5" y="506.5" width="200" height="37" rx="18.5" fill="#0f0f0f" stroke="#363636" stroke-width="1.5"/><circle cx="111.3" cy="523.3" r="8.8" fill="none" stroke="#d8d8d8" stroke-width="2.4"/><path d="M117.8 529.8L124.5 536.2" stroke="#d8d8d8" stroke-width="2.6" stroke-linecap="round"/></svg>
<div class="t" style="left:140.0px;top:512.17px;font-size:22.5px;color:#6c6c6c;transform:scaleY(1.045);transform-origin:0 84.6%;">Search CR</div>
<div class="a" style="left:17.5px;top:555px;width:240px;height:419px;border-radius:6px;overflow:hidden;box-shadow:0 2px 3px rgba(0,0,0,0.5)"><div class="a" style="left:0;top:0;width:240px;height:262px;background:#1b1b1b;border:2px solid #1d5aa3;border-bottom:none;border-radius:6px 6px 0 0"></div><div class="a" style="left:0;top:260px;width:240px;height:4px;background:#e0843a"></div><div class="a" style="left:0;top:264px;width:240px;height:155px;background:#0070e0"></div></div>
<div class="t" style="left:24.0px;top:828.35px;font-size:21.1px;color:#f2f6fc;">LocalizedVoice</div>
<div class="t" style="left:24.0px;top:947.38px;font-size:16.1px;color:#e8eef8;">Atom Cue Sheet</div>
<svg class="a" style="left:90px;top:635px" width="120" height="110" viewBox="90 635 120 110"><defs><radialGradient id="face" cx="0.45" cy="0.5" r="0.6"><stop offset="0" stop-color="#9a9a9a"/><stop offset="0.7" stop-color="#8a8a8a"/><stop offset="1" stop-color="#6a6a6a"/></radialGradient><linearGradient id="cyl" x1="0" y1="0" x2="1" y2="0"><stop offset="0" stop-color="#707070"/><stop offset="0.35" stop-color="#b4b4b4"/><stop offset="1" stop-color="#6c6c6c"/></linearGradient><radialGradient id="shd" cx="0.5" cy="0.5" r="0.5"><stop offset="0" stop-color="#000" stop-opacity="0.9"/><stop offset="1" stop-color="#000" stop-opacity="0"/></radialGradient><linearGradient id="wl" x1="0" y1="0" x2="1" y2="0"><stop offset="0" stop-color="#bdbdbd"/><stop offset="1" stop-color="#ffffff"/></linearGradient></defs><ellipse cx="128" cy="734" rx="34" ry="4.5" fill="url(#shd)"/><ellipse cx="110" cy="684.3" rx="8.5" ry="15" fill="url(#cyl)"/><ellipse cx="128.2" cy="683" rx="14.6" ry="41" fill="url(#face)"/><path d="M119 655Q122 644 128.2 642" fill="none" stroke="#bcbcbc" stroke-width="1.4" opacity="0.7"/><circle cx="127" cy="650" r="1.1" fill="#d0d0d0"/><circle cx="124" cy="708" r="1.1" fill="#c0c0c0"/><circle cx="139" cy="665" r="0.9" fill="#c0c0c0"/><ellipse cx="128.7" cy="684" rx="4.6" ry="10" fill="#b2b2b2"/><path d="M132 684.5H161" stroke="#dcdcdc" stroke-width="1.6"/><path d="M160 684.5L162.5 679L164.5 690L166.8 660L169 697L171.5 651.5L173.8 714L176 662L178.2 715.5L180.5 664L182.6 700L184.8 664L187 703L189.2 672L191.4 697L193.5 680L195.5 692L197.5 682.5L201.5 683.5" fill="none" stroke="#f8f8f8" stroke-width="2.2" stroke-linejoin="round"/></svg>
<svg class="a" style="left:200px;top:740px" width="40" height="70" viewBox="200 740 40 70"><path d="M203 755.5L240 742.8V806.2L203 793Z" fill="#e4023c"/><text x="210" y="785.5" font-family="Liberation Sans" font-size="29" fill="#fff4f6">AD</text></svg>
<div class="a" style="left:238.5px;top:15.0px;width:483.0px;height:966.0px;background:#383838;border:1px solid #454545"></div>
<div class="a" style="left:258.6px;top:40.86px;width:442.9px;height:16.0px;display:flex;align-items:flex-start"><span style="font-size:16.0px;line-height:1;font-weight:bold;color:#6e6e6e;letter-spacing:2.05px;margin-right:22.45px;white-space:nowrap;will-change:transform">IMPORTED ASSET</span><div style="flex:1;height:2px;background:#5c5c5c;margin-top:6.94px"></div></div>
<div class="a" style="left:283.0px;top:73.0px;width:26px;height:26px"><svg width="28" height="28" viewBox="0 0 28 28" style="overflow:visible"><path d="M6.5 11.5H2.2V23.8H23.8V11.5H19.5" fill="none" stroke="#8e8e8e" stroke-width="2.4" stroke-linejoin="round" stroke-linecap="round"/><path d="M6.5 3.2C11 3.5 14 6 13.8 15.5" fill="none" stroke="#c6c6c6" stroke-width="2.6"/><path d="M8.8 15L13.8 21L18.8 15Z" fill="#c6c6c6"/></svg></div>
<div class="t it" style="left:323.3px;top:75.21px;font-size:22.8px;color:#ffffff;letter-spacing:0.100px;transform:scaleY(1.070);transform-origin:0 84.6%;">Reimport</div>
<div class="a" style="left:283.0px;top:110.2px;width:26px;height:26px"><svg width="28" height="28" viewBox="0 0 28 28" style="overflow:visible"><path d="M6.5 11.5H2.2V23.8H23.8V11.5H19.5" fill="none" stroke="#8e8e8e" stroke-width="2.4" stroke-linejoin="round" stroke-linecap="round"/><path d="M6.5 3.2C11 3.5 14 6 13.8 15.5" fill="none" stroke="#c6c6c6" stroke-width="2.6"/><path d="M8.8 15L13.8 21L18.8 15Z" fill="#c6c6c6"/></svg></div>
<div class="t it" style="left:323.3px;top:112.41px;font-size:22.8px;color:#ffffff;letter-spacing:-0.057px;transform:scaleY(1.070);transform-origin:0 84.6%;">Reimport With New File</div>
<div class="a" style="left:283.0px;top:147.4px;width:26px;height:26px"><svg width="28" height="28" viewBox="0 0 28 28" style="overflow:visible"><path d="M1 1.6H10.5L13 6.1H23.3V22.1H1Z" fill="#8e8e8e"/><path d="M2.5 25L14.5 13" stroke="#383838" stroke-width="6"/><path d="M8 12.2H16V20.2Z" fill="#383838"/><path d="M3 24.3L13.5 13.8" stroke="#c6c6c6" stroke-width="2.6"/><path d="M8.2 12.8H15V19.6Z" fill="#c6c6c6"/></svg></div>
<div class="t it" style="left:323.3px;top:149.61px;font-size:22.8px;color:#ffffff;letter-spacing:-0.126px;transform:scaleY(1.070);transform-origin:0 84.6%;">Open Source Location</div>
<div class="a" style="left:283.0px;top:184.6px;width:26px;height:26px"><svg width="28" height="28" viewBox="0 0 28 28" style="overflow:visible"><rect x="2" y="2.5" width="21.7" height="20" fill="none" stroke="#8e8e8e" stroke-width="2"/><rect x="1" y="1.5" width="23.7" height="6" fill="#8e8e8e"/><path d="M3.5 24.4L15.5 12.9" stroke="#c6c6c6" stroke-width="2.8"/><path d="M9.5 10.9H17.5V18.9Z" fill="#c6c6c6"/></svg></div>
<div class="t it" style="left:323.3px;top:186.81px;font-size:22.8px;color:#ffffff;letter-spacing:-0.255px;transform:scaleY(1.070);transform-origin:0 84.6%;">Open In External Editor</div>
<div class="a" style="left:258.6px;top:228.46px;width:442.9px;height:16.0px;display:flex;align-items:flex-start"><span style="font-size:16.0px;line-height:1;font-weight:bold;color:#6e6e6e;letter-spacing:2.61px;margin-right:21.89px;white-space:nowrap;will-change:transform">COMMON</span><div style="flex:1;height:2px;background:#5c5c5c;margin-top:6.94px"></div></div>
<div class="a" style="left:283.0px;top:260.6px;width:26px;height:26px"><svg width="28" height="28" viewBox="0 0 28 28" style="overflow:visible"><path d="M8.2 17.2L20.2 7.3" stroke="#c6c6c6" stroke-width="5.2" stroke-linecap="round"/><path d="M3.9 21.6L5.8 16L9.6 20.3Z" fill="#c6c6c6"/><path d="M10.5 23.1H23" stroke="#8e8e8e" stroke-width="1.5"/></svg></div>
<div class="t it" style="left:323.3px;top:262.81px;font-size:22.8px;color:#ffffff;letter-spacing:-0.083px;transform:scaleY(1.070);transform-origin:0 84.6%;">Edit...</div>
<div class="a" style="left:283.0px;top:297.8px;width:26px;height:26px"><svg width="28" height="28" viewBox="0 0 28 28" style="overflow:visible"><path d="M11.5 8.4H2V17.6H11.5M20 8.4H24V17.6H20" fill="none" stroke="#c6c6c6" stroke-width="2"/><rect x="3.5" y="9.9" width="5.5" height="6" fill="#8e8e8e"/><path d="M10 2.8H22M10 23.6H22M16 2.8V23.6" stroke="#c6c6c6" stroke-width="2.2"/></svg></div>
<div class="t it" style="left:323.3px;top:300.01px;font-size:22.8px;color:#ffffff;letter-spacing:-0.340px;transform:scaleY(1.070);transform-origin:0 84.6%;">Rename</div>
<div class="t" style="right:726.2px;top:304.92px;font-size:17.0px;color:#c2c2c2">F2</div>
<div class="a" style="left:283.0px;top:335.0px;width:26px;height:26px"><svg width="28" height="28" viewBox="0 0 28 28" style="overflow:visible"><rect x="1" y="1.6" width="15" height="15.8" fill="#c6c6c6"/><rect x="9.4" y="9.3" width="16.2" height="16.9" fill="#c6c6c6" stroke="#383838" stroke-width="1.2"/><path d="M17.5 13.7V21.7M13.5 17.7H21.5" stroke="#383838" stroke-width="2.6"/></svg></div>
<div class="t it" style="left:323.3px;top:337.21px;font-size:22.8px;color:#ffffff;letter-spacing:0.288px;transform:scaleY(1.070);transform-origin:0 84.6%;">Duplicate</div>
<div class="t" style="right:726.2px;top:342.12px;font-size:17.0px;color:#c2c2c2">CTRL+D</div>
<div class="a" style="left:283.0px;top:372.2px;width:26px;height:26px"><svg width="28" height="28" viewBox="0 0 28 28" style="overflow:visible"><path d="M2.5 2.7H20L23.5 6.2V24.4H2.5Z" fill="#8e8e8e"/><rect x="5.5" y="2.7" width="13.5" height="8.1" fill="#c6c6c6"/><rect x="14.8" y="4" width="2.2" height="5.2" fill="#383838"/><rect x="5" y="16.3" width="15.5" height="7.5" fill="#c6c6c6"/></svg></div>
<div class="t it" style="left:323.3px;top:374.41px;font-size:22.8px;color:#ffffff;letter-spacing:-0.233px;transform:scaleY(1.070);transform-origin:0 84.6%;">Save</div>
<div class="t" style="right:726.2px;top:379.32px;font-size:17.0px;color:#c2c2c2">CTRL+S</div>
<div class="a" style="left:283.0px;top:409.4px;width:26px;height:26px"><svg width="28" height="28" viewBox="0 0 28 28" style="overflow:visible"><path d="M1.3 6.2H23.1" stroke="#8e8e8e" stroke-width="2.4"/><path d="M8.5 5.5V3.2H15.9V5.5" fill="none" stroke="#8e8e8e" stroke-width="1.8"/><path d="M4 9.1H20.2L19.4 24.9H4.8Z" fill="#8e8e8e"/><path d="M8.3 11.8V22.2M12.1 11.8V22.2M15.9 11.8V22.2" stroke="#383838" stroke-width="1.7"/></svg></div>
<div class="t it" style="left:323.3px;top:411.61px;font-size:22.8px;color:#ffffff;letter-spacing:-0.240px;transform:scaleY(1.070);transform-origin:0 84.6%;">Delete</div>
<div class="t" style="right:726.2px;top:416.52px;font-size:17.0px;color:#c2c2c2">DELETE</div>
<div class="a" style="left:283.0px;top:446.6px;width:26px;height:26px"><svg width="28" height="28" viewBox="0 0 28 28" style="overflow:visible"><path d="M3.2 23.4L14.8 11.8" stroke="#8e8e8e" stroke-width="3.4" stroke-linecap="round"/><circle cx="3.4" cy="23.2" r="1" fill="#383838"/><path d="M13.4 12.2A6.2 6.2 0 0 1 21 2.2L17.6 5.6L19.2 8.9L22.5 9.7L25.4 6.8A6.2 6.2 0 0 1 16.4 14.8Z" fill="#8e8e8e"/></svg></div>
<div class="t it" style="left:323.3px;top:448.81px;font-size:22.8px;color:#ffffff;letter-spacing:0.317px;transform:scaleY(1.070);transform-origin:0 84.6%;">Asset Actions</div>
<svg class="a" style="left:693.0px;top:450.0px" width="14" height="20" viewBox="0 0 14 20"><path d="M3.5 3.2L10 10L3.5 16.8" fill="none" stroke="#c4c4c4" stroke-width="3" stroke-linecap="round" stroke-linejoin="round"/></svg>
<div class="a" style="left:239.0px;top:478.5px;width:482.0px;height:37.5px;background:#0070e0;"></div>
<div class="a" style="left:283.0px;top:483.8px;width:26px;height:26px"><svg width="28" height="28" viewBox="0 0 28 28" style="overflow:visible"><path d="M4 -1.5V25.8" stroke="#78bbf8" stroke-width="2"/><path d="M6 4C10 2 14 6.5 18 5L23.6 3.3V18.6C19 20.5 14.5 16 10 17.5L6 19.1Z" fill="#78b4ee"/></svg></div>
<div class="t it" style="left:323.3px;top:486.01px;font-size:22.8px;color:#eef6ff;letter-spacing:0.359px;transform:scaleY(1.070);transform-origin:0 84.6%;">Asset Localization</div>
<svg class="a" style="left:693.0px;top:487.2px" width="14" height="20" viewBox="0 0 14 20"><path d="M3.5 3.2L10 10L3.5 16.8" fill="none" stroke="#d4dcea" stroke-width="3" stroke-linecap="round" stroke-linejoin="round"/></svg>
<div class="a" style="left:258.6px;top:527.66px;width:442.9px;height:16.0px;display:flex;align-items:flex-start"><span style="font-size:16.0px;line-height:1;font-weight:bold;color:#6e6e6e;letter-spacing:1.62px;margin-right:22.88px;white-space:nowrap;will-change:transform">EXPLORE</span><div style="flex:1;height:2px;background:#5c5c5c;margin-top:6.94px"></div></div>
<div class="a" style="left:283.0px;top:559.8px;width:26px;height:26px"><svg width="28" height="28" viewBox="0 0 28 28" style="overflow:visible"><path d="M1 2H10.5L13 6H1Z" fill="#8e8e8e"/><path d="M1 7.5H23V15A6.8 6.8 0 0 0 13.5 23H1Z" fill="#c6c6c6"/><circle cx="18.6" cy="16.8" r="5.1" fill="#383838" stroke="#c6c6c6" stroke-width="2.1"/><path d="M14.6 21L10.8 25.4" stroke="#c6c6c6" stroke-width="2.5"/></svg></div>
<div class="t it" style="left:323.3px;top:562.01px;font-size:22.8px;color:#ffffff;letter-spacing:-0.094px;transform:scaleY(1.070);transform-origin:0 84.6%;">Show in Folder View</div>
<div class="t" style="right:726.2px;top:566.92px;font-size:17.0px;color:#c2c2c2">CTRL+B</div>
<div class="a" style="left:283.0px;top:597.0px;width:26px;height:26px"><svg width="28" height="28" viewBox="0 0 28 28" style="overflow:visible"><path d="M1 2H10.5L13 6H1Z" fill="#8e8e8e"/><path d="M1 7.5H23V15A6.8 6.8 0 0 0 13.5 23H1Z" fill="#8e8e8e"/><circle cx="18.6" cy="16.8" r="5.1" fill="#383838" stroke="#c6c6c6" stroke-width="2.1"/><path d="M14.6 21L10.8 25.4" stroke="#c6c6c6" stroke-width="2.5"/></svg></div>
<div class="t it" style="left:323.3px;top:599.21px;font-size:22.8px;color:#ffffff;letter-spacing:-0.200px;transform:scaleY(1.070);transform-origin:0 84.6%;">Show in Explorer</div>
<div class="a" style="left:258.6px;top:640.86px;width:442.9px;height:16.0px;display:flex;align-items:flex-start"><span style="font-size:16.0px;line-height:1;font-weight:bold;color:#6e6e6e;letter-spacing:1.50px;margin-right:23.00px;white-space:nowrap;will-change:transform">REFERENCES</span><div style="flex:1;height:2px;background:#5c5c5c;margin-top:6.94px"></div></div>
<div class="a" style="left:283.0px;top:673.0px;width:26px;height:26px"><svg width="28" height="28" viewBox="0 0 28 28" style="overflow:visible"><path d="M0.9 2.1H16V8.2H7.2V18.2H0.9Z" fill="#c6c6c6"/><rect x="8.1" y="9.2" width="16.5" height="16" fill="none" stroke="#c6c6c6" stroke-width="1.8" stroke-dasharray="3.6 2.6" stroke-dashoffset="1"/></svg></div>
<div class="t it" style="left:323.3px;top:675.21px;font-size:22.8px;color:#ffffff;letter-spacing:-0.408px;transform:scaleY(1.070);transform-origin:0 84.6%;">Copy Reference</div>
<div class="a" style="left:283.0px;top:710.2px;width:26px;height:26px"><svg width="28" height="28" viewBox="0 0 28 28" style="overflow:visible"><path d="M0.9 2.1H16V8.2H7.2V18.2H0.9Z" fill="#c6c6c6"/><rect x="8.1" y="9.2" width="16.5" height="16" fill="none" stroke="#c6c6c6" stroke-width="1.8" stroke-dasharray="3.6 2.6" stroke-dashoffset="1"/></svg></div>
<div class="t it" style="left:323.3px;top:712.41px;font-size:22.8px;color:#ffffff;letter-spacing:-0.115px;transform:scaleY(1.070);transform-origin:0 84.6%;">Copy File Path</div>
<div class="a" style="left:283.0px;top:747.4px;width:26px;height:26px"><svg width="28" height="28" viewBox="0 0 28 28" style="overflow:visible"><rect x="1" y="6.6" width="4.6" height="4" fill="#c6c6c6"/><rect x="1" y="17.1" width="4.6" height="4.3" fill="#c6c6c6"/><rect x="8.9" y="9.6" width="8.3" height="8.6" fill="#c6c6c6"/><rect x="20.8" y="3.8" width="4.3" height="2.8" fill="#c6c6c6"/><rect x="20.8" y="9.9" width="4.3" height="2.5" fill="#c6c6c6"/><rect x="20.8" y="15.6" width="4.3" height="3" fill="#c6c6c6"/><rect x="20.8" y="21.8" width="4.3" height="2.5" fill="#c6c6c6"/><path d="M5.6 8.6L8.9 12M5.6 19.2L8.9 16M17.2 11L20.8 5.2M17.2 12.5L20.8 11.2M17.2 15.5L20.8 17M17.2 17L20.8 23" stroke="#8e8e8e" stroke-width="1.1"/></svg></div>
<div class="t it" style="left:323.3px;top:749.61px;font-size:22.8px;color:#ffffff;letter-spacing:-0.339px;transform:scaleY(1.070);transform-origin:0 84.6%;">Reference Viewer...</div>
<div class="t" style="right:726.2px;top:754.52px;font-size:17.0px;color:#c2c2c2">ALT+SHIFT+R</div>
<div class="a" style="left:283.0px;top:784.6px;width:26px;height:26px"><svg width="28" height="28" viewBox="0 0 28 28" style="overflow:visible"><rect x="2.8" y="3.7" width="9" height="4.7" fill="#c6c6c6"/><rect x="2.8" y="9.8" width="9" height="4.3" fill="#8e8e8e"/><rect x="2.8" y="15.6" width="9" height="9" fill="#c6c6c6"/><rect x="13.2" y="4" width="10.1" height="5.1" fill="#8e8e8e"/><rect x="13.2" y="10.9" width="10.1" height="7.5" fill="#c6c6c6"/><rect x="13.2" y="19.9" width="10.1" height="4.7" fill="#8e8e8e"/></svg></div>
<div class="t it" style="left:323.3px;top:786.81px;font-size:22.8px;color:#ffffff;letter-spacing:-0.060px;transform:scaleY(1.070);transform-origin:0 84.6%;">Size Map...</div>
<div class="t" style="right:726.2px;top:791.72px;font-size:17.0px;color:#c2c2c2">ALT+SHIFT+M</div>
<div class="a" style="left:283.0px;top:821.8px;width:26px;height:26px"><svg width="28" height="28" viewBox="0 0 28 28" style="overflow:visible"><path d="M10 1.8H18.6L25.1 8.7V20.9H10Z" fill="#8e8e8e"/><path d="M18.6 1.8V8.7H25.1Z" fill="#c6c6c6"/><path d="M18.6 1.8L25.1 8.7" stroke="#383838" stroke-width="1"/><circle cx="10" cy="17" r="5" fill="#383838" stroke="#c6c6c6" stroke-width="2"/><path d="M6.6 20.6L2.2 24.7" stroke="#c6c6c6" stroke-width="2.2"/></svg></div>
<div class="t it" style="left:323.3px;top:824.01px;font-size:22.8px;color:#ffffff;letter-spacing:0.271px;transform:scaleY(1.070);transform-origin:0 84.6%;">Audit Assets...</div>
<div class="t" style="right:726.2px;top:828.92px;font-size:17.0px;color:#c2c2c2">ALT+SHIFT+A</div>
<div class="a" style="left:283.0px;top:859.0px;width:26px;height:26px"><svg width="28" height="28" viewBox="0 0 28 28" style="overflow:visible"><path d="M2.8 16.5H23.7C23.7 22.3 19 25.9 13.25 25.9C7.5 25.9 2.8 22.3 2.8 16.5Z" fill="#c6c6c6"/><path d="M6.8 14.7C5.2 12.5 8 10.5 6.6 8.2S6 4.5 7.2 2.8M13.6 14.7C12 12.5 14.8 10.5 13.4 8.2S12.8 4.5 14 2.8M19.7 14.7C18.1 12.5 20.9 10.5 19.5 8.2S18.9 4.5 20.1 2.8" fill="none" stroke="#8e8e8e" stroke-width="1.6"/></svg></div>
<div class="t it" style="left:323.3px;top:861.21px;font-size:22.8px;color:#ffffff;letter-spacing:0.054px;transform:scaleY(1.070);transform-origin:0 84.6%;">Shader Cook Statistics...</div>
<div class="a" style="left:283.0px;top:896.2px;width:26px;height:26px"><svg width="28" height="28" viewBox="0 0 28 28" style="overflow:visible"><rect x="2.6" y="6.8" width="20.7" height="14.7" rx="1" fill="#c6c6c6"/><path d="M8.6 9.3Q5.4 8.6 5.4 14.15Q5.4 19.7 8.6 19" fill="none" stroke="#383838" stroke-width="1.6"/><path d="M9.5 13.2H21.5M13.2 9.5V17M18 9.5V17" stroke="#383838" stroke-width="1.4"/></svg></div>
<div class="t it" style="left:323.3px;top:898.41px;font-size:22.8px;color:#ffffff;letter-spacing:-0.222px;transform:scaleY(1.070);transform-origin:0 84.6%;">Open AtomCueSheet.h</div>
<div class="a" style="left:283.0px;top:933.4px;width:26px;height:26px"><svg width="28" height="28" viewBox="0 0 28 28" style="overflow:visible"><path d="M4.7 7.3H21.4M7.5 8C11 9 10 19.3 21.4 19.3" fill="none" stroke="#8e8e8e" stroke-width="1.5"/><circle cx="4.7" cy="7.3" r="3.3" fill="#c6c6c6"/><circle cx="21.4" cy="7.3" r="3.3" fill="#c6c6c6"/><circle cx="21.4" cy="19.3" r="3.3" fill="#c6c6c6"/></svg></div>
<div class="t it" style="left:323.3px;top:935.61px;font-size:22.8px;color:#ffffff;letter-spacing:-0.070px;transform:scaleY(1.070);transform-origin:0 84.6%;">Connect To Source Control...</div>
<div class="a" style="left:721.0px;top:479.0px;width:520.5px;height:293.5px;background:#383838;border:1px solid #454545"></div>
<div class="a" style="left:741.7px;top:504.26px;width:479.3px;height:16.0px;display:flex;align-items:flex-start"><span style="font-size:16.0px;line-height:1;font-weight:bold;color:#6e6e6e;letter-spacing:1.91px;margin-right:22.59px;white-space:nowrap;will-change:transform">LOCALIZATION ID</span><div style="flex:1;height:2px;background:#5c5c5c;margin-top:6.94px"></div></div>
<div class="t it" style="left:764.5px;top:539.29px;font-size:22.0px;color:#ffffff;letter-spacing:-0.086px;transform:scaleY(1.070);transform-origin:0 84.6%;">ID: B98B1DB34ECD7337377EA69CE133817D</div>
<div class="t it" style="left:764.5px;top:575.81px;font-size:22.8px;color:#ffffff;letter-spacing:0.120px;transform:scaleY(1.070);transform-origin:0 84.6%;">Reset Localization ID</div>
<div class="a" style="left:741.7px;top:617.46px;width:479.3px;height:16.0px;display:flex;align-items:flex-start"><span style="font-size:16.0px;line-height:1;font-weight:bold;color:#6e6e6e;letter-spacing:1.68px;margin-right:22.82px;white-space:nowrap;will-change:transform">LOCALIZATION CACHE</span><div style="flex:1;height:2px;background:#5c5c5c;margin-top:6.94px"></div></div>
<div class="t it" style="left:764.5px;top:651.81px;font-size:22.8px;color:#ffffff;letter-spacing:0.127px;transform:scaleY(1.070);transform-origin:0 84.6%;">Show Localization Cache</div>
<div class="a" style="left:741.7px;top:693.46px;width:479.3px;height:16.0px;display:flex;align-items:flex-start"><span style="font-size:16.0px;line-height:1;font-weight:bold;color:#6e6e6e;letter-spacing:1.75px;margin-right:22.75px;white-space:nowrap;will-change:transform">MANAGE LOCALIZED ASSET</span><div style="flex:1;height:2px;background:#5c5c5c;margin-top:6.94px"></div></div>
<div class="a" style="left:721.5px;top:720.3px;width:519.5px;height:37.5px;background:#0070e0;"></div>
<div class="t it" style="left:764.5px;top:727.81px;font-size:22.8px;color:#eef6ff;letter-spacing:0.029px;transform:scaleY(1.070);transform-origin:0 84.6%;">Create Localized Asset</div>
<svg class="a" style="left:1212.2px;top:729.0px" width="14" height="20" viewBox="0 0 14 20"><path d="M3.5 3.2L10 10L3.5 16.8" fill="none" stroke="#d4dcea" stroke-width="3" stroke-linecap="round" stroke-linejoin="round"/></svg>
<div class="a" style="left:720.3px;top:516.0px;width:2.6px;height:256.5px;background:#424242;"></div>
<div class="a" style="left:1241.0px;top:721.0px;width:137.0px;height:66.0px;background:#383838;border:1px solid #454545"></div>
<div class="t it" style="left:1285.5px;top:742.61px;font-size:22.8px;color:#ffffff;transform:scaleY(1.070);transform-origin:0 84.6%;">English</div>
<div class="a" style="left:1117.0px;top:790.0px;width:302.0px;height:59.0px;background:#efefef;border:2px solid #0c0c0c;border-top:1.5px solid #262626;border-left:1.5px solid #1a1a1a;box-shadow:inset -1.5px -1.5px 1.5px rgba(0,0,0,0.13), inset 1px 1px 0 rgba(255,255,255,0.6)"></div>
<div class="t" style="left:1134.5px;top:808.74px;font-size:20.4px;color:#111111;letter-spacing:-0.03px;-webkit-text-stroke:0.2px #111;">Create a new localized asset.</div>
</body></html>
